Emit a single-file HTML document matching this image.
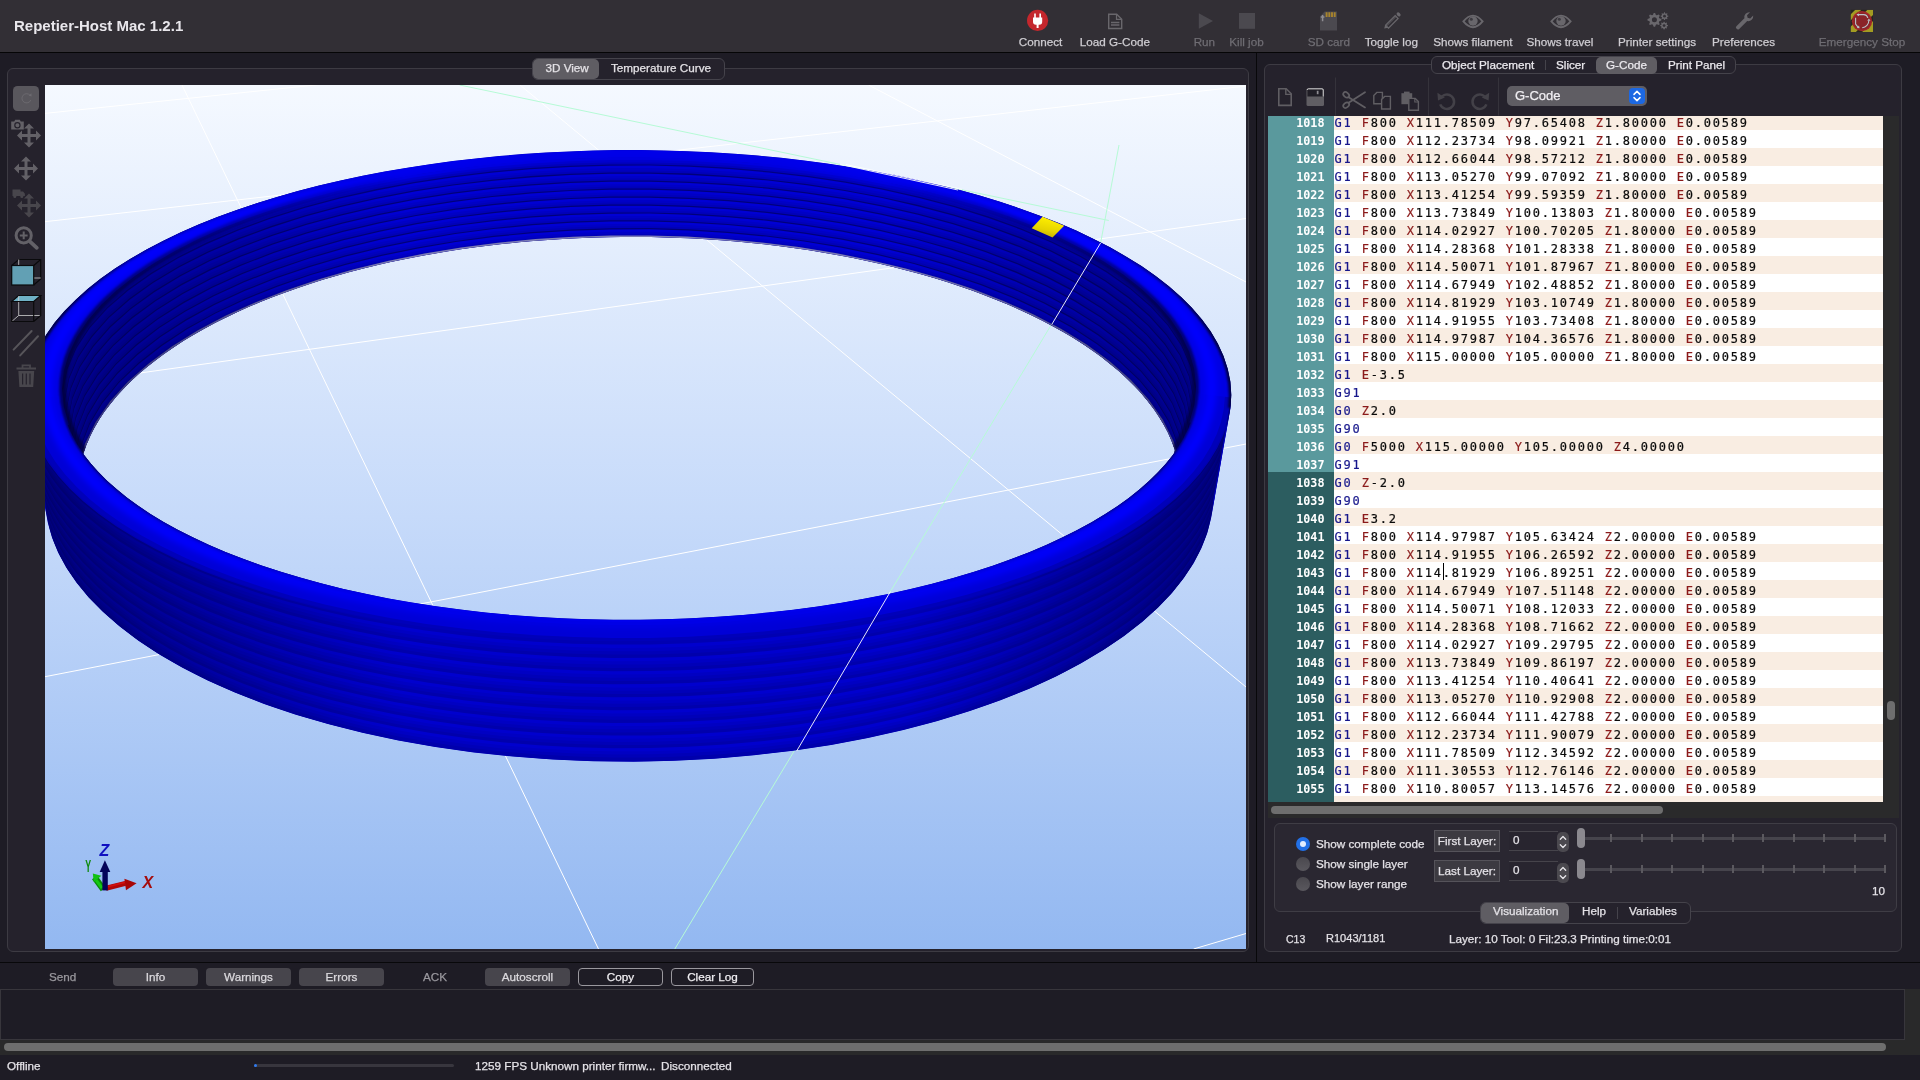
<!DOCTYPE html>
<html lang="en"><head><meta charset="utf-8"><title>Repetier-Host Mac 1.2.1</title>
<style>
*{box-sizing:border-box;margin:0;padding:0}
html,body{width:1920px;height:1080px;overflow:hidden;background:#1e1c25}
body{font-family:"Liberation Sans",sans-serif;font-size:11.7px;color:#dddbe0;-webkit-font-smoothing:antialiased}
#app{will-change:transform;position:relative;width:1920px;height:1080px;background:#1e1c25;overflow:hidden}
.abs{position:absolute}
.t{position:absolute;white-space:pre;line-height:14px;height:14px;-webkit-text-stroke:0.25px;color:#e4e2e7}
.tc{text-align:center}
#tb{position:absolute;left:0;top:0;width:1920px;height:51.5px;background:#322f35}
#tbline{position:absolute;left:0;top:51.5px;width:1920px;height:1.5px;background:#050506}
#title{position:absolute;left:14px;top:16.75px;font-size:15px;font-weight:700;color:#e9e7ec;line-height:18px;white-space:pre}
.tl{position:absolute;top:35px;-webkit-text-stroke:0.25px;line-height:14px;white-space:pre;color:#cfcdd2;font-size:11.7px;transform:translateX(-50%)}
.tl.dis{color:#6f6d73}
.ti{position:absolute}
.gb{position:absolute;border:1px solid #3d3b43;border-radius:6px;background:#25222c}
.seg{position:absolute;border:1px solid #45434b;border-radius:6px;background:#25222c}
.segsel{position:absolute;border-radius:5px;background:#5f5d63}
.v3d{position:absolute;left:45px;top:85px;display:block}
#vsplit{position:absolute;left:1256px;top:53px;width:1px;height:909px;background:#08080a}
#hsplit{position:absolute;left:0;top:962px;width:1920px;height:1px;background:#08080a}
.code{position:absolute;left:1268px;top:116px;width:615px;height:686px;overflow:hidden;background:#fff}
.row{position:absolute;left:0;width:615px;height:18px;white-space:pre}
.row.p{background:#f9ede2}
.gut{position:absolute;left:0;top:0;width:66px;height:18px;background:#5a999d;color:#fff;font-family:"DejaVu Sans Mono","Liberation Mono",monospace;font-weight:700;font-size:11.75px;line-height:22px;text-align:right;padding-right:9.5px;overflow:hidden}
.gut.d{background:#2c5d60}
.ct{position:absolute;left:66.6px;top:2px;height:18px;line-height:18px;font-family:"DejaVu Sans Mono","Liberation Mono",monospace;font-size:12px;letter-spacing:1.776px;color:#0a0a0a;-webkit-text-stroke:0.2px}
.ct i{font-style:normal;color:#8b1a1a}
.ct b{font-weight:400;color:#17178c}
.btn{position:absolute;top:968px;height:18px;border-radius:4px;background:#47454c;color:#dcdade;text-align:center;line-height:18px;font-size:11.7px;-webkit-text-stroke:0.25px}
.btn.o{background:transparent;border:1px solid #9a989e;line-height:16px;color:#f0eef2}

</style></head>
<body>
<div id="app">
<div id="tb"></div><div id="tbline"></div>
<div id="title">Repetier-Host Mac 1.2.1</div>
<div class="tl" style="left:1040.5px">Connect</div>
<div class="tl" style="left:1114.8px">Load G-Code</div>
<div class="tl dis" style="left:1204.4px">Run</div>
<div class="tl dis" style="left:1246.5px">Kill job</div>
<div class="tl dis" style="left:1328.8px">SD card</div>
<div class="tl" style="left:1391.3px">Toggle log</div>
<div class="tl" style="left:1472.8px">Shows filament</div>
<div class="tl" style="left:1560px">Shows travel</div>
<div class="tl" style="left:1657px">Printer settings</div>
<div class="tl" style="left:1743.5px">Preferences</div>
<div class="tl dis" style="left:1862px">Emergency Stop</div>
<svg class="abs" style="left:1000px;top:0" width="920" height="51" viewBox="1000 0 920 51"><circle cx="1037.6" cy="20.4" r="10.6" fill="#c4272d"/><path d="M1034.2,13.5h1.6v4h3.6v-4h1.6v4h1.2v4.2a3,3 0 0 1 -3,3h-0.6v3.3h-2v-3.3h-0.6a3,3 0 0 1 -3,-3v-4.2h1.2z" fill="#fff"/><path d="M1108.7,14.2h8l5,5v9.3h-13z" fill="none" stroke="#69676c" stroke-width="1.4"/><path d="M1116.5,14.2v5.2h5.2" fill="none" stroke="#69676c" stroke-width="1.2"/><path d="M1111,22.5h8.4M1111,25h8.4" stroke="#69676c" stroke-width="1.4"/><path d="M1198.8,13.2L1213,21L1198.8,28.8z" fill="#4b494f"/><rect x="1239" y="13" width="16" height="15.8" fill="#4b494f"/><path d="M1320,16.6l4.6,-5.2h12.4v19.2h-17z" fill="#4b494f"/><path d="M1326.6,12.2v4.8M1329.3,12.2v4.8M1332,12.2v4.8M1334.7,12.2v4.8" stroke="#a8842c" stroke-width="1.9"/><path d="M1322.6,15v6.2M1320.8,16.9h3.6" stroke="#8f8d93" stroke-width="1.5"/><path d="M1385.6,25.2l9.6,-9.6l2.9,2.9l-9.6,9.6z" fill="none" stroke="#69676c" stroke-width="1.2"/><path d="M1384.2,28.6l1,-3.8l2.9,2.9z" fill="#69676c"/><path d="M1386.6,25.9l9.6,-9.6" stroke="#69676c" stroke-width="0.9"/><ellipse cx="1398.6" cy="14.4" rx="2.3" ry="1.7" transform="rotate(45 1398.6 14.4)" fill="#69676c"/><path d="M1463.4,21.4q9.6,-11.6 19.2,0q-9.6,11.6 -19.2,0z" fill="none" stroke="#69676c" stroke-width="1.9"/><circle cx="1473" cy="21" r="4.7" fill="#69676c"/><circle cx="1471.3" cy="19.3" r="1.5" fill="#3c3a40"/><path d="M1551.4,21.4q9.6,-11.6 19.2,0q-9.6,11.6 -19.2,0z" fill="none" stroke="#69676c" stroke-width="1.9"/><circle cx="1561" cy="21" r="4.7" fill="#69676c"/><circle cx="1559.3" cy="19.3" r="1.5" fill="#3c3a40"/><path d="M1661.3,19.1L1661.3,20.5L1659.3,21.3L1658.9,22.2L1659.7,24.2L1658.8,25.1L1656.8,24.3L1655.9,24.7L1655.1,26.7L1653.7,26.7L1652.9,24.7L1652.0,24.3L1650.0,25.1L1649.1,24.2L1649.9,22.2L1649.5,21.3L1647.5,20.5L1647.5,19.1L1649.5,18.3L1649.9,17.4L1649.1,15.4L1650.0,14.5L1652.0,15.3L1652.9,14.9L1653.7,12.9L1655.1,12.9L1655.9,14.9L1656.8,15.3L1658.8,14.5L1659.7,15.4L1658.9,17.4L1659.3,18.3Z" fill="#69676c"/><circle cx="1654.4" cy="19.8" r="2.5" fill="#322f35"/><path d="M1668.4,15.8L1668.4,16.6L1667.3,17.0L1667.0,17.6L1667.5,18.7L1667.0,19.2L1665.9,18.7L1665.3,19.0L1664.9,20.1L1664.1,20.1L1663.7,19.0L1663.1,18.7L1662.0,19.2L1661.5,18.7L1662.0,17.6L1661.7,17.0L1660.6,16.6L1660.6,15.8L1661.7,15.4L1662.0,14.8L1661.5,13.7L1662.0,13.2L1663.1,13.7L1663.7,13.4L1664.1,12.3L1664.9,12.3L1665.3,13.4L1665.9,13.7L1667.0,13.2L1667.5,13.7L1667.0,14.8L1667.3,15.4Z" fill="#69676c"/><circle cx="1664.5" cy="16.2" r="1.4" fill="#322f35"/><path d="M1668.0,25.2L1668.0,26.0L1666.9,26.4L1666.6,27.0L1667.1,28.1L1666.6,28.6L1665.5,28.1L1664.9,28.4L1664.5,29.5L1663.7,29.5L1663.3,28.4L1662.7,28.1L1661.6,28.6L1661.1,28.1L1661.6,27.0L1661.3,26.4L1660.2,26.0L1660.2,25.2L1661.3,24.8L1661.6,24.2L1661.1,23.1L1661.6,22.6L1662.7,23.1L1663.3,22.8L1663.7,21.7L1664.5,21.7L1664.9,22.8L1665.5,23.1L1666.6,22.6L1667.1,23.1L1666.6,24.2L1666.9,24.8Z" fill="#69676c"/><circle cx="1664.1" cy="25.6" r="1.4" fill="#322f35"/><path d="M1736.6,28.8a1.8,1.8 0 0 1 -0.2,-2.6l8,-8a5,5 0 0 1 5.6,-6l-3,3l0.6,2.6l2.6,0.6l3,-3a5,5 0 0 1 -6,5.6l-8,8a1.8,1.8 0 0 1 -2.6,-0.2z" fill="#69676c"/><clipPath id="esq"><rect x="1850.8" y="9.8" width="22.2" height="22.2"/></clipPath><rect x="1850.8" y="9.8" width="22.2" height="22.2" fill="#26261e"/><path d="M1855.3,9.8L1861.3,9.8L1831.3,39.8L1825.3,39.8ZM1867.5,9.8L1878.1,9.8L1848.1,39.8L1837.5,39.8ZM1884.3,9.8L1896.8,9.8L1866.8,39.8L1854.3,39.8Z" fill="#a39c22" clip-path="url(#esq)"/><circle cx="1862" cy="21.2" r="10.1" fill="#a4262a"/><circle cx="1862" cy="21.2" r="8.6" fill="#8a2428"/><path d="M1857.2,14.6h6.6a4.4,4.4 0 0 1 4,3.4M1868.8,20.5a7,7 0 0 1 -6.6,7.2M1855.6,17.8v6.2l2.8,3.6" fill="none" stroke="#b9c3c8" stroke-width="1.1"/><path d="M1856.4,14.4l2.6,-0.8v2.6zM1868.9,18.4l1.6,2.4h-3.2zM1859.6,28.2l-2.8,-0.2l2.2,-2.4z" fill="#b9c3c8"/></svg>
<div class="gb" style="left:7px;top:68px;width:1242px;height:884px"></div>
<div class="seg" style="left:532px;top:58px;width:193px;height:22px"></div>
<div class="segsel" style="left:533px;top:59px;width:66px;height:20px"></div>
<div class="t " style="left:545.5px;top:60.5px;color:#e4e2e6;">3D View</div>
<div class="t " style="left:611px;top:60.5px;color:#e4e2e6;">Temperature Curve</div>
<svg class="v3d" width="1201" height="864" viewBox="45 85 1201 864">
<defs>
<linearGradient id="bg" x1="0" y1="0" x2="0" y2="1"><stop offset="0" stop-color="#f5f9ff"/><stop offset="0.5" stop-color="#c6dafa"/><stop offset="1" stop-color="#93b8f1"/></linearGradient>
<clipPath id="rc"><path clip-rule="evenodd" d="M26.5,398.8L27.2,385.4L29.6,372.3L33.6,359.4L39.2,346.8L46.3,334.6L54.7,322.6L64.5,311.1L75.5,299.9L87.6,289L100.8,278.6L115,268.6L130.1,259L146.1,249.8L162.9,241L180.4,232.6L198.6,224.6L217.4,217.1L236.8,210L256.7,203.3L277.1,197L297.9,191.1L319.1,185.6L340.7,180.5L362.7,175.8L384.9,171.5L407.4,167.7L430.1,164.2L453,161.1L476.1,158.4L499.3,156L522.6,154.1L546.1,152.5L569.6,151.4L593.2,150.6L616.8,150.1L640.4,150.1L664,150.4L687.6,151.2L711.1,152.3L734.6,153.7L757.9,155.6L781.1,157.8L804.1,160.5L827,163.5L849.7,166.9L872.1,170.7L894.3,174.8L916.1,179.4L937.7,184.4L958.8,189.8L979.6,195.6L1000,201.8L1019.8,208.4L1039.2,215.4L1058,222.8L1076.1,230.6L1093.6,238.9L1110.4,247.6L1126.3,256.7L1141.5,266.1L1155.7,276L1168.9,286.3L1181.1,297L1192.1,308.1L1202,319.5L1210.6,331.3L1217.8,343.5L1223.5,355.9L1227.7,368.7L1230.4,381.8L1231.3,395L1230.4,408.5L1211.1,518.1L1207.3,533L1201.5,547.9L1193.8,562.9L1184,577.8L1172.2,592.7L1158.2,607.5L1142.1,622L1123.8,636.2L1103.3,650.1L1080.7,663.5L1056,676.4L1029.3,688.7L1000.5,700.3L969.9,711.1L937.5,721L903.4,730L867.9,738L831,744.9L792.9,750.7L754,755.3L714.3,758.7L674.1,760.8L633.7,761.7L593.2,761.3L552.9,759.6L513.1,756.6L473.9,752.4L435.6,747L398.4,740.5L362.5,732.8L328.1,724.1L295.2,714.5L264.1,704L234.9,692.6L207.7,680.5L182.5,667.8L159.4,654.5L138.5,640.8L119.7,626.6L103.1,612.1L88.7,597.4L76.4,582.5L66.2,567.5L58.1,552.5L52,537.5L47.8,522.6L27.7,412.4ZM84.1,454.9L90.8,463.6L98.4,472.1L107,480.7L116.5,489.1L126.8,497.5L138.2,505.8L150.4,513.9L163.6,521.9L177.7,529.7L192.7,537.3L208.6,544.7L225.4,551.9L243,558.8L261.5,565.5L280.9,571.8L301,577.8L321.8,583.5L343.4,588.9L365.6,593.8L388.5,598.4L411.9,602.6L435.9,606.3L460.4,609.6L485.2,612.5L510.5,614.9L536,616.8L561.8,618.2L587.7,619.2L613.7,619.7L639.8,619.7L665.8,619.2L691.7,618.3L717.5,616.8L743.1,614.9L768.3,612.5L793.3,609.7L817.8,606.4L841.8,602.7L865.3,598.5L888.3,593.9L910.6,589L932.2,583.7L953.2,578L973.4,572L992.8,565.7L1011.4,559L1029.2,552.2L1046.2,545L1062.2,537.6L1077.3,530L1091.6,522.2L1104.9,514.3L1117.3,506.2L1128.8,497.9L1139.4,489.6L1149,481.1L1157.7,472.6L1165.6,464L1172.5,455.4L1174.1,453.3L1174.9,449.9L1171.8,441.4L1168.1,433L1163.8,424.8L1158.9,416.7L1153.5,408.7L1147.6,400.9L1141.2,393.3L1134.2,385.8L1126.8,378.5L1119,371.3L1110.7,364.4L1102.1,357.6L1093,351L1083.6,344.6L1073.8,338.3L1063.7,332.3L1053.2,326.4L1042.4,320.7L1031.4,315.3L1020.1,310L1008.5,304.8L996.6,299.9L984.5,295.2L972.2,290.6L959.7,286.3L947,282.1L934.1,278.1L921,274.3L907.7,270.7L894.3,267.3L880.8,264.1L867.1,261L853.2,258.1L839.3,255.4L825.3,253L811.1,250.6L796.9,248.5L782.5,246.6L768.1,244.8L753.7,243.2L739.1,241.8L724.5,240.6L709.9,239.5L695.2,238.6L680.5,238L665.8,237.5L651.1,237.1L636.3,237L621.5,237L606.8,237.2L592,237.6L577.3,238.2L562.6,238.9L547.9,239.9L533.3,241L518.7,242.3L504.1,243.8L489.6,245.4L475.2,247.2L460.9,249.3L446.6,251.5L432.4,253.9L418.4,256.4L404.4,259.2L390.6,262.1L376.8,265.2L363.3,268.6L349.8,272.1L336.6,275.7L323.4,279.6L310.5,283.7L297.8,287.9L285.2,292.4L272.9,297L260.8,301.8L248.9,306.8L237.3,312L226,317.4L214.9,323L204.2,328.8L193.7,334.7L183.6,340.8L173.8,347.2L164.4,353.7L155.3,360.4L146.7,367.2L138.4,374.3L130.6,381.5L123.3,388.9L116.4,396.5L110.1,404.2L104.2,412.1L98.9,420.1L94.1,428.3L89.9,436.7L86.3,445.1L83.3,453.7L83.3,453.7Z"/></clipPath>
<clipPath id="tic"><path d="M1126.3,256.7L1110.4,247.6L1093.6,238.9L1076.1,230.6L1058,222.8L1039.2,215.4L1019.8,208.4L1000,201.8L979.6,195.6L958.8,189.8L937.7,184.4L916.1,179.4L894.3,174.8L872.1,170.7L849.7,166.9L827,163.5L804.1,160.5L781.1,157.8L757.9,155.6L734.6,153.7L711.1,152.3L687.6,151.2L664,150.4L640.4,150.1L616.8,150.1L593.2,150.6L569.6,151.4L546.1,152.5L522.6,154.1L499.3,156L476.1,158.4L453,161.1L430.1,164.2L407.4,167.7L384.9,171.5L362.7,175.8L340.7,180.5L319.1,185.6L297.9,191.1L277.1,197L256.7,203.3L236.8,210L217.4,217.1L198.6,224.6L180.4,232.6L162.9,241L146.1,249.8L130.1,259L115,268.6L100.8,278.6L87.6,289L75.5,299.9L64.5,311.1L54.7,322.6L46.3,334.6L39.2,346.8L33.6,359.4L29.6,372.3L27.2,385.4L26.5,398.8L27.7,412.4L30.7,426.1L35.7,440L42.8,453.9L52,467.9L63.3,481.7L76.8,495.5L92.6,509.1L110.7,522.5L131,535.5L153.6,548.1L178.5,560.3L205.5,571.9L234.6,582.9L265.8,593.1L298.9,602.6L333.8,611.2L370.2,618.9L408.2,625.5L447.4,631.2L487.7,635.7L528.7,639L570.4,641.3L612.4,642.3L654.5,642.1L696.5,640.7L738,638.1L778.9,634.3L818.9,629.5L857.8,623.5L895.4,616.5L931.5,608.6L965.9,599.7L998.6,590L1029.3,579.5L1057.9,568.3L1084.4,556.6L1108.7,544.3L1130.8,531.5L1150.6,518.4L1168.2,505L1183.5,491.4L1196.6,477.6L1207.5,463.7L1216.3,449.8L1223,436L1227.7,422.2L1230.4,408.5L1231.3,395L1230.4,381.8L1227.7,368.7L1223.5,355.9L1217.8,343.5L1210.6,331.3L1202,319.5L1192.1,308.1L1181.1,297L1168.9,286.3L1155.7,276L1141.5,266.1Z"/></clipPath>
<linearGradient id="dk" x1="45" x2="1246" y1="0" y2="0" gradientUnits="userSpaceOnUse"><stop offset="0" stop-color="#000040" stop-opacity="0.55"/><stop offset="0.10" stop-color="#000040" stop-opacity="0.4"/><stop offset="0.3" stop-color="#000040" stop-opacity="0"/><stop offset="0.7" stop-color="#000040" stop-opacity="0"/><stop offset="0.9" stop-color="#000040" stop-opacity="0.4"/><stop offset="1" stop-color="#000040" stop-opacity="0.55"/></linearGradient>
<linearGradient id="dkf" x1="45" x2="1246" y1="0" y2="0" gradientUnits="userSpaceOnUse"><stop offset="0" stop-color="#000030" stop-opacity="0.5"/><stop offset="0.08" stop-color="#000030" stop-opacity="0.36"/><stop offset="0.3" stop-color="#000030" stop-opacity="0"/><stop offset="0.72" stop-color="#000030" stop-opacity="0"/><stop offset="0.92" stop-color="#000030" stop-opacity="0.38"/><stop offset="1" stop-color="#000030" stop-opacity="0.5"/></linearGradient>
<linearGradient id="edge" x1="45" x2="1246" y1="0" y2="0" gradientUnits="userSpaceOnUse"><stop offset="0" stop-color="#000030" stop-opacity="0.9"/><stop offset="0.12" stop-color="#000030" stop-opacity="0.6"/><stop offset="0.3" stop-color="#000030" stop-opacity="0"/><stop offset="0.7" stop-color="#000030" stop-opacity="0"/><stop offset="0.88" stop-color="#000030" stop-opacity="0.6"/><stop offset="1" stop-color="#000030" stop-opacity="0.9"/></linearGradient>
<linearGradient id="crg" x1="45" x2="1246" y1="0" y2="0" gradientUnits="userSpaceOnUse"><stop offset="0" stop-color="#00f" stop-opacity="1"/><stop offset="0.15" stop-color="#00f" stop-opacity="0.9"/><stop offset="0.4" stop-color="#00f" stop-opacity="0.25"/><stop offset="0.6" stop-color="#00f" stop-opacity="0.25"/><stop offset="0.85" stop-color="#00f" stop-opacity="0.9"/><stop offset="1" stop-color="#00f" stop-opacity="1"/></linearGradient>
<filter id="bl" x="-5%" y="-5%" width="110%" height="110%"><feGaussianBlur stdDeviation="3"/></filter>
<filter id="bl2" x="-5%" y="-5%" width="110%" height="110%"><feGaussianBlur stdDeviation="1.2"/></filter>
</defs>
<rect x="45" y="85" width="1201" height="864" fill="url(#bg)"/>
<path d="M45,113.4L325,84M45,221.7L1246,86M140,373L1246,218.5M45,676.7L1246,444M1193.6,949L1246,933.5M182,85L598.5,949M520,85L1246,687M868.5,85L1246,282" stroke="#fff" stroke-width="1" fill="none"/>
<path d="M459.6,85L1108.8,220.5M1119,145L1100.6,243L674.8,949" stroke="#b6fbd6" stroke-width="1" fill="none"/>
<path fill-rule="evenodd" d="M26.5,398.8L27.2,385.4L29.6,372.3L33.6,359.4L39.2,346.8L46.3,334.6L54.7,322.6L64.5,311.1L75.5,299.9L87.6,289L100.8,278.6L115,268.6L130.1,259L146.1,249.8L162.9,241L180.4,232.6L198.6,224.6L217.4,217.1L236.8,210L256.7,203.3L277.1,197L297.9,191.1L319.1,185.6L340.7,180.5L362.7,175.8L384.9,171.5L407.4,167.7L430.1,164.2L453,161.1L476.1,158.4L499.3,156L522.6,154.1L546.1,152.5L569.6,151.4L593.2,150.6L616.8,150.1L640.4,150.1L664,150.4L687.6,151.2L711.1,152.3L734.6,153.7L757.9,155.6L781.1,157.8L804.1,160.5L827,163.5L849.7,166.9L872.1,170.7L894.3,174.8L916.1,179.4L937.7,184.4L958.8,189.8L979.6,195.6L1000,201.8L1019.8,208.4L1039.2,215.4L1058,222.8L1076.1,230.6L1093.6,238.9L1110.4,247.6L1126.3,256.7L1141.5,266.1L1155.7,276L1168.9,286.3L1181.1,297L1192.1,308.1L1202,319.5L1210.6,331.3L1217.8,343.5L1223.5,355.9L1227.7,368.7L1230.4,381.8L1231.3,395L1230.4,408.5L1211.1,518.1L1207.3,533L1201.5,547.9L1193.8,562.9L1184,577.8L1172.2,592.7L1158.2,607.5L1142.1,622L1123.8,636.2L1103.3,650.1L1080.7,663.5L1056,676.4L1029.3,688.7L1000.5,700.3L969.9,711.1L937.5,721L903.4,730L867.9,738L831,744.9L792.9,750.7L754,755.3L714.3,758.7L674.1,760.8L633.7,761.7L593.2,761.3L552.9,759.6L513.1,756.6L473.9,752.4L435.6,747L398.4,740.5L362.5,732.8L328.1,724.1L295.2,714.5L264.1,704L234.9,692.6L207.7,680.5L182.5,667.8L159.4,654.5L138.5,640.8L119.7,626.6L103.1,612.1L88.7,597.4L76.4,582.5L66.2,567.5L58.1,552.5L52,537.5L47.8,522.6L27.7,412.4ZM84.1,454.9L90.8,463.6L98.4,472.1L107,480.7L116.5,489.1L126.8,497.5L138.2,505.8L150.4,513.9L163.6,521.9L177.7,529.7L192.7,537.3L208.6,544.7L225.4,551.9L243,558.8L261.5,565.5L280.9,571.8L301,577.8L321.8,583.5L343.4,588.9L365.6,593.8L388.5,598.4L411.9,602.6L435.9,606.3L460.4,609.6L485.2,612.5L510.5,614.9L536,616.8L561.8,618.2L587.7,619.2L613.7,619.7L639.8,619.7L665.8,619.2L691.7,618.3L717.5,616.8L743.1,614.9L768.3,612.5L793.3,609.7L817.8,606.4L841.8,602.7L865.3,598.5L888.3,593.9L910.6,589L932.2,583.7L953.2,578L973.4,572L992.8,565.7L1011.4,559L1029.2,552.2L1046.2,545L1062.2,537.6L1077.3,530L1091.6,522.2L1104.9,514.3L1117.3,506.2L1128.8,497.9L1139.4,489.6L1149,481.1L1157.7,472.6L1165.6,464L1172.5,455.4L1174.1,453.3L1174.9,449.9L1171.8,441.4L1168.1,433L1163.8,424.8L1158.9,416.7L1153.5,408.7L1147.6,400.9L1141.2,393.3L1134.2,385.8L1126.8,378.5L1119,371.3L1110.7,364.4L1102.1,357.6L1093,351L1083.6,344.6L1073.8,338.3L1063.7,332.3L1053.2,326.4L1042.4,320.7L1031.4,315.3L1020.1,310L1008.5,304.8L996.6,299.9L984.5,295.2L972.2,290.6L959.7,286.3L947,282.1L934.1,278.1L921,274.3L907.7,270.7L894.3,267.3L880.8,264.1L867.1,261L853.2,258.1L839.3,255.4L825.3,253L811.1,250.6L796.9,248.5L782.5,246.6L768.1,244.8L753.7,243.2L739.1,241.8L724.5,240.6L709.9,239.5L695.2,238.6L680.5,238L665.8,237.5L651.1,237.1L636.3,237L621.5,237L606.8,237.2L592,237.6L577.3,238.2L562.6,238.9L547.9,239.9L533.3,241L518.7,242.3L504.1,243.8L489.6,245.4L475.2,247.2L460.9,249.3L446.6,251.5L432.4,253.9L418.4,256.4L404.4,259.2L390.6,262.1L376.8,265.2L363.3,268.6L349.8,272.1L336.6,275.7L323.4,279.6L310.5,283.7L297.8,287.9L285.2,292.4L272.9,297L260.8,301.8L248.9,306.8L237.3,312L226,317.4L214.9,323L204.2,328.8L193.7,334.7L183.6,340.8L173.8,347.2L164.4,353.7L155.3,360.4L146.7,367.2L138.4,374.3L130.6,381.5L123.3,388.9L116.4,396.5L110.1,404.2L104.2,412.1L98.9,420.1L94.1,428.3L89.9,436.7L86.3,445.1L83.3,453.7L83.3,453.7Z" fill="#0000b8"/>
<g clip-path="url(#rc)">
<g clip-path="url(#tic)">
<path d="M1190.8,422.8L1196.5,400.2L1196.9,378.1L1192.2,356.6L1182.9,335.9L1169.4,316.2L1152.1,297.4L1131.5,279.8L1107.8,263.3L1081.4,248L1052.7,233.9L1021.9,221L989.4,209.3L955.3,198.8L919.8,189.5L883.3,181.5L845.8,174.6L807.5,168.8L768.7,164.3L729.3,160.9L689.7,158.6L649.8,157.5L609.9,157.6L570,158.7L530.3,161.1L490.9,164.5L451.9,169.2L413.6,175L375.9,182L339.3,190.1L303.7,199.5L269.4,210.1L236.7,221.9L205.8,235L176.9,249.2L150.4,264.7L126.6,281.3L105.9,299.1L88.6,318L75.1,337.9L65.8,358.7L61.2,380.3L61.7,402.6L67.6,425.2L68.4,429.7L62.4,407L61.9,384.6L66.5,362.9L75.8,342L89.2,322.1L106.5,303.1L127.2,285.2L151,268.5L177.4,253L206.2,238.7L237.1,225.6L269.8,213.8L304,203.1L339.6,193.7L376.2,185.5L413.8,178.5L452.1,172.7L491,168L530.4,164.5L570,162.2L609.9,161L649.8,160.9L689.6,162.1L729.3,164.3L768.5,167.7L807.4,172.3L845.6,178L883,185L919.6,193.1L954.9,202.4L989,212.9L1021.5,224.7L1052.3,237.6L1080.9,251.8L1107.3,267.2L1130.9,283.7L1151.5,301.4L1168.8,320.2L1182.2,340.1L1191.5,360.8L1196.1,382.4L1195.8,404.6L1190,427.3Z" fill="#0000de"/>
<path d="M1190.3,426L1196,403.4L1196.3,381.2L1191.7,359.6L1182.4,338.9L1168.9,319.1L1151.7,300.3L1131.1,282.6L1107.4,266.1L1081.1,250.7L1052.4,236.5L1021.6,223.6L989.1,211.9L955,201.4L919.6,192.1L883.1,184L845.6,177L807.4,171.3L768.6,166.7L729.3,163.3L689.6,161.1L649.8,160L609.9,160L570,161.2L530.3,163.5L491,167L452,171.7L413.7,177.5L376.1,184.5L339.5,192.7L303.9,202.1L269.7,212.7L237,224.6L206.1,237.6L177.3,251.9L150.8,267.4L127,284.1L106.3,302L89,320.9L75.6,340.8L66.3,361.7L61.7,383.4L62.2,405.7L68.2,428.4L68.9,432.9L63,410.1L62.5,387.7L67,366L76.2,345L89.7,325L106.9,306L127.6,288L151.4,271.3L177.8,255.7L206.6,241.4L237.4,228.3L270.1,216.4L304.3,205.7L339.8,196.2L376.4,188L413.9,181L452.2,175.1L491.1,170.5L530.4,166.9L570.1,164.6L609.9,163.4L649.8,163.4L689.6,164.5L729.2,166.8L768.5,170.2L807.3,174.8L845.4,180.5L882.9,187.5L919.4,195.6L954.7,205L988.8,215.5L1021.2,227.3L1052,240.3L1080.6,254.5L1106.9,269.9L1130.5,286.5L1151.1,304.3L1168.3,323.1L1181.7,343L1191,363.8L1195.6,385.5L1195.3,407.7L1189.5,430.5Z" fill="#0000cd"/>
<path d="M1189.7,429.2L1195.5,406.5L1195.8,384.2L1191.2,362.6L1181.9,341.8L1168.5,322L1151.3,303.1L1130.7,285.4L1107,268.8L1080.7,253.4L1052.1,239.2L1021.4,226.2L988.9,214.5L954.8,203.9L919.4,194.6L882.9,186.5L845.5,179.5L807.3,173.8L768.5,169.2L729.2,165.8L689.6,163.5L649.8,162.4L609.9,162.4L570.1,163.6L530.4,166L491.1,169.5L452.2,174.1L413.9,180L376.3,187L339.7,195.2L304.2,204.7L270,215.3L237.3,227.2L206.4,240.3L177.6,254.6L151.2,270.2L127.5,286.9L106.8,304.8L89.5,323.8L76,343.8L66.8,364.8L62.3,386.5L62.8,408.9L68.7,431.7L69.4,435.6L63.4,412.7L62.9,390.3L67.5,368.5L76.6,347.5L90.1,327.4L107.3,308.3L128,290.4L151.7,273.6L178.1,258L206.8,243.6L237.7,230.4L270.3,218.5L304.5,207.8L339.9,198.4L376.5,190.1L414.1,183L452.3,177.2L491.2,172.5L530.5,169L570.1,166.6L609.9,165.4L649.8,165.4L689.6,166.5L729.1,168.8L768.4,172.2L807.2,176.8L845.3,182.6L882.7,189.6L919.2,197.7L954.5,207.1L988.5,217.7L1021,229.5L1051.7,242.5L1080.3,256.7L1106.6,272.2L1130.2,288.9L1150.8,306.7L1167.9,325.6L1181.4,345.5L1190.6,366.4L1195.2,388L1194.8,410.3L1189.1,433.1Z" fill="#0000ba"/>
<path d="M1189.3,431.9L1195.1,409.1L1195.4,386.8L1190.8,365.2L1181.5,344.3L1168.1,324.4L1150.9,305.5L1130.3,287.7L1106.7,271.1L1080.5,255.7L1051.8,241.4L1021.1,228.4L988.6,216.6L954.6,206.1L919.3,196.7L882.8,188.6L845.4,181.6L807.2,175.8L768.4,171.2L729.2,167.8L689.6,165.5L649.8,164.4L609.9,164.5L570.1,165.7L530.5,168L491.2,171.5L452.3,176.2L414,182.1L376.5,189.1L339.9,197.3L304.4,206.8L270.2,217.5L237.6,229.4L206.7,242.5L177.9,256.9L151.5,272.5L127.8,289.3L107.1,307.2L89.9,326.2L76.5,346.3L67.3,367.3L62.7,389.1L63.2,411.5L69.2,434.3L69.7,437.2L63.7,414.3L63.2,391.8L67.7,370L76.9,349L90.3,328.9L107.5,309.8L128.2,291.8L151.9,275L178.3,259.3L207,244.9L237.8,231.8L270.4,219.8L304.6,209.1L340.1,199.6L376.6,191.4L414.1,184.3L452.4,178.4L491.2,173.7L530.5,170.2L570.1,167.9L609.9,166.7L649.8,166.6L689.5,167.7L729.1,170L768.3,173.4L807.1,178.1L845.3,183.8L882.6,190.8L919.1,199L954.4,208.4L988.4,219L1020.9,230.8L1051.5,243.8L1080.1,258.1L1106.4,273.6L1130,290.3L1150.5,308.1L1167.7,327L1181.1,347L1190.3,367.9L1195,389.6L1194.6,411.9L1188.8,434.7Z" fill="#000082"/>
<path d="M1189,433.4L1194.8,410.7L1195.2,388.3L1190.5,366.7L1181.3,345.8L1167.9,325.8L1150.7,306.9L1130.1,289.1L1106.5,272.5L1080.3,257L1051.7,242.8L1021,229.7L988.5,217.9L954.5,207.3L919.2,198L882.7,189.8L845.3,182.8L807.2,177.1L768.4,172.5L729.1,169L689.6,166.8L649.8,165.6L609.9,165.7L570.1,166.9L530.5,169.2L491.2,172.7L452.3,177.4L414.1,183.3L376.6,190.4L340,198.6L304.5,208.1L270.3,218.8L237.7,230.7L206.9,243.9L178.1,258.3L151.7,273.9L128,290.7L107.4,308.6L90.1,327.7L76.7,347.8L67.5,368.8L63,390.6L63.5,413L69.5,435.9L70.2,440.4L64.2,417.4L63.7,394.9L68.2,373L77.4,351.9L90.8,331.8L108,312.6L128.6,294.6L152.3,277.7L178.6,262.1L207.3,247.6L238.1,234.4L270.7,222.4L304.8,211.7L340.3,202.2L376.8,193.9L414.3,186.8L452.5,180.9L491.3,176.2L530.6,172.6L570.2,170.3L610,169.1L649.8,169L689.5,170.2L729,172.4L768.3,175.9L807,180.5L845.1,186.3L882.5,193.3L918.9,201.5L954.2,210.9L988.2,221.5L1020.6,233.4L1051.2,246.5L1079.8,260.8L1106,276.3L1129.6,293L1150.1,310.9L1167.3,329.9L1180.7,349.9L1189.9,370.9L1194.5,392.6L1194.1,415L1188.3,437.9Z" fill="#0000d4"/>
<path d="M1188.5,436.6L1194.3,413.8L1194.7,391.4L1190,369.7L1180.8,348.7L1167.5,328.7L1150.3,309.8L1129.7,291.9L1106.2,275.2L1079.9,259.7L1051.4,245.4L1020.7,232.3L988.3,220.5L954.3,209.9L919,200.5L882.5,192.3L845.2,185.3L807,179.5L768.3,174.9L729.1,171.5L689.5,169.2L649.8,168.1L609.9,168.1L570.2,169.3L530.6,171.7L491.3,175.2L452.5,179.9L414.2,185.8L376.7,192.9L340.2,201.1L304.7,210.6L270.6,221.4L238,233.3L207.2,246.5L178.5,261L152.1,276.6L128.4,293.5L107.8,311.5L90.6,330.6L77.2,350.7L68,371.8L63.5,393.7L64,416.2L70,439.1L70.8,443.6L64.8,420.6L64.2,398L68.7,376L77.9,354.9L91.2,334.7L108.4,315.5L129,297.4L152.6,280.5L179,264.8L207.7,250.3L238.4,237L271,225L305.1,214.2L340.5,204.7L377,196.4L414.4,189.3L452.6,183.3L491.4,178.6L530.7,175.1L570.2,172.7L610,171.5L649.8,171.5L689.5,172.6L729,174.9L768.2,178.3L806.9,183L845,188.8L882.3,195.8L918.7,204L954,213.5L987.9,224.1L1020.3,236L1050.9,249.1L1079.5,263.5L1105.7,279.1L1129.2,295.8L1149.7,313.8L1166.8,332.8L1180.2,352.9L1189.4,373.9L1194,395.7L1193.6,418.1L1187.8,441.1Z" fill="#0000c6"/>
<path d="M1188,439.8L1193.8,416.9L1194.2,394.5L1189.6,372.7L1180.4,351.7L1167,331.6L1149.9,312.6L1129.4,294.7L1105.8,278L1079.6,262.4L1051,248.1L1020.4,235L988,223.1L954.1,212.4L918.8,203L882.4,194.8L845,187.8L806.9,182L768.2,177.4L729,173.9L689.5,171.6L649.8,170.5L610,170.5L570.2,171.7L530.7,174.1L491.4,177.6L452.6,182.4L414.4,188.3L376.9,195.4L340.4,203.7L305,213.2L270.9,224L238.3,236L207.5,249.2L178.8,263.7L152.5,279.4L128.8,296.3L108.2,314.3L91,333.5L77.7,353.7L68.5,374.8L64,396.7L64.6,419.3L70.5,442.3L71.2,446.2L65.2,423.1L64.7,400.5L69.1,378.5L78.3,357.3L91.6,337.1L108.8,317.8L129.3,299.7L153,282.8L179.3,267L207.9,252.5L238.7,239.2L271.2,227.2L305.3,216.4L340.7,206.8L377.2,198.4L414.6,191.3L452.8,185.4L491.5,180.7L530.7,177.1L570.3,174.7L610,173.5L649.8,173.5L689.4,174.6L728.9,176.9L768.1,180.4L806.8,185L844.9,190.9L882.2,197.9L918.5,206.1L953.8,215.6L987.7,226.3L1020.1,238.2L1050.7,251.3L1079.2,265.7L1105.4,281.3L1128.9,298.1L1149.4,316.1L1166.5,335.2L1179.8,355.3L1189,376.4L1193.5,398.2L1193.1,420.7L1187.3,443.7Z" fill="#0000b8"/>
<path d="M1187.5,442.4L1193.3,419.5L1193.7,397L1189.2,375.2L1180,354.1L1166.6,334L1149.5,315L1129,297L1105.5,280.2L1079.3,264.7L1050.8,250.3L1020.2,237.1L987.8,225.2L953.9,214.6L918.6,205.1L882.2,196.9L844.9,189.9L806.8,184L768.1,179.4L729,175.9L689.5,173.6L649.8,172.5L610,172.6L570.3,173.8L530.7,176.1L491.5,179.7L452.7,184.4L414.5,190.3L377.1,197.4L340.6,205.8L305.2,215.3L271.1,226.1L238.5,238.1L207.8,251.4L179.1,265.9L152.8,281.7L129.2,298.6L108.6,316.7L91.4,335.9L78.1,356.2L68.9,377.3L64.5,399.3L65,421.9L71,444.9L71.5,447.8L65.5,424.7L64.9,402L69.4,380L78.5,358.8L91.8,338.5L109,319.3L129.5,301.1L153.1,284.1L179.4,268.4L208.1,253.8L238.8,240.5L271.3,228.4L305.4,217.6L340.8,208L377.2,199.7L414.7,192.6L452.8,186.6L491.6,181.9L530.8,178.3L570.3,175.9L610,174.7L649.8,174.7L689.4,175.8L728.9,178.1L768,181.6L806.7,186.2L844.8,192.1L882.1,199.1L918.4,207.4L953.7,216.9L987.6,227.6L1019.9,239.5L1050.5,252.7L1079,267.1L1105.2,282.7L1128.7,299.5L1149.1,317.5L1166.2,336.6L1179.6,356.8L1188.7,377.8L1193.3,399.7L1192.9,422.3L1187.1,445.3Z" fill="#00007a"/>
<path d="M1187.3,444L1193.1,421L1193.5,398.5L1188.9,376.6L1179.8,355.6L1166.4,335.5L1149.3,316.4L1128.8,298.4L1105.3,281.6L1079.2,266L1050.6,251.6L1020,238.4L987.7,226.5L953.7,215.8L918.5,206.4L882.1,198.1L844.8,191.1L806.8,185.3L768.1,180.6L728.9,177.2L689.4,174.9L649.8,173.7L610,173.8L570.3,175L530.8,177.4L491.5,180.9L452.8,185.6L414.6,191.6L377.2,198.7L340.7,207L305.3,216.6L271.2,227.4L238.7,239.5L208,252.7L179.3,267.3L153,283L129.4,300L108.8,318.1L91.7,337.4L78.3,357.6L69.2,378.8L64.7,400.8L65.3,423.5L71.3,446.5L72,451L66,427.8L65.4,405.1L69.9,383L79,361.7L92.3,341.4L109.4,322.1L130,303.9L153.5,286.9L179.8,271L208.4,256.5L239.1,243.1L271.6,231L305.6,220.2L341,210.6L377.4,202.2L414.8,195L452.9,189.1L491.7,184.3L530.9,180.8L570.4,178.4L610,177.2L649.7,177.1L689.4,178.2L728.8,180.5L768,184L806.6,188.7L844.6,194.6L881.9,201.6L918.2,209.9L953.4,219.4L987.3,230.1L1019.6,242.1L1050.2,255.3L1078.7,269.8L1104.8,285.4L1128.3,302.3L1148.7,320.3L1165.8,339.5L1179.1,359.7L1188.2,380.8L1192.8,402.8L1192.4,425.4L1186.6,448.4Z" fill="#0000d4"/>
<path d="M1186.8,447.2L1192.6,424.1L1193,401.6L1188.4,379.6L1179.3,358.5L1166,338.4L1148.9,319.2L1128.4,301.2L1105,284.3L1078.8,268.7L1050.3,254.2L1019.8,241.1L987.4,229.1L953.5,218.4L918.3,208.9L882,200.6L844.7,193.6L806.7,187.7L768,183.1L728.9,179.6L689.4,177.3L649.7,176.1L610,176.2L570.3,177.4L530.8,179.8L491.6,183.3L452.9,188.1L414.7,194L377.4,201.2L340.9,209.6L305.5,219.2L271.5,230L239,242.1L208.3,255.4L179.7,270L153.4,285.8L129.8,302.8L109.3,321L92.1,340.2L78.8,360.6L69.7,381.8L65.2,403.9L65.8,426.6L71.8,449.7L72.6,454.1L66.6,430.9L66,408.2L70.4,386L79.5,364.7L92.8,344.3L109.9,324.9L130.4,306.7L153.9,289.6L180.1,273.7L208.7,259.1L239.4,245.7L271.9,233.6L305.9,222.7L341.2,213.1L377.6,204.7L415,197.5L453.1,191.5L491.8,186.8L530.9,183.2L570.4,180.8L610,179.6L649.7,179.5L689.4,180.7L728.8,183L767.9,186.5L806.5,191.1L844.5,197L881.7,204.1L918,212.4L953.2,221.9L987.1,232.7L1019.4,244.7L1049.9,257.9L1078.3,272.4L1104.4,288.2L1127.9,305.1L1148.3,323.2L1165.4,342.4L1178.6,362.6L1187.8,383.8L1192.3,405.8L1191.8,428.5L1186,451.6Z" fill="#0000c6"/>
<path d="M1186.2,450.3L1192,427.2L1192.5,404.6L1187.9,382.6L1178.8,361.4L1165.5,341.2L1148.5,322L1128,304L1104.6,287.1L1078.5,271.4L1050,256.9L1019.5,243.7L987.2,231.7L953.3,220.9L918.1,211.4L881.8,203.1L844.6,196L806.5,190.2L767.9,185.5L728.8,182L689.4,179.7L649.7,178.6L610,178.6L570.4,179.8L530.9,182.2L491.7,185.8L453,190.5L414.9,196.5L377.5,203.7L341.1,212.1L305.8,221.7L271.8,232.6L239.3,244.7L208.6,258.1L180,272.7L153.8,288.5L130.2,305.6L109.7,323.8L92.6,343.1L79.3,363.5L70.2,384.8L65.8,406.9L66.3,429.7L72.4,452.9L73,456.8L67,433.5L66.4,410.7L70.8,388.5L79.9,367.1L93.2,346.7L110.2,327.3L130.7,309L154.2,291.9L180.4,276L209,261.3L239.7,247.9L272.1,235.7L306.1,224.8L341.4,215.2L377.8,206.7L415.1,199.5L453.2,193.6L491.9,188.8L531,185.2L570.4,182.8L610.1,181.6L649.7,181.5L689.3,182.7L728.7,185L767.8,188.5L806.4,193.2L844.4,199.1L881.6,206.2L917.9,214.5L953,224L986.8,234.8L1019.1,246.9L1049.6,260.1L1078.1,274.7L1104.1,290.4L1127.6,307.4L1148,325.5L1165,344.8L1178.3,365.1L1187.3,386.3L1191.9,408.3L1191.4,431L1185.6,454.2Z" fill="#0000b8"/>
<path d="M1185.8,452.9L1191.6,429.8L1192.1,407.1L1187.5,385.1L1178.4,363.9L1165.2,343.6L1148.1,324.4L1127.7,306.3L1104.3,289.3L1078.2,273.6L1049.7,259.1L1019.2,245.8L987,233.8L953.1,223L917.9,213.5L881.7,205.2L844.4,198.1L806.4,192.2L767.8,187.5L728.8,184L689.3,181.7L649.7,180.6L610,180.6L570.4,181.8L531,184.2L491.8,187.8L453.1,192.6L415,198.6L377.7,205.8L341.3,214.2L306,223.8L272,234.7L239.5,246.9L208.9,260.3L180.3,274.9L154.1,290.8L130.5,307.9L110,326.1L93,345.5L79.7,366L70.6,387.3L66.2,409.5L66.8,432.3L72.8,455.5L73.3,458.3L67.3,435.1L66.7,412.2L71.1,390L80.1,368.6L93.4,348.1L110.4,328.7L130.9,310.4L154.4,293.2L180.6,277.3L209.2,262.6L239.8,249.2L272.2,237L306.2,226.1L341.5,216.4L377.9,208L415.2,200.8L453.2,194.8L491.9,190L531,186.4L570.5,184L610.1,182.8L649.7,182.7L689.3,183.9L728.7,186.2L767.8,189.7L806.3,194.4L844.3,200.3L881.5,207.4L917.8,215.7L952.9,225.3L986.7,236.1L1019,248.2L1049.5,261.5L1077.9,276L1104,291.8L1127.4,308.8L1147.8,326.9L1164.8,346.2L1178,366.5L1187.1,387.8L1191.6,409.8L1191.2,432.6L1185.3,455.8Z" fill="#00007a"/>
<path d="M1185.5,454.5L1191.4,431.3L1191.8,408.6L1187.3,386.6L1178.2,365.3L1164.9,345L1147.9,325.8L1127.5,307.7L1104.1,290.7L1078,274.9L1049.6,260.4L1019.1,247.1L986.8,235.1L953,224.3L917.8,214.7L881.6,206.4L844.4,199.3L806.4,193.4L767.8,188.7L728.7,185.2L689.3,182.9L649.7,181.8L610.1,181.8L570.4,183L531,185.4L491.9,189L453.2,193.8L415.1,199.8L377.8,207L341.4,215.4L306.1,225.1L272.1,236L239.7,248.2L209,261.6L180.5,276.2L154.3,292.2L130.7,309.3L110.3,327.6L93.2,347L79.9,367.4L70.9,388.8L66.4,411L67.1,433.8L73.1,457.1L73.8,461.5L67.8,438.2L67.2,415.2L71.6,393L80.6,371.5L93.8,351L110.9,331.5L131.3,313.1L154.8,296L181,280L209.5,265.3L240.1,251.8L272.5,239.6L306.4,228.6L341.7,218.9L378,210.5L415.3,203.2L453.4,197.2L492,192.4L531.1,188.8L570.5,186.4L610.1,185.2L649.7,185.1L689.3,186.3L728.6,188.6L767.7,192.1L806.2,196.8L844.2,202.8L881.3,209.9L917.6,218.2L952.7,227.8L986.5,238.7L1018.7,250.8L1049.2,264.1L1077.6,278.7L1103.6,294.5L1127,311.5L1147.3,329.7L1164.3,349.1L1177.6,369.4L1186.6,390.7L1191.1,412.9L1190.6,435.7L1184.8,458.9Z" fill="#0000d4"/>
<path d="M1185,457.7L1190.9,434.4L1191.3,411.7L1186.8,389.6L1177.7,368.3L1164.5,347.9L1147.5,328.6L1127.1,310.4L1103.7,293.4L1077.7,277.6L1049.3,263L1018.8,249.7L986.6,237.6L952.8,226.8L917.7,217.2L881.4,208.9L844.2,201.8L806.3,195.9L767.7,191.2L728.7,187.6L689.3,185.3L649.7,184.2L610.1,184.2L570.5,185.4L531.1,187.9L492,191.5L453.3,196.3L415.3,202.3L378,209.5L341.6,217.9L306.3,227.6L272.4,238.6L240,250.8L209.4,264.2L180.8,278.9L154.6,294.9L131.2,312L110.7,330.4L93.7,349.8L80.4,370.3L71.4,391.8L67,414L67.6,436.9L73.6,460.2L74.4,464.6L68.3,441.2L67.7,418.3L72.1,396L81.1,374.4L94.3,353.9L111.3,334.3L131.7,315.9L155.2,298.7L181.3,282.7L209.8,267.9L240.4,254.4L272.8,242.2L306.7,231.2L341.9,221.4L378.2,213L415.5,205.7L453.5,199.7L492.1,194.9L531.2,191.2L570.5,188.8L610.1,187.6L649.7,187.5L689.2,188.7L728.6,191L767.6,194.6L806.1,199.3L844,205.2L881.2,212.4L917.4,220.7L952.5,230.4L986.2,241.2L1018.4,253.3L1048.9,266.7L1077.2,281.3L1103.2,297.2L1126.6,314.3L1146.9,332.5L1163.9,351.9L1177.1,372.3L1186.1,393.7L1190.6,415.9L1190.1,438.7L1184.3,462Z" fill="#0000c6"/>
<path d="M1184.5,460.8L1190.3,437.5L1190.8,414.7L1186.3,392.5L1177.3,371.2L1164.1,350.8L1147.1,331.4L1126.7,313.2L1103.4,296.1L1077.4,280.3L1049,265.7L1018.5,252.3L986.3,240.2L952.5,229.3L917.5,219.7L881.2,211.4L844.1,204.2L806.2,198.3L767.6,193.6L728.6,190.1L689.3,187.7L649.7,186.6L610.1,186.6L570.5,187.9L531.1,190.3L492.1,193.9L453.4,198.7L415.4,204.7L378.1,212L341.8,220.4L306.6,230.2L272.6,241.1L240.3,253.4L209.7,266.9L181.2,281.6L155,297.6L131.6,314.8L111.1,333.2L94.1,352.7L80.9,373.3L71.9,394.8L67.5,417.1L68.1,440L74.2,463.4L74.8,467.3L68.8,443.8L68.1,420.8L72.5,398.4L81.5,376.9L94.7,356.2L111.7,336.7L132.1,318.2L155.5,300.9L181.6,284.9L210.1,270.1L240.6,256.6L273,244.3L306.9,233.3L342.1,223.5L378.4,215L415.6,207.7L453.6,201.7L492.2,196.9L531.2,193.2L570.6,190.8L610.1,189.6L649.7,189.5L689.2,190.7L728.5,193L767.5,196.6L806,201.3L843.9,207.3L881,214.4L917.2,222.8L952.3,232.5L986,243.3L1018.2,255.5L1048.6,268.9L1076.9,283.6L1102.9,299.5L1126.3,316.6L1146.6,334.9L1163.5,354.3L1176.7,374.7L1185.7,396.2L1190.2,418.4L1189.7,441.3L1183.9,464.6Z" fill="#0000b8"/>
<path d="M1184.1,463.4L1189.9,440.1L1190.4,417.2L1185.9,395L1176.9,373.6L1163.7,353.1L1146.7,333.7L1126.4,315.5L1103.1,298.4L1077.1,282.5L1048.7,267.8L1018.3,254.5L986.1,242.3L952.4,231.5L917.3,221.8L881.1,213.4L844,206.3L806.1,200.3L767.5,195.6L728.6,192.1L689.2,189.7L649.7,188.6L610.1,188.6L570.6,189.9L531.2,192.3L492.2,195.9L453.6,200.7L415.5,206.8L378.3,214L342,222.5L306.8,232.3L272.9,243.3L240.5,255.5L210,269.1L181.5,283.8L155.3,299.9L131.9,317.1L111.5,335.5L94.5,355.1L81.3,375.7L72.3,397.2L67.9,419.6L68.6,442.6L74.6,466L75.1,468.8L69,445.3L68.4,422.3L72.7,399.9L81.7,378.3L94.9,357.7L111.9,338.1L132.3,319.6L155.7,302.3L181.8,286.2L210.3,271.4L240.8,257.9L273.1,245.6L307,234.5L342.2,224.8L378.5,216.3L415.7,209L453.7,202.9L492.2,198.1L531.3,194.5L570.6,192L610.1,190.8L649.7,190.7L689.2,191.9L728.5,194.2L767.5,197.8L806,202.5L843.8,208.5L880.9,215.7L917.1,224.1L952.2,233.7L985.9,244.6L1018.1,256.8L1048.4,270.2L1076.8,284.9L1102.8,300.8L1126.1,317.9L1146.4,336.3L1163.3,355.7L1176.5,376.2L1185.5,397.6L1190,419.9L1189.5,442.8L1183.6,466.2Z" fill="#00007a"/>
<path d="M1183.8,465L1189.7,441.6L1190.2,418.7L1185.7,396.5L1176.7,375L1163.5,354.6L1146.5,335.1L1126.2,316.8L1102.9,299.7L1076.9,283.8L1048.6,269.2L1018.2,255.8L986,243.6L952.3,232.7L917.2,223.1L881,214.7L843.9,207.5L806,201.5L767.5,196.8L728.5,193.3L689.2,190.9L649.7,189.8L610.1,189.8L570.6,191.1L531.2,193.5L492.2,197.1L453.6,201.9L415.6,208L378.4,215.3L342.1,223.8L306.9,233.5L273,244.5L240.7,256.8L210.1,270.4L181.6,285.2L155.5,301.2L132.1,318.5L111.7,337L94.7,356.5L81.5,377.2L72.5,398.7L68.2,421.1L68.8,444.1L74.9,467.6L75.6,471.9L69.6,448.4L68.9,425.3L73.2,402.9L82.2,381.2L95.4,360.5L112.3,340.9L132.7,322.4L156.1,305L182.1,288.9L210.6,274L241.1,260.4L273.4,248.1L307.2,237.1L342.4,227.3L378.6,218.7L415.8,211.4L453.8,205.3L492.3,200.5L531.3,196.9L570.7,194.4L610.2,193.2L649.7,193.1L689.2,194.3L728.4,196.6L767.4,200.2L805.8,204.9L843.7,210.9L880.8,218.1L916.9,226.6L951.9,236.2L985.6,247.2L1017.8,259.4L1048.1,272.8L1076.4,287.5L1102.4,303.5L1125.7,320.7L1146,339.1L1162.9,358.5L1176,379.1L1185,400.6L1189.5,422.9L1189,445.9L1183.1,469.3Z" fill="#0000d4"/>
<path d="M1183.3,468.1L1189.2,444.7L1189.7,421.7L1185.2,399.4L1176.2,377.9L1163,357.4L1146.1,337.9L1125.8,319.6L1102.5,302.4L1076.6,286.5L1048.3,271.8L1017.9,258.3L985.7,246.2L952,235.2L917,225.6L880.8,217.1L843.8,209.9L805.9,204L767.4,199.2L728.5,195.7L689.2,193.3L649.7,192.2L610.1,192.2L570.6,193.5L531.3,195.9L492.3,199.5L453.7,204.4L415.8,210.4L378.6,217.7L342.3,226.3L307.1,236.1L273.3,247.1L241,259.4L210.4,273L182,287.8L155.9,303.9L132.5,321.3L112.1,339.8L95.2,359.4L82,380.1L73,401.7L68.7,424.1L69.3,447.2L75.4,470.7L76.2,475.1L70.1,451.5L69.4,428.3L73.7,405.8L82.7,384.1L95.8,363.4L112.7,343.7L133.1,325.1L156.4,307.7L182.5,291.6L210.9,276.7L241.4,263L273.6,250.7L307.5,239.6L342.6,229.8L378.8,221.2L416,213.9L453.9,207.8L492.4,202.9L531.4,199.3L570.7,196.8L610.2,195.6L649.7,195.5L689.1,196.7L728.4,199L767.3,202.6L805.7,207.4L843.6,213.4L880.6,220.6L916.7,229L951.7,238.7L985.4,249.7L1017.5,261.9L1047.8,275.4L1076.1,290.2L1102,306.2L1125.3,323.4L1145.5,341.8L1162.4,361.4L1175.6,382L1184.5,403.5L1189,425.9L1188.4,448.9L1182.6,472.4Z" fill="#0000c6"/>
<path d="M1182.8,471.2L1188.7,447.7L1189.2,424.7L1184.7,402.4L1175.7,380.8L1162.6,360.2L1145.7,340.7L1125.4,322.3L1102.2,305.1L1076.2,289.1L1048,274.4L1017.6,260.9L985.5,248.7L951.8,237.7L916.8,228L880.7,219.6L843.6,212.4L805.8,206.4L767.3,201.6L728.4,198.1L689.1,195.7L649.7,194.6L610.2,194.6L570.7,195.9L531.4,198.3L492.4,201.9L453.9,206.8L415.9,212.9L378.8,220.2L342.5,228.8L307.4,238.6L273.5,249.7L241.3,262L210.8,275.6L182.3,290.5L156.3,306.6L132.9,324L112.6,342.6L95.6,362.2L82.5,383L73.5,404.6L69.2,427.1L69.9,450.3L75.9,473.8L76.6,477.7L70.5,454L69.8,430.8L74.2,408.3L83.1,386.5L96.2,365.8L113.1,346L133.4,327.4L156.8,310L182.8,293.8L211.2,278.8L241.6,265.2L273.9,252.8L307.6,241.7L342.8,231.8L379,223.2L416.1,215.9L454,209.8L492.5,204.9L531.5,201.3L570.7,198.8L610.2,197.6L649.7,197.5L689.1,198.7L728.3,201L767.2,204.6L805.6,209.4L843.4,215.4L880.5,222.6L916.6,231.1L951.5,240.8L985.2,251.8L1017.3,264.1L1047.6,277.6L1075.8,292.4L1101.7,308.4L1125,325.7L1145.2,344.2L1162.1,363.7L1175.2,384.4L1184.1,406L1188.6,428.4L1188,451.5L1182.2,475Z" fill="#0000b8"/>
<path d="M1182.4,473.8L1188.2,450.3L1188.8,427.2L1184.3,404.8L1175.4,383.2L1162.2,362.6L1145.4,343L1125.1,324.6L1101.9,307.4L1076,291.3L1047.7,276.6L1017.4,263.1L985.3,250.8L951.6,239.8L916.6,230.1L880.5,221.6L843.5,214.4L805.7,208.4L767.3,203.6L728.4,200.1L689.1,197.7L649.7,196.6L610.2,196.6L570.7,197.9L531.4,200.3L492.5,204L454,208.8L416.1,214.9L378.9,222.3L342.7,230.8L307.6,240.7L273.8,251.8L241.5,264.2L211,277.8L182.6,292.7L156.6,308.9L133.3,326.3L112.9,344.9L96,364.6L82.9,385.4L74,407.1L69.6,429.6L70.3,452.8L76.4,476.4L76.9,479.2L70.8,455.6L70.1,432.3L74.4,409.8L83.3,388L96.4,367.2L113.3,347.4L133.6,328.8L156.9,311.3L183,295.1L211.3,280.2L241.8,266.5L274,254.1L307.8,242.9L342.9,233.1L379.1,224.5L416.2,217.1L454.1,211L492.6,206.1L531.5,202.5L570.8,200L610.2,198.8L649.7,198.7L689.1,199.9L728.3,202.2L767.2,205.8L805.6,210.6L843.4,216.6L880.4,223.9L916.5,232.3L951.4,242.1L985,253.1L1017.1,265.4L1047.4,278.9L1075.7,293.7L1101.6,309.8L1124.8,327.1L1145,345.6L1161.9,365.2L1175,385.8L1183.9,407.4L1188.3,429.9L1187.8,453L1181.9,476.6Z" fill="#00007a"/>
<path d="M1182.1,475.3L1188,451.8L1188.5,428.7L1184.1,406.3L1175.1,384.7L1162,364L1145.2,344.4L1124.9,326L1101.7,308.7L1075.8,292.7L1047.5,277.9L1017.2,264.3L985.1,252.1L951.5,241.1L916.5,231.4L880.5,222.9L843.4,215.6L805.6,209.6L767.2,204.8L728.3,201.3L689.1,198.9L649.7,197.8L610.2,197.8L570.7,199.1L531.5,201.5L492.5,205.2L454,210L416.1,216.1L379,223.5L342.8,232.1L307.7,241.9L273.9,253L241.6,265.4L211.2,279.1L182.8,294L156.8,310.2L133.5,327.7L113.1,346.3L96.2,366L83.1,386.8L74.2,408.6L69.9,431.1L70.6,454.3L76.7,478L77.4,482.3L71.3,458.6L70.6,435.3L74.9,412.7L83.8,390.9L96.9,370L113.7,350.2L134,331.5L157.3,314L183.3,297.8L211.6,282.8L242.1,269L274.3,256.6L308,245.4L343.1,235.6L379.2,226.9L416.4,219.6L454.2,213.4L492.7,208.5L531.6,204.9L570.8,202.4L610.2,201.1L649.7,201.1L689.1,202.3L728.2,204.6L767.1,208.2L805.5,213L843.2,219L880.2,226.3L916.3,234.8L951.2,244.6L984.8,255.6L1016.9,267.9L1047.1,281.5L1075.3,296.4L1101.2,312.5L1124.4,329.8L1144.6,348.3L1161.4,368L1174.5,388.7L1183.4,410.4L1187.8,432.9L1187.3,456L1181.4,479.7Z" fill="#0000d4"/>
<path d="M1181.6,478.4L1187.5,454.8L1188,431.7L1183.6,409.2L1174.7,387.6L1161.6,366.9L1144.8,347.2L1124.5,328.7L1101.3,311.4L1075.5,295.3L1047.2,280.5L1017,266.9L984.9,254.6L951.3,243.6L916.3,233.8L880.3,225.3L843.3,218.1L805.5,212L767.1,207.3L728.3,203.7L689.1,201.3L649.7,200.1L610.2,200.2L570.8,201.4L531.6,203.9L492.6,207.6L454.2,212.5L416.3,218.6L379.2,225.9L343,234.6L307.9,244.4L274.2,255.6L241.9,268L211.5,281.7L183.2,296.7L157.2,312.9L133.9,330.4L113.6,349.1L96.7,368.9L83.6,389.7L74.7,411.5L70.4,434.1L71.1,457.4L77.2,481.1L77.9,485.4L71.8,461.7L71.1,438.3L75.4,415.7L84.3,393.8L97.3,372.9L114.2,353L134.4,334.2L157.7,316.7L183.7,300.4L212,285.4L242.3,271.6L274.5,259.1L308.2,248L343.3,238L379.4,229.4L416.5,222L454.3,215.8L492.8,210.9L531.7,207.2L570.9,204.8L610.2,203.5L649.7,203.5L689,204.6L728.2,207L767,210.6L805.4,215.4L843.1,221.5L880.1,228.8L916.1,237.3L951,247.1L984.5,258.2L1016.6,270.5L1046.8,284.1L1075,299L1100.8,315.2L1124,332.5L1144.2,351.1L1161,370.8L1174,391.6L1183,413.3L1187.3,435.9L1186.8,459.1L1180.9,482.7Z" fill="#0000c6"/>
<path d="M1181.1,481.5L1187,457.9L1187.5,434.7L1183.1,412.1L1174.2,390.4L1161.2,369.7L1144.3,350L1124.2,331.4L1101,314.1L1075.1,297.9L1046.9,283.1L1016.7,269.5L984.6,257.1L951.1,246.1L916.2,236.3L880.1,227.8L843.1,220.5L805.4,214.5L767,209.7L728.2,206.1L689,203.7L649.7,202.5L610.2,202.6L570.8,203.8L531.6,206.3L492.7,210L454.3,214.9L416.4,221L379.4,228.4L343.2,237L308.1,246.9L274.4,258.1L242.2,270.6L211.8,284.3L183.5,299.4L157.5,315.6L134.3,333.2L114,351.9L97.1,371.7L84.1,392.6L75.2,414.5L70.9,437.1L71.6,460.5L77.7,484.2L78.4,488L72.3,464.2L71.5,440.8L75.8,418.1L84.7,396.2L97.7,375.2L114.5,355.3L134.8,336.5L158,319L183.9,302.6L212.2,287.5L242.6,273.8L274.7,261.3L308.4,250L343.4,240.1L379.6,231.4L416.6,224L454.4,217.9L492.9,212.9L531.7,209.2L570.9,206.8L610.2,205.5L649.7,205.5L689,206.6L728.1,209L766.9,212.6L805.3,217.4L843,223.5L879.9,230.8L915.9,239.4L950.8,249.2L984.3,260.3L1016.3,272.6L1046.6,286.3L1074.7,301.2L1100.5,317.4L1123.7,334.8L1143.8,353.4L1160.6,373.2L1173.7,394L1182.6,415.7L1186.9,438.3L1186.3,461.6L1180.5,485.3Z" fill="#0000b8"/>
<path d="M1180.7,484.1L1186.5,460.4L1187.1,437.2L1182.8,414.6L1173.8,392.8L1160.8,372L1144,352.3L1123.8,333.7L1100.7,316.3L1074.9,300.1L1046.7,285.2L1016.5,271.6L984.4,259.3L950.9,248.2L916,238.4L880,229.8L843,222.5L805.3,216.5L767,211.7L728.2,208.1L689,205.7L649.7,204.5L610.2,204.6L570.9,205.8L531.7,208.3L492.8,212L454.4,216.9L416.6,223L379.5,230.4L343.4,239.1L308.3,249L274.6,260.2L242.5,272.7L212.1,286.5L183.8,301.6L157.9,317.9L134.6,335.4L114.4,354.2L97.5,374.1L84.5,395L75.6,416.9L71.3,439.6L72.1,463L78.2,486.8L78.6,489.6L72.5,465.7L71.8,442.3L76.1,419.6L84.9,397.6L97.9,376.6L114.7,356.7L135,337.9L158.2,320.3L184.1,303.9L212.4,288.8L242.7,275L274.9,262.5L308.6,251.3L343.6,241.3L379.7,232.7L416.7,225.2L454.5,219.1L492.9,214.1L531.8,210.4L570.9,208L610.3,206.7L649.7,206.7L689,207.8L728.1,210.2L766.9,213.8L805.2,218.6L842.9,224.7L879.8,232L915.8,240.6L950.7,250.4L984.2,261.5L1016.2,273.9L1046.4,287.6L1074.6,302.5L1100.4,318.7L1123.5,336.2L1143.6,354.8L1160.4,374.6L1173.4,395.4L1182.3,417.2L1186.7,439.8L1186.1,463.1L1180.2,486.9Z" fill="#00007a"/>
<path d="M1180.4,485.6L1186.3,461.9L1186.9,438.6L1182.5,416L1173.6,394.3L1160.6,373.4L1143.8,353.7L1123.6,335.1L1100.5,317.6L1074.7,301.5L1046.5,286.5L1016.3,272.9L984.3,260.5L950.8,249.4L915.9,239.6L879.9,231L843,223.7L805.2,217.7L766.9,212.9L728.1,209.3L689,206.9L649.7,205.7L610.3,205.7L570.9,207L531.7,209.5L492.9,213.2L454.5,218.1L416.6,224.3L379.6,231.7L343.5,240.3L308.5,250.3L274.8,261.5L242.6,274L212.3,287.8L184,302.9L158,319.2L134.8,336.8L114.6,355.6L97.8,375.5L84.7,396.5L75.9,418.4L71.6,441.1L72.3,464.5L78.4,488.3L79.2,492.7L73.1,468.8L72.3,445.3L76.5,422.5L85.4,400.5L98.4,379.4L115.2,359.5L135.4,340.6L158.6,323L184.5,306.6L212.7,291.4L243,277.6L275.1,265.1L308.8,253.8L343.8,243.8L379.8,235.1L416.9,227.7L454.6,221.5L493,216.5L531.8,212.8L571,210.3L610.3,209.1L649.6,209L688.9,210.2L728,212.6L766.8,216.2L805.1,221L842.8,227.1L879.7,234.5L915.6,243.1L950.5,252.9L984,264L1015.9,276.5L1046.1,290.2L1074.2,305.1L1100,321.4L1123.1,338.9L1143.2,357.6L1160,377.4L1173,398.3L1181.9,420.1L1186.2,442.8L1185.6,466.1L1179.7,489.9Z" fill="#0000d4"/>
<path d="M1179.9,488.7L1185.8,464.9L1186.4,441.6L1182,419L1173.2,397.1L1160.1,376.3L1143.4,356.5L1123.3,337.8L1100.1,320.3L1074.4,304.1L1046.2,289.1L1016,275.4L984.1,263L950.5,251.9L915.7,242.1L879.7,233.5L842.8,226.2L805.1,220.1L766.8,215.2L728.1,211.6L689,209.2L649.7,208.1L610.3,208.1L570.9,209.4L531.8,211.9L493,215.6L454.6,220.5L416.8,226.7L379.8,234.1L343.7,242.8L308.7,252.8L275,264L242.9,276.6L212.6,290.4L184.3,305.5L158.4,321.9L135.2,339.5L115,358.4L98.2,378.3L85.2,399.3L76.3,421.3L72.1,444.1L72.8,467.5L79,491.4L79.7,495.7L73.6,471.8L72.8,448.3L77,425.4L85.8,403.4L98.8,382.3L115.6,362.2L135.8,343.3L158.9,325.7L184.8,309.2L213,294L243.3,280.2L275.4,267.6L309,256.3L344,246.3L380,237.5L417,230.1L454.8,223.9L493.1,218.9L531.9,215.2L571,212.7L610.3,211.4L649.6,211.4L688.9,212.6L728,215L766.7,218.6L805,223.5L842.6,229.6L879.5,236.9L915.4,245.5L950.2,255.4L983.7,266.6L1015.7,279L1045.8,292.8L1073.9,307.8L1099.6,324.1L1122.7,341.6L1142.8,360.3L1159.5,380.2L1172.5,401.1L1181.4,423L1185.7,445.8L1185.1,469.2L1179.2,493Z" fill="#0000c6"/>
<path d="M1179.4,491.8L1185.3,467.9L1185.9,444.6L1181.6,421.9L1172.7,400L1159.7,379.1L1143,359.2L1122.9,340.5L1099.8,323L1074,306.7L1045.9,291.7L1015.8,278L983.8,265.6L950.3,254.4L915.5,244.5L879.6,235.9L842.7,228.6L805,222.5L766.7,217.6L728,214L688.9,211.6L649.6,210.4L610.3,210.5L571,211.8L531.9,214.2L493.1,218L454.7,222.9L417,229.1L380,236.6L343.9,245.3L308.9,255.3L275.3,266.6L243.2,279.1L212.9,293L184.7,308.2L158.8,324.6L135.6,342.3L115.4,361.1L98.7,381.1L85.7,402.2L76.8,424.2L72.6,447.1L73.4,470.6L79.5,494.5L80.1,498.3L74,474.3L73.2,450.8L77.4,427.8L86.2,405.8L99.2,384.6L116,364.5L136.1,345.6L159.3,327.9L185.1,311.4L213.3,296.2L243.6,282.3L275.6,269.7L309.2,258.4L344.1,248.3L380.2,239.6L417.1,232.1L454.9,225.9L493.2,220.9L532,217.2L571,214.7L610.3,213.4L649.6,213.4L688.9,214.5L727.9,216.9L766.6,220.6L804.9,225.5L842.5,231.6L879.4,238.9L915.3,247.6L950.1,257.5L983.5,268.7L1015.4,281.1L1045.5,294.9L1073.6,310L1099.3,326.3L1122.4,343.8L1142.5,362.6L1159.2,382.5L1172.1,403.5L1181,425.4L1185.3,448.2L1184.7,471.7L1178.8,495.6Z" fill="#0000b8"/>
<path d="M1179,494.3L1184.9,470.5L1185.5,447L1181.2,424.3L1172.3,402.4L1159.4,381.4L1142.6,361.5L1122.6,342.8L1099.5,325.2L1073.7,308.9L1045.7,293.9L1015.5,280.1L983.6,267.7L950.1,256.5L915.3,246.6L879.4,238L842.6,230.6L804.9,224.5L766.7,219.6L728,216L688.9,213.6L649.6,212.4L610.3,212.5L571,213.7L531.9,216.2L493.1,220L454.8,224.9L417.1,231.1L380.1,238.6L344.1,247.3L309.1,257.4L275.5,268.7L243.4,281.3L213.2,295.2L185,310.4L159.1,326.8L135.9,344.5L115.8,363.4L99,383.5L86.1,404.6L77.3,426.7L73,449.6L73.8,473.1L79.9,497.1L80.4,499.8L74.3,475.8L73.5,452.2L77.7,429.3L86.5,407.2L99.4,386L116.2,365.9L136.3,347L159.4,329.2L185.3,312.7L213.5,297.5L243.7,283.6L275.7,270.9L309.3,259.6L344.2,249.6L380.3,240.8L417.2,233.3L454.9,227.1L493.2,222.1L532,218.4L571.1,215.9L610.3,214.6L649.6,214.6L688.9,215.7L727.9,218.1L766.6,221.8L804.8,226.6L842.4,232.8L879.3,240.2L915.2,248.8L949.9,258.7L983.4,269.9L1015.3,282.4L1045.4,296.2L1073.5,311.3L1099.2,327.6L1122.2,345.2L1142.3,364L1159,383.9L1171.9,404.9L1180.8,426.9L1185.1,449.7L1184.4,473.2L1178.5,497.1Z" fill="#00007a"/>
<path d="M1178.7,495.9L1184.6,472L1185.2,448.5L1180.9,425.7L1172.1,403.8L1159.1,382.8L1142.4,362.9L1122.4,344.1L1099.3,326.5L1073.6,310.2L1045.5,295.2L1015.4,281.4L983.5,268.9L950,257.7L915.2,247.8L879.3,239.2L842.5,231.8L804.9,225.7L766.6,220.8L727.9,217.2L688.9,214.8L649.6,213.6L610.3,213.7L571,214.9L532,217.4L493.2,221.2L454.9,226.1L417.2,232.3L380.2,239.8L344.2,248.6L309.2,258.6L275.6,269.9L243.6,282.5L213.3,296.5L185.1,311.7L159.3,328.1L136.1,345.9L116,364.8L99.3,384.9L86.3,406L77.5,428.1L73.3,451.1L74.1,474.6L80.2,498.6L80.9,502.9L74.8,478.8L74,455.2L78.2,432.2L86.9,410L99.9,388.8L116.6,368.7L136.7,349.7L159.8,331.9L185.6,315.3L213.8,300.1L244,286.1L276,273.5L309.6,262.1L344.4,252L380.4,243.2L417.4,235.7L455,229.5L493.3,224.5L532.1,220.7L571.1,218.2L610.3,217L649.6,216.9L688.8,218.1L727.8,220.5L766.5,224.2L804.7,229L842.3,235.2L879.1,242.6L915,251.2L949.7,261.2L983.1,272.4L1015,285L1045.1,298.8L1073.1,313.9L1098.8,330.3L1121.8,347.9L1141.9,366.7L1158.5,386.7L1171.5,407.8L1180.3,429.8L1184.6,452.7L1183.9,476.2L1178,500.1Z" fill="#0000d4"/>
<path d="M1178.2,498.9L1184.1,475L1184.8,451.5L1180.5,428.6L1171.7,406.6L1158.7,385.6L1142,365.6L1122,346.8L1098.9,329.2L1073.3,312.8L1045.2,297.7L1015.1,283.9L983.2,271.4L949.8,260.2L915.1,250.3L879.2,241.6L842.4,234.2L804.8,228.1L766.5,223.2L727.9,219.6L688.8,217.1L649.6,216L610.3,216L571.1,217.3L532,219.8L493.3,223.5L455,228.5L417.3,234.8L380.4,242.3L344.4,251L309.5,261.1L275.9,272.5L243.9,285.1L213.6,299.1L185.5,314.3L159.7,330.8L136.5,348.6L116.4,367.6L99.7,387.7L86.8,408.9L78,431.1L73.8,454L74.6,477.6L80.7,501.7L81.4,506L75.3,481.9L74.5,458.2L78.7,435.1L87.4,412.9L100.3,391.6L117,371.4L137.1,352.4L160.2,334.5L186,318L214.1,302.7L244.3,288.7L276.3,276L309.8,264.6L344.7,254.5L380.6,245.7L417.5,238.1L455.2,231.9L493.4,226.9L532.1,223.1L571.2,220.6L610.4,219.3L649.6,219.3L688.8,220.5L727.8,222.9L766.4,226.5L804.6,231.4L842.2,237.6L878.9,245L914.8,253.7L949.5,263.7L982.9,274.9L1014.7,287.5L1044.8,301.3L1072.8,316.5L1098.5,332.9L1121.5,350.6L1141.5,369.5L1158.1,389.5L1171,410.6L1179.8,432.7L1184.1,455.6L1183.4,479.2L1177.5,503.2Z" fill="#0000c6"/>
<path d="M1177.7,502L1183.6,478L1184.3,454.4L1180,431.5L1171.2,409.5L1158.3,388.4L1141.6,368.4L1121.6,349.5L1098.6,331.9L1072.9,315.5L1044.9,300.3L1014.8,286.5L983,273.9L949.6,262.7L914.9,252.7L879,244L842.2,236.6L804.6,230.5L766.5,225.6L727.8,221.9L688.8,219.5L649.6,218.3L610.4,218.4L571.1,219.7L532.1,222.2L493.4,225.9L455.1,230.9L417.5,237.2L380.5,244.7L344.6,253.5L309.7,263.6L276.2,275L244.2,287.6L214,301.6L185.8,316.9L160,333.5L136.9,351.3L116.8,370.3L100.1,390.5L87.2,411.8L78.5,434L74.3,457L75.1,480.6L81.2,504.8L81.9,508.5L75.7,484.4L74.9,460.6L79.1,437.5L87.8,415.3L100.7,394L117.4,373.7L137.4,354.6L160.5,336.8L186.2,320.2L214.4,304.8L244.5,290.8L276.5,278.1L310,266.6L344.8,256.5L380.8,247.7L417.6,240.1L455.3,233.9L493.5,228.9L532.2,225.1L571.2,222.6L610.4,221.3L649.6,221.2L688.8,222.4L727.7,224.8L766.4,228.5L804.5,233.4L842,239.6L878.8,247L914.6,255.7L949.3,265.7L982.7,277L1014.5,289.6L1044.5,303.5L1072.5,318.7L1098.2,335.1L1121.1,352.8L1141.1,371.8L1157.7,391.8L1170.6,413L1179.4,435.1L1183.7,458L1183,481.7L1177.1,505.7Z" fill="#0000b8"/>
<path d="M1177.3,504.5L1183.2,480.5L1183.9,456.9L1179.6,433.9L1170.8,411.8L1157.9,390.7L1141.3,370.7L1121.3,351.8L1098.3,334.1L1072.7,317.6L1044.7,302.5L1014.6,288.6L982.8,276L949.4,264.7L914.7,254.8L878.9,246.1L842.1,238.6L804.6,232.5L766.4,227.6L727.8,223.9L688.8,221.5L649.6,220.3L610.4,220.3L571.2,221.6L532.2,224.1L493.5,227.9L455.2,232.9L417.6,239.2L380.7,246.7L344.7,255.5L309.9,265.7L276.4,277.1L244.4,289.8L214.2,303.8L186.1,319.1L160.3,335.7L137.3,353.6L117.2,372.6L100.5,392.8L87.6,414.1L78.9,436.4L74.7,459.4L75.5,483.2L81.7,507.3L82.1,510.1L76,485.9L75.2,462.1L79.3,439L88,416.7L100.9,395.4L117.6,375.1L137.6,356L160.7,338.1L186.4,321.5L214.5,306.1L244.7,292.1L276.6,279.3L310.1,267.9L344.9,257.7L380.9,248.9L417.7,241.4L455.3,235.1L493.6,230L532.2,226.3L571.2,223.7L610.4,222.5L649.6,222.4L688.8,223.6L727.7,226L766.3,229.7L804.5,234.6L842,240.8L878.7,248.2L914.5,257L949.2,267L982.6,278.3L1014.4,290.9L1044.4,304.8L1072.4,320L1098,336.5L1120.9,354.2L1140.9,373.1L1157.5,393.2L1170.4,414.4L1179.2,436.5L1183.4,459.5L1182.8,483.2L1176.8,507.3Z" fill="#00007a"/>
<path d="M1177,506L1183,482L1183.6,458.3L1179.4,435.4L1170.6,413.3L1157.7,392.1L1141.1,372L1121.1,353.1L1098.1,335.4L1072.5,318.9L1044.5,303.7L1014.5,289.9L982.7,277.3L949.3,266L914.6,256L878.8,247.3L842,239.8L804.5,233.7L766.3,228.8L727.7,225.1L688.8,222.7L649.6,221.5L610.4,221.5L571.2,222.8L532.2,225.3L493.5,229.1L455.3,234.1L417.7,240.4L380.8,247.9L344.8,256.8L310,266.9L276.5,278.3L244.6,291L214.4,305.1L186.3,320.4L160.5,337L137.5,354.9L117.4,374L100.7,394.2L87.9,415.6L79.1,437.8L75,460.9L75.8,484.7L81.9,508.8L82.7,513.1L76.5,488.9L75.7,465L79.8,441.9L88.5,419.5L101.4,398.2L118,377.8L138,358.7L161.1,340.7L186.8,324.1L214.8,308.7L245,294.6L276.9,281.8L310.3,270.4L345.1,260.2L381,251.3L417.9,243.8L455.5,237.5L493.7,232.4L532.3,228.6L571.3,226.1L610.4,224.8L649.6,224.8L688.7,226L727.6,228.4L766.2,232.1L804.3,237L841.8,243.2L878.6,250.7L914.3,259.4L949,269.4L982.3,280.8L1014.1,293.4L1044.1,307.3L1072,322.6L1097.6,339.1L1120.6,356.9L1140.5,375.9L1157.1,396L1170,417.2L1178.7,439.4L1183,462.4L1182.3,486.1L1176.3,510.3Z" fill="#0000d4"/>
<path d="M1176.5,509.1L1182.5,484.9L1183.1,461.3L1178.9,438.3L1170.1,416.1L1157.3,394.9L1140.7,374.8L1120.7,355.8L1097.8,338L1072.2,321.5L1044.2,306.3L1014.2,292.4L982.4,279.8L949.1,268.5L914.4,258.4L878.6,249.7L841.9,242.2L804.4,236.1L766.3,231.1L727.7,227.4L688.7,225L649.6,223.8L610.4,223.9L571.2,225.2L532.3,227.7L493.6,231.5L455.4,236.5L417.8,242.8L381,250.4L345.1,259.2L310.3,269.4L276.8,280.8L244.8,293.6L214.7,307.7L186.6,323L160.9,339.7L137.9,357.6L117.8,376.7L101.2,397L88.3,418.4L79.6,440.7L75.5,463.9L76.3,487.7L82.5,511.9L83.2,516.2L77,491.9L76.2,468L80.3,444.8L89,422.4L101.8,400.9L118.4,380.6L138.4,361.4L161.4,343.4L187.1,326.7L215.1,311.3L245.2,297.1L277.1,284.3L310.6,272.8L345.3,262.6L381.2,253.8L418,246.2L455.6,239.8L493.8,234.8L532.4,231L571.3,228.5L610.4,227.2L649.6,227.1L688.7,228.3L727.6,230.8L766.1,234.4L804.2,239.4L841.7,245.6L878.4,253.1L914.1,261.8L948.8,271.9L982.1,283.3L1013.8,295.9L1043.8,309.9L1071.7,325.2L1097.3,341.7L1120.2,359.6L1140.1,378.6L1156.7,398.8L1169.5,420.1L1178.3,442.3L1182.5,465.4L1181.8,489.1L1175.8,513.3Z" fill="#0000c6"/>
<path d="M1176,512.1L1182,487.9L1182.7,464.2L1178.4,441.1L1169.7,418.9L1156.8,397.7L1140.3,377.5L1120.3,358.5L1097.4,340.7L1071.8,324.1L1043.9,308.9L1013.9,294.9L982.2,282.3L948.9,270.9L914.2,260.9L878.5,252.1L841.8,244.6L804.3,238.4L766.2,233.5L727.6,229.8L688.7,227.4L649.6,226.2L610.4,226.2L571.3,227.5L532.3,230.1L493.7,233.8L455.5,238.9L418,245.2L381.1,252.8L345.3,261.7L310.5,271.8L277,283.3L245.1,296.1L215,310.2L187,325.6L161.3,342.3L138.3,360.3L118.3,379.5L101.6,399.8L88.8,421.2L80.1,443.6L76,466.8L76.8,490.7L83,514.9L83.6,518.7L77.4,494.3L76.6,470.4L80.7,447.2L89.4,424.7L102.2,403.3L118.8,382.9L138.7,363.6L161.7,345.6L187.4,328.9L215.4,313.4L245.5,299.2L277.4,286.4L310.8,274.9L345.5,264.7L381.4,255.8L418.1,248.2L455.7,241.8L493.8,236.8L532.4,233L571.3,230.4L610.4,229.1L649.6,229.1L688.7,230.3L727.5,232.7L766.1,236.4L804.1,241.4L841.6,247.6L878.3,255.1L914,263.9L948.6,274L981.9,285.3L1013.6,298L1043.5,312L1071.4,327.3L1097,343.9L1119.9,361.8L1139.8,380.9L1156.3,401.1L1169.1,422.4L1177.9,444.7L1182.1,467.8L1181.4,491.6L1175.4,515.9Z" fill="#0000b8"/>
<path d="M1175.6,514.6L1181.6,490.4L1182.3,466.6L1178,443.5L1169.3,421.3L1156.5,400L1139.9,379.8L1120,360.7L1097.1,342.9L1071.6,326.3L1043.7,311L1013.7,297L982,284.3L948.7,273L914.1,262.9L878.3,254.1L841.6,246.6L804.2,240.4L766.1,235.5L727.6,231.8L688.7,229.3L649.6,228.1L610.4,228.2L571.3,229.5L532.4,232L493.8,235.8L455.6,240.9L418.1,247.2L381.3,254.8L345.4,263.7L310.7,273.9L277.3,285.4L245.4,298.2L215.3,312.4L187.3,327.8L161.6,344.5L138.6,362.5L118.6,381.8L102,402.1L89.2,423.6L80.5,446L76.4,469.3L77.2,493.1L83.4,517.5L83.9,520.2L77.7,495.8L76.8,471.9L80.9,448.6L89.6,426.2L102.4,404.7L119,384.2L138.9,365L161.9,346.9L187.6,330.2L215.6,314.7L245.6,300.5L277.5,287.7L310.9,276.1L345.6,265.9L381.5,257L418.2,249.4L455.8,243L493.9,237.9L532.5,234.1L571.4,231.6L610.4,230.3L649.6,230.2L688.6,231.4L727.5,233.9L766,237.6L804.1,242.6L841.5,248.8L878.2,256.3L913.9,265.1L948.5,275.2L981.7,286.6L1013.5,299.3L1043.4,313.3L1071.3,328.6L1096.8,345.2L1119.7,363.1L1139.6,382.2L1156.1,402.5L1168.9,423.8L1177.6,446.1L1181.8,469.3L1181.1,493.1L1175.2,517.4Z" fill="#00007a"/>
<path d="M1175.4,516.2L1181.3,491.9L1182,468.1L1177.8,445L1169.1,422.7L1156.3,401.4L1139.7,381.1L1119.8,362.1L1096.9,344.2L1071.4,327.6L1043.5,312.3L1013.6,298.3L981.8,285.6L948.6,274.2L914,264.1L878.2,255.3L841.6,247.8L804.1,241.6L766.1,236.6L727.5,233L688.7,230.5L649.6,229.3L610.4,229.4L571.3,230.7L532.4,233.2L493.8,237L455.7,242.1L418.2,248.4L381.4,256L345.5,264.9L310.8,275.1L277.4,286.7L245.5,299.5L215.4,313.6L187.4,329.1L161.8,345.9L138.8,363.9L118.8,383.1L102.2,403.5L89.4,425L80.7,447.5L76.6,470.7L77.5,494.6L83.7,519L84.4,523.2L78.2,498.8L77.3,474.8L81.4,451.5L90.1,429L102.9,407.4L119.4,387L139.3,367.7L162.3,349.6L187.9,332.8L215.9,317.2L245.9,303L277.7,290.1L311.1,278.6L345.8,268.3L381.6,259.4L418.4,251.7L455.9,245.4L494,240.3L532.5,236.5L571.4,233.9L610.5,232.6L649.6,232.6L688.6,233.8L727.4,236.2L765.9,240L804,244.9L841.4,251.2L878,258.7L913.7,267.5L948.3,277.6L981.5,289.1L1013.2,301.8L1043.1,315.9L1070.9,331.2L1096.4,347.9L1119.3,365.8L1139.2,384.9L1155.7,405.2L1168.5,426.6L1177.2,449L1181.3,472.2L1180.6,496.1L1174.7,520.4Z" fill="#0000d4"/>
<path d="M1174.9,519.2L1180.8,494.9L1181.5,471L1177.3,447.8L1168.7,425.5L1155.9,404.1L1139.3,383.9L1119.5,364.7L1096.6,346.8L1071.1,330.2L1043.2,314.8L1013.3,300.8L981.6,288.1L948.3,276.7L913.8,266.5L878.1,257.7L841.4,250.2L804,244L766,239L727.5,235.3L688.6,232.9L649.6,231.7L610.5,231.7L571.4,233L532.5,235.6L493.9,239.4L455.8,244.4L418.3,250.8L381.6,258.4L345.7,267.4L311,277.6L277.6,289.1L245.8,302L215.8,316.2L187.8,331.7L162.1,348.5L139.2,366.6L119.2,385.9L102.7,406.3L89.9,427.8L81.2,450.3L77.1,473.7L78,497.6L84.2,522L84.9,526.3L78.7,501.8L77.8,477.8L81.9,454.4L90.5,431.8L103.3,410.2L119.8,389.7L139.7,370.3L162.7,352.2L188.2,335.3L216.2,319.8L246.2,305.6L278,292.6L311.4,281L346,270.8L381.8,261.8L418.5,254.1L456,247.8L494.1,242.7L532.6,238.8L571.5,236.3L610.5,235L649.6,234.9L688.6,236.1L727.4,238.6L765.9,242.3L803.9,247.3L841.2,253.6L877.8,261.1L913.5,269.9L948,280.1L981.3,291.6L1012.9,304.3L1042.8,318.4L1070.6,333.8L1096.1,350.5L1118.9,368.5L1138.8,387.7L1155.3,408L1168,429.4L1176.7,451.9L1180.9,475.1L1180.1,499L1174.2,523.4Z" fill="#0000c6"/>
<path d="M1174.4,522.2L1180.3,497.8L1181.1,473.9L1176.9,450.7L1168.2,428.3L1155.4,406.9L1138.9,386.6L1119.1,367.4L1096.2,349.5L1070.7,332.8L1042.9,317.4L1013,303.3L981.4,290.6L948.1,279.1L913.6,269L877.9,260.1L841.3,252.6L803.9,246.4L765.9,241.4L727.4,237.7L688.6,235.2L649.6,234L610.5,234L571.4,235.3L532.6,237.9L494,241.7L455.9,246.8L418.5,253.2L381.7,260.8L345.9,269.8L311.3,280.1L277.9,291.6L246.1,304.5L216.1,318.8L188.1,334.3L162.5,351.1L139.6,369.3L119.7,388.6L103.1,409.1L90.3,430.7L81.7,453.2L77.6,476.6L78.5,500.6L84.7,525.1L85.3,528.8L79.2,504.3L78.3,480.2L82.3,456.8L90.9,434.1L103.7,412.5L120.2,392L140.1,372.6L163,354.4L188.5,337.5L216.5,321.9L246.4,307.7L278.2,294.7L311.5,283.1L346.2,272.8L382,263.8L418.6,256.1L456.1,249.7L494.2,244.6L532.7,240.8L571.5,238.2L610.5,236.9L649.6,236.9L688.6,238.1L727.3,240.5L765.8,244.3L803.8,249.3L841.1,255.5L877.7,263.1L913.3,272L947.9,282.1L981.1,293.6L1012.7,306.4L1042.5,320.5L1070.3,336L1095.8,352.7L1118.6,370.7L1138.4,389.9L1154.9,410.3L1167.7,431.8L1176.3,454.2L1180.5,477.5L1179.7,501.5L1173.8,525.9Z" fill="#0000b8"/>
<path d="M1173.9,524.7L1179.9,500.3L1180.7,476.4L1176.5,453.1L1167.8,430.7L1155.1,409.2L1138.6,388.8L1118.8,369.6L1095.9,351.6L1070.5,334.9L1042.7,319.5L1012.8,305.4L981.1,292.6L948,281.2L913.4,271L877.8,262.1L841.2,254.6L803.8,248.3L765.8,243.3L727.4,239.6L688.6,237.1L649.6,235.9L610.5,236L571.5,237.3L532.6,239.9L494.1,243.7L456.1,248.8L418.6,255.2L381.9,262.8L346.1,271.8L311.5,282.1L278.1,293.7L246.3,306.6L216.3,320.9L188.4,336.5L162.8,353.3L139.9,371.5L120,390.9L103.5,411.4L90.7,433L82.1,455.6L78.1,479L78.9,503.1L85.1,527.6L85.4,529.1L79.2,504.6L78.3,480.5L82.4,457L91,434.4L103.7,412.8L120.2,392.2L140.1,372.8L163,354.7L188.6,337.8L216.5,322.2L246.5,307.9L278.2,295L311.6,283.3L346.2,273L382,264.1L418.7,256.4L456.1,250L494.2,244.9L532.7,241L571.5,238.5L610.5,237.2L649.6,237.1L688.5,238.3L727.3,240.8L765.8,244.5L803.8,249.5L841.1,255.8L877.7,263.4L913.3,272.2L947.8,282.4L981,293.9L1012.7,306.7L1042.5,320.8L1070.3,336.2L1095.8,353L1118.6,371L1138.4,390.2L1154.9,410.6L1167.6,432.1L1176.3,454.5L1180.4,477.8L1179.7,501.8L1173.7,526.2Z" fill="#00007a"/>
<path d="M1178.2,510.3L1180.7,486.9L1178.5,464L1172,441.9L1161.4,420.6L1147.1,400.3L1129.5,381L1108.9,362.9L1085.7,346L1060.1,330.2L1032.4,315.7L1002.8,302.5L971.7,290.4L939.1,279.6L905.3,270.1L870.6,261.8L835,254.7L798.6,248.8L761.7,244.1L724.4,240.6L686.8,238.2L649,237.1L611.1,237.1L573.3,238.4L535.6,240.8L498.2,244.4L461.3,249.2L424.8,255.2L389.1,262.4L354.2,270.9L320.3,280.6L287.7,291.5L256.4,303.7L226.7,317.1L198.8,331.7L173.1,347.6L149.8,364.7L129.1,383L111.5,402.4L97.2,422.9L86.6,444.3L80.1,466.6L78,489.6L80.8,513.1" stroke="#7c7cb4" stroke-width="3.4" fill="none"/>
<rect x="45" y="85" width="1201" height="863" fill="url(#dk)"/>
<path d="M1225.7,428.8L1230.3,409.2L1231.1,389.9L1228.4,371.1L1222.2,352.9L1213,335.2L1201,318.3L1186.3,302.1L1169.3,286.6L1150.1,272L1128.9,258.2L1106,245.2L1081.5,233.1L1055.6,221.8L1028.4,211.4L1000.2,201.8L970.9,193.1L940.8,185.2L909.9,178.1L878.4,171.8L846.4,166.3L813.8,161.7L780.9,157.8L747.6,154.7L714.1,152.4L680.5,150.9L646.7,150.2L612.9,150.2L579.1,151L545.4,152.6L511.9,154.9L478.6,158.1L445.6,162L412.9,166.8L380.8,172.3L349.1,178.7L318.1,185.8L287.9,193.8L258.5,202.7L230.1,212.3L202.8,222.9L176.7,234.3L152.1,246.5L129.1,259.6L107.8,273.5L88.5,288.3L71.4,303.8L56.7,320.2L44.6,337.3L35.4,355L29.3,373.4L26.6,392.3L27.6,411.7L32.4,431.4L68.9,425L63.7,406.6L62,388.5L63.8,370.7L68.9,353.4L76.9,336.7L87.7,320.6L101,305.1L116.7,290.3L134.5,276.2L154.2,263L175.7,250.5L198.7,238.8L223.2,227.8L248.9,217.7L275.8,208.4L303.6,199.9L332.3,192.2L361.7,185.3L391.9,179.2L422.5,173.8L453.7,169.2L485.2,165.4L517,162.4L549.1,160.1L581.3,158.6L613.7,157.8L646,157.8L678.3,158.5L710.5,160L742.6,162.2L774.3,165.2L805.8,168.9L836.8,173.4L867.4,178.7L897.4,184.8L926.8,191.6L955.4,199.2L983.1,207.6L1009.8,216.8L1035.4,226.8L1059.7,237.6L1082.7,249.2L1104,261.6L1123.7,274.8L1141.4,288.7L1157,303.4L1170.3,318.7L1181.1,334.8L1189.1,351.4L1194.2,368.6L1196.1,386.2L1194.6,404.3L1189.5,422.6Z" fill="#0000e2"/>
</g>
<path d="M61,395.8L62.5,407.6L65.6,419.4L70.2,431.3L76.4,443.2L84.2,455.1L93.8,467L105.1,478.8L118.1,490.5L132.9,502L149.4,513.3L167.7,524.3L187.8,534.9L209.5,545.2L233,555L258.1,564.3L284.7,573L312.8,581.1L342.4,588.6L373.2,595.4L405.1,601.4L438.1,606.6L472,611L506.6,614.5L541.8,617.2L577.5,618.9L613.3,619.7L649.3,619.6L685.1,618.6L720.7,616.6L755.8,613.8L790.3,610L824,605.5L856.9,600.1L888.7,593.9L919.3,586.9L948.6,579.3L976.5,571L1002.9,562.2L1027.7,552.8L1050.9,542.9L1072.5,532.5L1092.3,521.8L1110.4,510.8L1126.7,499.5L1141.2,488L1154.1,476.3L1165.2,464.5L1174.5,452.6L1182.2,440.7L1188.3,428.8L1192.8,417L1195.7,405.2L1197.2,393.5L1202,394.1L1200.6,405.9L1197.7,417.8L1193.3,429.7L1187.2,441.8L1179.5,453.8L1170.1,465.8L1159,477.7L1146.1,489.5L1131.5,501.2L1115,512.6L1096.8,523.8L1076.9,534.6L1055.2,545L1031.7,555.1L1006.7,564.6L980,573.6L951.9,581.9L922.3,589.7L891.4,596.7L859.3,603L826.1,608.4L792,613.1L757.1,616.9L721.6,619.7L685.7,621.7L649.5,622.8L613.1,622.9L576.9,622.1L540.9,620.3L505.3,617.6L470.3,614.1L436.1,609.6L402.7,604.3L370.4,598.2L339.3,591.4L309.5,583.8L281.1,575.6L254.3,566.7L228.9,557.3L205.3,547.4L183.3,537L163.1,526.2L144.7,515.1L128.1,503.7L113.2,492.1L100.1,480.3L88.8,468.3L79.2,456.3L71.3,444.3L65.1,432.2L60.6,420.2L57.6,408.3L56.1,396.4Z" fill="#0000e8"/>
<path d="M57.6,396.3L59.1,408L62.1,419.9L66.7,431.9L72.9,443.9L80.8,456L90.3,467.9L101.6,479.8L114.7,491.6L129.5,503.2L146.2,514.5L164.6,525.6L184.7,536.3L206.6,546.7L230.2,556.6L255.4,565.9L282.3,574.8L310.6,583L340.3,590.5L371.3,597.3L403.5,603.4L436.7,608.7L470.8,613.1L505.7,616.7L541.2,619.3L577.1,621.1L613.2,621.9L649.4,621.8L685.5,620.7L721.3,618.8L756.7,615.9L791.5,612.1L825.5,607.5L858.5,602.1L890.5,595.8L921.3,588.8L950.8,581.1L978.9,572.8L1005.5,563.8L1030.5,554.3L1053.8,544.4L1075.5,534L1095.4,523.2L1113.6,512L1130,500.7L1144.6,489.1L1157.5,477.3L1168.6,465.4L1178,453.4L1185.7,441.4L1191.7,429.5L1196.2,417.5L1199.1,405.7L1200.5,393.9L1206.9,394.7L1205.6,406.6L1202.7,418.6L1198.3,430.6L1192.2,442.8L1184.5,454.9L1175.1,467.1L1163.9,479.1L1151,491.1L1136.2,502.8L1119.7,514.4L1101.4,525.7L1081.3,536.6L1059.4,547.2L1035.8,557.4L1010.5,567L983.6,576.1L955.2,584.6L925.3,592.4L894.1,599.5L861.7,605.9L828.2,611.4L793.7,616.1L758.5,620L722.6,622.9L686.3,624.9L649.7,626L613,626.1L576.3,625.2L539.9,623.5L504,620.7L468.6,617.1L434,612.6L400.3,607.3L367.7,601.1L336.3,594.1L306.2,586.5L277.5,578.1L250.4,569.2L224.9,559.6L201,549.6L178.9,539.1L158.6,528.2L140,516.9L123.2,505.4L108.3,493.7L95.1,481.7L83.8,469.7L74.2,457.5L66.3,445.3L60.1,433.1L55.6,421L52.6,409L51.2,397Z" fill="#0000e0"/>
<path d="M52.7,396.8L54.1,408.7L57.1,420.8L61.7,432.9L67.9,445L75.7,457.1L85.3,469.2L96.7,481.3L109.8,493.2L124.7,504.9L141.5,516.4L160,527.6L180.3,538.4L202.4,548.9L226.1,558.9L251.6,568.4L278.7,577.3L307.2,585.6L337.2,593.3L368.5,600.2L401.1,606.3L434.6,611.7L469.1,616.2L504.4,619.8L540.2,622.5L576.5,624.2L613,625.1L649.6,625L686.1,623.9L722.3,621.9L758.1,619L793.2,615.2L827.6,610.5L861,605L893.3,598.6L924.4,591.6L954.2,583.8L982.5,575.3L1009.3,566.3L1034.5,556.6L1058.1,546.5L1079.9,536L1100,525.1L1118.3,513.8L1134.8,502.3L1149.5,490.6L1162.4,478.7L1173.5,466.7L1183,454.6L1190.7,442.5L1196.7,430.4L1201.2,418.3L1204,406.4L1205.4,394.5L1211.8,395.3L1210.5,407.2L1207.7,419.4L1203.3,431.6L1197.2,443.8L1189.5,456.1L1180.1,468.4L1168.9,480.5L1155.9,492.6L1141,504.5L1124.4,516.2L1106,527.6L1085.7,538.7L1063.7,549.4L1039.9,559.7L1014.4,569.4L987.2,578.6L958.6,587.2L928.4,595.2L896.9,602.4L864.1,608.8L830.3,614.4L795.5,619.2L759.9,623.1L723.6,626L686.9,628.1L649.9,629.2L612.8,629.3L575.7,628.4L539,626.6L502.6,623.9L466.9,620.2L431.9,615.6L397.9,610.2L364.9,604L333.2,596.9L302.8,589.2L273.9,580.7L246.5,571.6L220.8,562L196.7,551.8L174.4,541.2L153.9,530.1L135.3,518.8L118.4,507.1L103.4,495.2L90.2,483.2L78.8,471L69.1,458.7L61.2,446.4L55.1,434.1L50.5,421.8L47.6,409.7L46.3,397.6Z" fill="#0000d9"/>
<path d="M47.8,397.4L49.2,409.5L52.1,421.6L56.6,433.8L62.8,446.1L70.7,458.3L80.3,470.6L91.7,482.7L104.9,494.7L119.9,506.6L136.7,518.2L155.4,529.5L175.8,540.5L198.1,551.1L222.1,561.2L247.7,570.9L275,579.9L303.9,588.3L334.2,596.1L365.8,603.1L398.6,609.3L432.6,614.7L467.4,619.2L503,622.9L539.3,625.6L575.9,627.4L612.8,628.3L649.8,628.2L686.7,627.1L723.3,625.1L759.4,622.1L794.9,618.2L829.6,613.5L863.4,607.9L896,601.5L927.4,594.3L957.5,586.4L986.1,577.9L1013.2,568.7L1038.6,559L1062.3,548.7L1084.3,538.1L1104.5,527L1123,515.6L1139.6,504L1154.3,492.1L1167.3,480.1L1178.5,468L1188,455.7L1195.7,443.5L1201.7,431.3L1206.1,419.1L1209,407L1210.2,395.1L1216.6,395.8L1215.4,407.9L1212.6,420.2L1208.3,432.5L1202.3,444.9L1194.5,457.3L1185.1,469.6L1173.8,482L1160.8,494.2L1145.9,506.2L1129.1,518L1110.6,529.6L1090.2,540.8L1067.9,551.6L1044,562L1018.2,571.9L990.9,581.2L961.9,589.9L931.5,597.9L899.7,605.2L866.6,611.7L832.4,617.4L797.2,622.3L761.2,626.2L724.6,629.2L687.5,631.3L650.1,632.4L612.6,632.5L575.2,631.6L538,629.8L501.2,627L465.1,623.3L429.8,618.7L395.4,613.2L362.2,606.8L330.1,599.7L299.5,591.8L270.3,583.3L242.7,574.1L216.7,564.3L192.4,554L170,543.3L149.3,532.1L130.5,520.6L113.5,508.8L98.4,496.8L85.2,484.6L73.7,472.3L64.1,459.9L56.2,447.4L50,435L45.5,422.7L42.6,410.4L41.3,398.2Z" fill="#0000d6"/>
<path d="M42.9,398L44.2,410.2L47.1,422.4L51.6,434.7L57.8,447.1L65.6,459.5L75.3,471.9L86.7,484.2L100,496.3L115,508.3L132,520L150.8,531.5L171.4,542.6L193.8,553.3L218,563.6L243.9,573.3L271.4,582.5L300.5,591L331.1,598.9L363,605.9L396.2,612.3L430.5,617.7L465.7,622.3L501.7,626L538.3,628.8L575.3,630.6L612.6,631.5L650,631.4L687.3,630.3L724.3,628.2L760.8,625.2L796.7,621.3L831.7,616.5L865.8,610.8L898.8,604.3L930.5,597.1L960.9,589.1L989.7,580.4L1017,571.1L1042.7,561.3L1066.6,550.9L1088.8,540.1L1109.1,529L1127.7,517.4L1144.4,505.7L1159.2,493.7L1172.3,481.5L1183.5,469.2L1193,456.9L1200.7,444.5L1206.7,432.2L1211.1,419.9L1213.9,407.7L1215.1,395.7L1221.5,396.4L1220.3,408.6L1217.6,421L1213.3,433.4L1207.3,445.9L1199.6,458.4L1190.1,470.9L1178.8,483.4L1165.7,495.7L1150.7,507.9L1133.9,519.8L1115.2,531.5L1094.6,542.9L1072.2,553.8L1048.1,564.3L1022.1,574.3L994.5,583.8L965.3,592.6L934.6,600.7L902.4,608.1L869,614.7L834.5,620.5L799,625.4L762.6,629.4L725.6,632.4L688.1,634.5L650.3,635.6L612.4,635.7L574.6,634.9L537,633L499.9,630.2L463.4,626.4L427.7,621.7L393,616.2L359.4,609.7L327.1,602.5L296.1,594.6L266.6,585.9L238.8,576.6L212.6,566.7L188.1,556.3L165.5,545.4L144.7,534.1L125.7,522.5L108.7,510.5L93.5,498.4L80.1,486.1L68.7,473.6L59,461.1L51.1,448.5L45,436L40.5,423.5L37.7,411.1L36.4,398.8Z" fill="#0000d6"/>
<path d="M37.9,398.6L39.2,410.9L42.1,423.2L46.5,435.7L52.7,448.2L60.6,460.7L70.2,473.2L81.7,485.6L95,497.9L110.2,510L127.2,521.9L146.1,533.5L166.9,544.7L189.5,555.6L213.9,565.9L240,575.8L267.8,585.1L297.1,593.7L328,601.7L360.3,608.8L393.8,615.2L428.4,620.8L463.9,625.5L500.3,629.2L537.3,632L574.7,633.9L612.5,634.7L650.2,634.6L687.9,633.5L725.3,631.4L762.2,628.4L798.4,624.4L833.8,619.5L868.3,613.8L901.6,607.2L933.6,599.8L964.2,591.8L993.4,583L1020.9,573.6L1046.8,563.6L1070.9,553.1L1093.2,542.2L1113.7,530.9L1132.4,519.3L1149.2,507.3L1164.1,495.2L1177.2,482.9L1188.5,470.5L1198,458.1L1205.7,445.6L1211.7,433.1L1216.1,420.7L1218.8,408.4L1220,396.2L1226.4,397L1225.3,409.3L1222.6,421.7L1218.3,434.3L1212.3,446.9L1204.6,459.6L1195.1,472.2L1183.8,484.8L1170.6,497.3L1155.6,509.6L1138.6,521.6L1119.8,533.5L1099.1,544.9L1076.6,556L1052.2,566.7L1026,576.8L998.2,586.4L968.7,595.3L937.7,603.5L905.2,611L871.5,617.7L836.6,623.5L800.7,628.5L764,632.6L726.6,635.6L688.7,637.8L650.5,638.9L612.2,639L574,638.1L536,636.2L498.5,633.4L461.7,629.6L425.6,624.8L390.5,619.2L356.6,612.7L323.9,605.4L292.7,597.3L263,588.5L234.8,579.1L208.4,569.1L183.8,558.5L161,547.5L140,536.1L120.9,524.3L103.8,512.3L88.5,500L75.1,487.5L63.6,474.9L53.9,462.3L46,449.6L39.9,436.9L35.4,424.3L32.7,411.8L31.5,399.4Z" fill="#0000d6"/>
<path d="M33,399.2L34.2,411.6L37,424.1L41.5,436.6L47.6,449.3L55.5,461.9L65.2,474.5L76.7,487.1L90,499.5L105.3,511.7L122.4,523.7L141.5,535.5L162.4,546.8L185.1,557.8L209.7,568.3L236.1,578.3L264.1,587.7L293.7,596.4L324.9,604.5L357.5,611.8L391.3,618.2L426.3,623.9L462.2,628.6L498.9,632.4L536.3,635.2L574.2,637.1L612.3,638L650.4,637.9L688.5,636.8L726.3,634.6L763.6,631.6L800.2,627.5L836,622.6L870.7,616.8L904.4,610.1L936.7,602.6L967.6,594.4L997,585.6L1024.8,576L1050.9,565.9L1075.2,555.3L1097.7,544.3L1118.4,532.8L1137.2,521.1L1154.1,509L1169.1,496.8L1182.2,484.3L1193.5,471.8L1203,459.2L1210.8,446.6L1216.8,434L1221.1,421.5L1223.8,409.1L1224.9,396.8L1231.2,397.5L1230.2,410L1227.6,422.5L1223.3,435.2L1217.3,448L1209.6,460.7L1200.1,473.5L1188.7,486.2L1175.5,498.8L1160.4,511.2L1143.4,523.5L1124.4,535.4L1103.6,547L1080.9,558.2L1056.3,569L1029.9,579.3L1001.8,588.9L972.1,598L940.8,606.3L908,613.9L874,620.7L838.8,626.6L802.5,631.6L765.4,635.7L727.6,638.9L689.3,641L650.7,642.1L612,642.3L573.4,641.4L535,639.5L497.1,636.6L459.9,632.7L423.5,627.9L388.1,622.2L353.8,615.6L320.8,608.2L289.3,600L259.3,591.1L230.9,581.6L204.3,571.4L179.5,560.8L156.5,549.6L135.4,538.1L116.2,526.2L98.9,514L83.5,501.5L70.1,489L58.5,476.2L48.8,463.5L41,450.6L34.8,437.9L30.4,425.1L27.7,412.5L26.6,400ZM26.6,400L27.7,412.5L30.4,425.1L34.8,437.9L41,450.6L48.8,463.5L58.5,476.2L70.1,489L83.5,501.5L98.9,514L116.2,526.2L135.4,538.1L156.5,549.6L179.5,560.8L204.3,571.4L230.9,581.6L259.3,591.1L289.3,600L320.8,608.2L353.8,615.6L388.1,622.2L423.5,627.9L459.9,632.7L497.1,636.6L535,639.5L573.4,641.4L612,642.3L650.7,642.1L689.3,641L727.6,638.9L765.4,635.7L802.5,631.6L838.8,626.6L874,620.7L908,613.9L940.8,606.3L972.1,598L1001.8,588.9L1029.9,579.3L1056.3,569L1080.9,558.2L1103.6,547L1124.4,535.4L1143.4,523.5L1160.4,511.2L1175.5,498.8L1188.7,486.2L1200.1,473.5L1209.6,460.7L1217.3,448L1223.3,435.2L1227.6,422.5L1230.2,410L1231.2,397.5L1231.2,397.6L1230.2,410L1227.6,422.6L1223.3,435.2L1217.3,448L1209.6,460.8L1200.1,473.5L1188.7,486.2L1175.5,498.8L1160.4,511.3L1143.4,523.5L1124.4,535.4L1103.6,547L1080.9,558.3L1056.3,569L1029.9,579.3L1001.8,589L972.1,598L940.8,606.3L908,613.9L874,620.7L838.7,626.6L802.5,631.7L765.4,635.7L727.6,638.9L689.3,641L650.7,642.2L612,642.3L573.4,641.4L535,639.5L497.1,636.6L459.9,632.7L423.5,627.9L388.1,622.2L353.8,615.6L320.8,608.2L289.3,600L259.3,591.1L230.9,581.6L204.3,571.5L179.5,560.8L156.5,549.6L135.4,538.1L116.2,526.2L98.9,514L83.6,501.6L70.1,489L58.6,476.3L48.9,463.5L41,450.7L34.8,437.9L30.4,425.2L27.7,412.5L26.6,400Z" fill="#0000ba"/>
<path d="M28.1,399.8L29.2,412.3L32,424.9L36.4,437.6L42.5,450.3L50.4,463.1L60.1,475.8L71.6,488.5L85.1,501.1L100.4,513.4L117.6,525.6L136.8,537.5L157.8,549L180.8,560.1L205.6,570.7L232.1,580.8L260.4,590.3L290.3,599.2L321.8,607.3L354.7,614.7L388.8,621.3L424.1,626.9L460.4,631.7L497.6,635.6L535.3,638.5L573.6,640.4L612.1,641.3L650.7,641.1L689.1,640L727.3,637.9L765,634.8L802,630.7L838.1,625.7L873.2,619.8L907.2,613L939.8,605.5L971,597.1L1000.7,588.1L1028.7,578.5L1055,568.3L1079.5,557.6L1102.2,546.4L1123,534.8L1141.9,522.9L1158.9,510.7L1174,498.3L1187.2,485.8L1198.6,473.1L1208.1,460.4L1215.8,447.6L1221.8,434.9L1226.1,422.3L1228.7,409.8L1229.8,397.4L1231.2,397.5L1230.2,410L1227.6,422.5L1223.3,435.2L1217.3,448L1209.6,460.7L1200.1,473.5L1188.7,486.2L1175.5,498.8L1160.4,511.2L1143.4,523.5L1124.4,535.4L1103.6,547L1080.9,558.2L1056.3,569L1029.9,579.3L1001.8,588.9L972.1,598L940.8,606.3L908,613.9L874,620.7L838.8,626.6L802.5,631.6L765.4,635.7L727.6,638.9L689.3,641L650.7,642.1L612,642.3L573.4,641.4L535,639.5L497.1,636.6L459.9,632.7L423.5,627.9L388.1,622.2L353.8,615.6L320.8,608.2L289.3,600L259.3,591.1L230.9,581.6L204.3,571.4L179.5,560.8L156.5,549.6L135.4,538.1L116.2,526.2L98.9,514L83.5,501.5L70.1,489L58.5,476.2L48.8,463.5L41,450.6L34.8,437.9L30.4,425.1L27.7,412.5L26.6,400ZM26.6,400L27.7,412.5L30.4,425.1L34.8,437.9L41,450.6L48.8,463.5L58.5,476.2L70.1,489L83.5,501.5L98.9,514L116.2,526.2L135.4,538.1L156.5,549.6L179.5,560.8L204.3,571.4L230.9,581.6L259.3,591.1L289.3,600L320.8,608.2L353.8,615.6L388.1,622.2L423.5,627.9L459.9,632.7L497.1,636.6L535,639.5L573.4,641.4L612,642.3L650.7,642.1L689.3,641L727.6,638.9L765.4,635.7L802.5,631.6L838.8,626.6L874,620.7L908,613.9L940.8,606.3L972.1,598L1001.8,588.9L1029.9,579.3L1056.3,569L1080.9,558.2L1103.6,547L1124.4,535.4L1143.4,523.5L1160.4,511.2L1175.5,498.8L1188.7,486.2L1200.1,473.5L1209.6,460.7L1217.3,448L1223.3,435.2L1227.6,422.5L1230.2,410L1231.2,397.5L1230.7,400.4L1229.7,412.8L1227.1,425.4L1222.8,438.2L1216.8,450.9L1209.1,463.7L1199.6,476.5L1188.2,489.3L1175,501.9L1159.9,514.3L1142.9,526.6L1123.9,538.6L1103.1,550.2L1080.4,561.4L1055.9,572.2L1029.5,582.5L1001.4,592.2L971.7,601.3L940.5,609.6L907.8,617.2L873.7,624L838.5,629.9L802.3,635L765.3,639.1L727.5,642.2L689.3,644.4L650.7,645.5L612,645.6L573.5,644.7L535.1,642.8L497.3,639.9L460.1,636.1L423.7,631.2L388.3,625.5L354.1,618.9L321.2,611.5L289.7,603.3L259.7,594.4L231.4,584.8L204.7,574.7L179.9,564L157,552.8L135.9,541.2L116.7,529.3L99.4,517.1L84.1,504.6L70.6,492L59.1,479.3L49.4,466.5L41.5,453.6L35.4,440.8L31,428L28.2,415.4L27.1,402.9Z" fill="#0000b2"/>
<path d="M26.9,402L28.1,414.5L30.8,427.1L35.2,439.9L41.3,452.7L49.2,465.5L58.9,478.3L70.5,491.1L83.9,503.7L99.3,516.1L116.5,528.3L135.7,540.3L156.8,551.8L179.8,563L204.6,573.7L231.2,583.8L259.6,593.4L289.6,602.3L321.1,610.5L354,617.9L388.3,624.5L423.7,630.2L460,635L497.3,638.9L535.1,641.8L573.4,643.7L612,644.6L650.7,644.5L689.3,643.3L727.5,641.2L765.3,638.1L802.4,633.9L838.6,628.9L873.8,623L907.8,616.2L940.6,608.6L971.8,600.2L1001.6,591.2L1029.6,581.5L1056,571.2L1080.5,560.5L1103.3,549.2L1124.1,537.6L1143,525.6L1160,513.4L1175.2,500.9L1188.4,488.3L1199.7,475.6L1209.3,462.8L1217,450L1222.9,437.3L1227.2,424.6L1229.8,412L1230.9,399.5L1230.2,403.2L1229.2,415.7L1226.6,428.3L1222.3,441.1L1216.3,453.9L1208.6,466.7L1199.1,479.5L1187.7,492.3L1174.5,504.9L1159.4,517.4L1142.4,529.7L1123.5,541.7L1102.7,553.3L1080,564.6L1055.4,575.4L1029.1,585.7L1001.1,595.4L971.4,604.5L940.1,612.9L907.5,620.5L873.5,627.3L838.3,633.3L802.1,638.3L765.1,642.4L727.4,645.6L689.2,647.7L650.7,648.9L612.1,649L573.5,648.1L535.3,646.2L497.4,643.3L460.3,639.4L424,634.6L388.6,628.8L354.4,622.2L321.5,614.8L290,606.6L260.1,597.6L231.8,588.1L205.2,577.9L180.4,567.2L157.4,556L136.4,544.4L117.2,532.4L99.9,520.2L84.6,507.7L71.2,495.1L59.6,482.3L49.9,469.4L42,456.6L35.9,443.7L31.5,430.9L28.8,418.2L27.6,405.7Z" fill="#0000ce"/>
<path d="M27.4,404.8L28.6,417.4L31.3,430L35.7,442.8L41.9,455.7L49.8,468.5L59.4,481.3L71,494.1L84.4,506.8L99.8,519.2L117,531.5L136.2,543.4L157.3,555L180.2,566.2L205,576.9L231.6,587.1L260,596.6L289.9,605.5L321.4,613.7L354.3,621.2L388.5,627.8L423.9,633.5L460.2,638.4L497.4,642.2L535.2,645.1L573.5,647L612.1,647.9L650.7,647.8L689.2,646.7L727.4,644.5L765.2,641.4L802.2,637.3L838.4,632.2L873.6,626.3L907.6,619.5L940.2,611.9L971.5,603.5L1001.2,594.4L1029.2,584.7L1055.6,574.4L1080.1,563.6L1102.8,552.4L1123.6,540.7L1142.5,528.7L1159.6,516.5L1174.7,504L1187.9,491.3L1199.2,478.6L1208.7,465.8L1216.5,453L1222.4,440.2L1226.7,427.4L1229.3,414.8L1230.4,402.3L1229.8,406L1228.7,418.5L1226,431.2L1221.8,444L1215.8,456.8L1208.1,469.7L1198.6,482.5L1187.2,495.3L1174,508L1158.9,520.5L1141.9,532.8L1123,544.8L1102.2,556.5L1079.5,567.8L1055,578.6L1028.7,588.9L1000.7,598.7L971,607.8L939.8,616.1L907.2,623.8L873.2,630.6L838.1,636.6L802,641.6L765,645.7L727.3,648.9L689.2,651L650.7,652.2L612.1,652.3L573.6,651.4L535.4,649.5L497.6,646.6L460.5,642.7L424.2,637.9L388.9,632.1L354.7,625.5L321.8,618L290.4,609.8L260.5,600.9L232.2,591.3L205.6,581.1L180.8,570.3L157.9,559.1L136.8,547.5L117.7,535.5L100.4,523.3L85.1,510.8L71.7,498.1L60.1,485.3L50.4,472.4L42.6,459.5L36.4,446.6L32,433.8L29.3,421.1L28.1,408.5Z" fill="#0000c3"/>
<path d="M28,407.6L29.1,420.2L31.9,432.9L36.3,445.7L42.4,458.6L50.3,471.5L60,484.3L71.5,497.1L85,509.8L100.3,522.3L117.5,534.6L136.7,546.5L157.8,558.1L180.7,569.3L205.5,580.1L232.1,590.3L260.3,599.9L290.3,608.8L321.7,617L354.6,624.5L388.8,631.1L424.1,636.8L460.4,641.7L497.6,645.6L535.3,648.5L573.6,650.4L612.1,651.3L650.7,651.2L689.2,650L727.3,647.9L765,644.7L802,640.6L838.2,635.5L873.3,629.6L907.3,622.8L939.9,615.1L971.2,606.7L1000.8,597.7L1028.9,587.9L1055.2,577.6L1079.7,566.8L1102.4,555.5L1123.2,543.8L1142.1,531.8L1159.1,519.5L1174.2,507L1187.4,494.4L1198.7,481.6L1208.2,468.7L1215.9,455.9L1221.9,443.1L1226.2,430.3L1228.8,417.7L1229.9,405.1L1229.3,408.8L1228.2,421.4L1225.5,434.1L1221.3,446.8L1215.3,459.7L1207.6,472.6L1198,485.5L1186.7,498.3L1173.5,511L1158.4,523.5L1141.4,535.9L1122.5,547.9L1101.8,559.6L1079.1,570.9L1054.6,581.8L1028.3,592.1L1000.3,601.9L970.7,611L939.5,619.4L906.9,627L873,633.9L837.9,639.9L801.8,644.9L764.9,649.1L727.2,652.2L689.1,654.4L650.7,655.5L612.1,655.6L573.7,654.7L535.5,652.8L497.8,649.9L460.7,646L424.4,641.2L389.1,635.4L355,628.8L322.2,621.3L290.7,613.1L260.9,604.1L232.6,594.5L206.1,584.3L181.3,573.5L158.4,562.3L137.3,550.6L118.2,538.6L101,526.3L85.6,513.8L72.2,501.1L60.7,488.3L51,475.4L43.1,462.4L37,449.5L32.6,436.7L29.8,424L28.6,411.3Z" fill="#0000b8"/>
<path d="M28.5,410.5L29.6,423.1L32.4,435.8L36.8,448.6L42.9,461.5L50.8,474.5L60.5,487.3L72.1,500.2L85.5,512.9L100.8,525.4L118,537.7L137.2,549.7L158.2,561.3L181.2,572.5L205.9,583.3L232.5,593.5L260.7,603.1L290.6,612.1L322.1,620.3L354.9,627.7L389.1,634.4L424.3,640.1L460.6,645L497.7,648.9L535.4,651.8L573.6,653.7L612.1,654.6L650.7,654.5L689.1,653.3L727.3,651.2L764.9,648L801.9,643.9L838,638.8L873.1,632.9L907,626L939.6,618.4L970.8,610L1000.5,600.9L1028.5,591.1L1054.7,580.8L1079.2,570L1101.9,558.7L1122.7,547L1141.6,534.9L1158.6,522.6L1173.7,510.1L1186.9,497.4L1198.2,484.6L1207.7,471.7L1215.4,458.8L1221.4,446L1225.7,433.2L1228.3,420.5L1229.4,408L1228.8,411.6L1227.7,424.2L1225,436.9L1220.7,449.7L1214.8,462.6L1207,475.5L1197.5,488.5L1186.2,501.3L1173,514L1157.9,526.6L1140.9,539L1122.1,551L1101.3,562.8L1078.7,574.1L1054.2,585L1027.9,595.3L1000,605.1L970.4,614.2L939.2,622.7L906.6,630.3L872.7,637.2L837.7,643.1L801.6,648.2L764.7,652.4L727.1,655.5L689,657.7L650.7,658.8L612.2,659L573.7,658.1L535.6,656.1L497.9,653.2L460.9,649.3L424.6,644.5L389.4,638.7L355.3,632L322.5,624.6L291.1,616.3L261.2,607.3L233,597.7L206.5,587.5L181.7,576.7L158.8,565.4L137.8,553.7L118.7,541.7L101.5,529.4L86.2,516.8L72.7,504.1L61.2,491.3L51.5,478.3L43.6,465.4L37.5,452.4L33.1,439.6L30.3,426.8L29.1,414.2Z" fill="#0000ac"/>
<path d="M29,413.3L30.2,425.9L32.9,438.7L37.3,451.5L43.5,464.5L51.3,477.4L61,490.3L72.6,503.2L86,515.9L101.3,528.4L118.5,540.8L137.7,552.8L158.7,564.4L181.6,575.7L206.4,586.5L232.9,596.7L261.1,606.3L291,615.3L322.4,623.5L355.2,631L389.3,637.7L424.6,643.4L460.8,648.3L497.9,652.2L535.6,655.1L573.7,657L612.2,657.9L650.7,657.8L689.1,656.7L727.2,654.5L764.8,651.3L801.7,647.2L837.8,642.1L872.8,636.1L906.7,629.3L939.3,621.6L970.5,613.2L1000.1,604.1L1028.1,594.3L1054.3,584L1078.8,573.1L1101.4,561.8L1122.2,550.1L1141.1,538L1158.1,525.7L1173.2,513.1L1186.4,500.4L1197.7,487.5L1207.2,474.6L1214.9,461.7L1220.9,448.8L1225.2,436L1227.8,423.3L1228.9,410.8L1228.3,414.4L1227.2,427L1224.5,439.8L1220.2,452.6L1214.3,465.5L1206.5,478.5L1197,491.4L1185.7,504.3L1172.5,517.1L1157.4,529.7L1140.5,542L1121.6,554.1L1100.9,565.9L1078.2,577.2L1053.8,588.1L1027.6,598.5L999.6,608.3L970,617.5L938.9,625.9L906.4,633.6L872.5,640.4L837.5,646.4L801.5,651.5L764.6,655.7L727,658.8L689,661L650.6,662.2L612.2,662.3L573.8,661.4L535.7,659.5L498,656.5L461,652.6L424.9,647.7L389.7,642L355.6,635.3L322.8,627.8L291.5,619.5L261.6,610.5L233.4,600.9L206.9,590.6L182.2,579.8L159.3,568.6L138.3,556.9L119.2,544.8L102,532.5L86.7,519.9L73.3,507.1L61.7,494.2L52,481.3L44.1,468.3L38,455.3L33.6,442.4L30.8,429.6L29.7,417Z" fill="#0000ce"/>
<path d="M29.5,416.1L30.7,428.8L33.4,441.5L37.9,454.4L44,467.4L51.9,480.4L61.6,493.3L73.1,506.2L86.5,518.9L101.8,531.5L119,543.8L138.2,555.9L159.2,567.6L182.1,578.9L206.8,589.6L233.3,599.9L261.5,609.5L291.4,618.5L322.7,626.8L355.5,634.3L389.6,640.9L424.8,646.7L461,651.6L498,655.5L535.7,658.4L573.8,660.3L612.2,661.2L650.7,661.1L689,660L727.1,657.8L764.6,654.6L801.5,650.5L837.6,645.4L872.6,639.4L906.4,632.6L939,624.9L970.1,616.5L999.7,607.3L1027.7,597.5L1053.9,587.2L1078.4,576.3L1101,564.9L1121.8,553.2L1140.6,541.1L1157.6,528.7L1172.7,516.1L1185.9,503.4L1197.2,490.5L1206.7,477.6L1214.4,464.6L1220.4,451.7L1224.7,438.9L1227.3,426.2L1228.4,413.6L1227.8,417.2L1226.7,429.8L1224,442.6L1219.7,455.5L1213.8,468.4L1206,481.4L1196.5,494.4L1185.2,507.3L1172,520.1L1156.9,532.7L1140,545.1L1121.1,557.2L1100.4,569L1077.8,580.4L1053.4,591.3L1027.2,601.7L999.2,611.5L969.7,620.7L938.6,629.1L906.1,636.8L872.3,643.7L837.3,649.7L801.3,654.8L764.5,659L726.9,662.1L688.9,664.3L650.6,665.5L612.2,665.6L573.9,664.7L535.8,662.8L498.2,659.8L461.2,655.9L425.1,651L389.9,645.2L355.9,638.6L323.2,631.1L291.8,622.8L262,613.8L233.8,604.1L207.4,593.8L182.7,583L159.8,571.7L138.8,560L119.7,547.9L102.5,535.5L87.2,522.9L73.8,510.1L62.3,497.2L52.6,484.2L44.7,471.2L38.5,458.2L34.1,445.3L31.3,432.5L30.2,419.8Z" fill="#0000c3"/>
<path d="M30,418.9L31.2,431.6L34,444.4L38.4,457.3L44.5,470.3L52.4,483.3L62.1,496.3L73.6,509.2L87,522L102.3,534.6L119.5,546.9L138.6,559L159.6,570.7L182.5,582L207.2,592.8L233.7,603.1L261.9,612.8L291.7,621.8L323.1,630L355.8,637.6L389.8,644.2L425,650L461.2,654.9L498.2,658.8L535.8,661.7L573.9,663.7L612.2,664.6L650.6,664.4L689,663.3L727,661.1L764.5,657.9L801.3,653.8L837.3,648.7L872.3,642.7L906.2,635.8L938.7,628.1L969.8,619.7L999.4,610.5L1027.3,600.7L1053.5,590.3L1077.9,579.4L1100.5,568L1121.3,556.3L1140.1,544.1L1157.1,531.8L1172.2,519.1L1185.4,506.4L1196.7,493.5L1206.2,480.5L1213.9,467.5L1219.9,454.6L1224.2,441.7L1226.8,429L1227.9,416.4L1227.3,420L1226.2,432.7L1223.5,445.5L1219.2,458.4L1213.2,471.4L1205.5,484.4L1196,497.3L1184.7,510.3L1171.5,523.1L1156.5,535.7L1139.5,548.2L1120.7,560.3L1100,572.1L1077.4,583.5L1053,594.5L1026.8,604.9L998.9,614.7L969.3,623.9L938.3,632.4L905.8,640.1L872,647L837.1,653L801.1,658.1L764.3,662.2L726.8,665.4L688.9,667.6L650.6,668.8L612.2,668.9L573.9,668L535.9,666.1L498.3,663.1L461.4,659.2L425.3,654.3L390.2,648.5L356.2,641.8L323.5,634.3L292.2,626L262.4,617L234.2,607.3L207.8,597L183.1,586.1L160.3,574.8L139.3,563.1L120.2,551L103,538.6L87.7,525.9L74.3,513.1L62.8,500.2L53.1,487.2L45.2,474.1L39.1,461.1L34.6,448.2L31.9,435.3L30.7,422.6Z" fill="#0000b8"/>
<path d="M30.5,421.7L31.7,434.4L34.5,447.3L38.9,460.2L45,473.2L52.9,486.3L62.6,499.3L74.1,512.2L87.5,525L102.8,537.6L120,550L139.1,562.1L160.1,573.8L183,585.2L207.7,596L234.1,606.3L262.3,616L292.1,625L323.4,633.3L356.1,640.8L390.1,647.5L425.2,653.3L461.4,658.2L498.3,662.1L535.9,665L573.9,667L612.2,667.9L650.6,667.7L688.9,666.6L726.9,664.4L764.4,661.2L801.2,657.1L837.1,652L872.1,645.9L905.9,639.1L938.4,631.4L969.5,622.9L999,613.7L1026.9,603.9L1053.1,593.5L1077.5,582.6L1100.1,571.2L1120.8,559.4L1139.7,547.2L1156.6,534.8L1171.7,522.2L1184.9,509.3L1196.2,496.4L1205.7,483.4L1213.4,470.5L1219.4,457.5L1223.7,444.6L1226.4,431.8L1227.4,419.1L1226.8,422.8L1225.7,435.5L1223,448.3L1218.7,461.2L1212.7,474.2L1205,487.3L1195.5,500.3L1184.2,513.3L1171,526.1L1156,538.8L1139,551.2L1120.2,563.4L1099.5,575.2L1076.9,586.7L1052.5,597.6L1026.4,608.1L998.5,617.9L969,627.1L938,635.6L905.5,643.3L871.8,650.2L836.9,656.2L800.9,661.4L764.2,665.5L726.8,668.7L688.8,670.9L650.6,672L612.3,672.2L574,671.3L536,669.3L498.5,666.4L461.6,662.5L425.5,657.6L390.4,651.8L356.5,645.1L323.8,637.5L292.5,629.2L262.8,620.2L234.6,610.5L208.2,600.1L183.6,589.3L160.7,577.9L139.8,566.2L120.7,554L103.5,541.6L88.2,529L74.8,516.1L63.3,503.2L53.6,490.1L45.7,477.1L39.6,464L35.2,451L32.4,438.1L31.2,425.4Z" fill="#0000ac"/>
<path d="M31,424.5L32.2,437.2L35,450.1L39.4,463.1L45.6,476.1L53.5,489.2L63.1,502.2L74.7,515.2L88.1,528L103.3,540.7L120.5,553.1L139.6,565.2L160.6,577L183.4,588.3L208.1,599.2L234.5,609.5L262.7,619.2L292.4,628.2L323.7,636.5L356.4,644.1L390.4,650.7L425.5,656.6L461.5,661.4L498.5,665.4L536,668.3L574,670.3L612.3,671.2L650.6,671L688.8,669.9L726.8,667.7L764.2,664.5L801,660.3L836.9,655.2L871.8,649.2L905.6,642.3L938.1,634.6L969.1,626.1L998.6,616.9L1026.5,607.1L1052.7,596.6L1077.1,585.7L1099.6,574.3L1120.4,562.4L1139.2,550.3L1156.1,537.8L1171.2,525.2L1184.4,512.3L1195.7,499.4L1205.2,486.4L1212.9,473.4L1218.9,460.4L1223.2,447.4L1225.9,434.6L1227,421.9L1226.3,425.6L1225.2,438.3L1222.5,451.1L1218.2,464.1L1212.2,477.1L1204.5,490.2L1195,503.2L1183.7,516.2L1170.5,529.1L1155.5,541.8L1138.6,554.3L1119.7,566.5L1099.1,578.3L1076.5,589.8L1052.1,600.8L1026,611.2L998.1,621.1L968.7,630.3L937.7,638.8L905.2,646.5L871.5,653.5L836.7,659.5L800.8,664.6L764.1,668.8L726.7,672L688.8,674.2L650.6,675.3L612.3,675.5L574.1,674.6L536.1,672.6L498.6,669.7L461.8,665.7L425.8,660.8L390.7,655L356.8,648.3L324.1,640.7L292.9,632.4L263.2,623.4L235.1,613.6L208.6,603.3L184,592.4L161.2,581L140.2,569.2L121.2,557.1L104,544.7L88.7,532L75.3,519.1L63.8,506.1L54.1,493L46.2,480L40.1,466.9L35.7,453.9L32.9,440.9L31.7,428.2Z" fill="#0000ce"/>
<path d="M31.5,427.3L32.7,440.1L35.5,453L40,466L46.1,479.1L54,492.1L63.7,505.2L75.2,518.2L88.6,531L103.8,543.7L121,556.1L140.1,568.3L161,580.1L183.9,591.4L208.5,602.3L234.9,612.6L263,622.4L292.8,631.4L324,639.7L356.7,647.3L390.6,654L425.7,659.8L461.7,664.7L498.6,668.7L536.1,671.6L574.1,673.5L612.3,674.4L650.6,674.3L688.8,673.2L726.7,671L764.1,667.8L800.8,663.6L836.7,658.5L871.6,652.4L905.3,645.5L937.8,637.8L968.8,629.3L998.3,620.1L1026.1,610.2L1052.3,599.8L1076.6,588.8L1099.2,577.4L1119.9,565.5L1138.7,553.3L1155.6,540.9L1170.7,528.2L1183.9,515.3L1195.2,502.3L1204.7,489.3L1212.4,476.2L1218.4,463.2L1222.7,450.3L1225.4,437.4L1226.5,424.7L1225.8,428.3L1224.7,441.1L1222,454L1217.7,467L1211.7,480L1204,493.1L1194.5,506.2L1183.2,519.2L1170,532.1L1155,544.8L1138.1,557.3L1119.3,569.5L1098.6,581.4L1076.1,592.9L1051.7,603.9L1025.6,614.4L997.8,624.3L968.3,633.5L937.4,642L905,649.8L871.3,656.7L836.4,662.7L800.6,667.9L763.9,672.1L726.6,675.3L688.7,677.5L650.6,678.6L612.3,678.7L574.2,677.8L536.2,675.9L498.8,672.9L462,669L426,664.1L391,658.2L357.1,651.5L324.5,644L293.2,635.6L263.5,626.5L235.5,616.8L209.1,606.4L184.5,595.5L161.7,584.1L140.7,572.3L121.7,560.2L104.5,547.7L89.2,535L75.9,522.1L64.3,509.1L54.7,496L46.8,482.9L40.6,469.8L36.2,456.7L33.4,443.8L32.2,430.9Z" fill="#0000c3"/>
<path d="M32,430.1L33.2,442.9L36,455.8L40.5,468.9L46.6,482L54.5,495.1L64.2,508.2L75.7,521.2L89.1,534L104.3,546.7L121.5,559.2L140.6,571.4L161.5,583.2L184.3,594.6L208.9,605.5L235.3,615.8L263.4,625.6L293.1,634.6L324.4,643L357,650.5L390.9,657.2L425.9,663.1L461.9,668L498.7,671.9L536.2,674.9L574.1,676.8L612.3,677.7L650.6,677.6L688.7,676.4L726.6,674.2L764,671.1L800.7,666.9L836.5,661.7L871.4,655.7L905.1,648.8L937.5,641L968.4,632.5L997.9,623.3L1025.7,613.4L1051.9,602.9L1076.2,591.9L1098.7,580.5L1119.4,568.6L1138.2,556.4L1155.2,543.9L1170.2,531.2L1183.4,518.3L1194.7,505.3L1204.2,492.2L1211.9,479.1L1217.9,466.1L1222.2,453.1L1224.9,440.2L1226,427.5L1225.3,431.1L1224.2,443.9L1221.5,456.8L1217.2,469.8L1211.2,482.9L1203.5,496L1194,509.1L1182.7,522.2L1169.5,535.1L1154.5,547.8L1137.6,560.4L1118.8,572.6L1098.2,584.5L1075.6,596L1051.3,607L1025.2,617.5L997.4,627.4L968,636.7L937.1,645.2L904.7,653L871,659.9L836.2,666L800.4,671.1L763.8,675.3L726.5,678.5L688.7,680.7L650.6,681.9L612.4,682L574.2,681.1L536.4,679.2L498.9,676.2L462.2,672.3L426.2,667.3L391.2,661.5L357.4,654.8L324.8,647.2L293.6,638.8L263.9,629.7L235.9,620L209.5,609.6L184.9,598.7L162.1,587.2L141.2,575.4L122.2,563.2L105,550.7L89.7,538L76.4,525.1L64.9,512L55.2,498.9L47.3,485.8L41.2,472.6L36.7,459.5L33.9,446.6L32.7,433.7Z" fill="#0000b8"/>
<path d="M32.5,432.9L33.8,445.7L36.6,458.7L41,471.7L47.1,484.9L55,498L64.7,511.1L76.2,524.1L89.6,537.1L104.8,549.8L122,562.3L141,574.5L162,586.3L184.8,597.7L209.4,608.6L235.7,619L263.8,628.7L293.5,637.8L324.7,646.2L357.3,653.8L391.1,660.5L426.1,666.3L462.1,671.2L498.9,675.2L536.3,678.2L574.2,680.1L612.3,681L650.6,680.9L688.7,679.7L726.5,677.5L763.8,674.3L800.5,670.1L836.3,665L871.1,658.9L904.8,652L937.2,644.2L968.1,635.7L997.5,626.5L1025.3,616.6L1051.4,606.1L1075.8,595L1098.3,583.6L1119,571.7L1137.8,559.4L1154.7,546.9L1169.7,534.2L1182.9,521.2L1194.2,508.2L1203.7,495.1L1211.4,482L1217.4,468.9L1221.7,455.9L1224.4,443L1225.5,430.3L1224.9,433.9L1223.7,446.7L1221,459.6L1216.7,472.7L1210.7,485.8L1203,498.9L1193.5,512.1L1182.2,525.1L1169.1,538.1L1154,550.8L1137.1,563.4L1118.4,575.7L1097.7,587.6L1075.2,599.1L1050.9,610.2L1024.8,620.7L997.1,630.6L967.7,639.9L936.7,648.4L904.4,656.2L870.8,663.1L836,669.2L800.3,674.4L763.7,678.6L726.4,681.8L688.6,684L650.6,685.2L612.4,685.3L574.3,684.4L536.5,682.4L499.1,679.5L462.4,675.5L426.4,670.6L391.5,664.7L357.7,658L325.1,650.4L293.9,642L264.3,632.9L236.3,623.1L209.9,612.7L185.3,601.8L162.6,590.3L141.7,578.5L122.6,566.3L105.5,553.7L90.3,541L76.9,528L65.4,515L55.7,501.8L47.8,488.6L41.7,475.5L37.2,462.4L34.4,449.4L33.2,436.5Z" fill="#0000ac"/>
<path d="M33.1,435.6L34.3,448.5L37.1,461.5L41.5,474.6L47.7,487.7L55.5,500.9L65.2,514.1L76.7,527.1L90.1,540.1L105.4,552.8L122.5,565.3L141.5,577.5L162.4,589.4L185.2,600.8L209.8,611.7L236.1,622.1L264.2,631.9L293.8,641L325,649.4L357.6,657L391.4,663.7L426.4,669.6L462.3,674.5L499,678.5L536.4,681.4L574.3,683.4L612.4,684.3L650.6,684.1L688.6,683L726.4,680.8L763.7,677.6L800.3,673.4L836.1,668.2L870.9,662.1L904.5,655.2L936.8,647.4L967.8,638.9L997.2,629.6L1025,619.7L1051,609.2L1075.4,598.2L1097.9,586.6L1118.5,574.7L1137.3,562.5L1154.2,549.9L1169.2,537.1L1182.4,524.2L1193.7,511.1L1203.2,498L1210.9,484.9L1216.9,471.8L1221.2,458.7L1223.9,445.8L1225,433L1224.4,436.6L1223.2,449.5L1220.5,462.4L1216.2,475.5L1210.2,488.7L1202.5,501.8L1193,515L1181.7,528.1L1168.6,541L1153.6,553.9L1136.7,566.4L1117.9,578.7L1097.3,590.7L1074.8,602.2L1050.5,613.3L1024.4,623.8L996.7,633.8L967.3,643L936.4,651.6L904.1,659.4L870.6,666.4L835.8,672.4L800.1,677.6L763.5,681.8L726.3,685L688.6,687.2L650.5,688.4L612.4,688.5L574.4,687.6L536.6,685.7L499.2,682.7L462.5,678.7L426.6,673.8L391.7,667.9L357.9,661.2L325.4,653.6L294.3,645.2L264.7,636.1L236.7,626.3L210.4,615.8L185.8,604.9L163,593.4L142.2,581.5L123.1,569.3L106,556.8L90.8,544L77.4,531L65.9,517.9L56.2,504.7L48.3,491.5L42.2,478.3L37.7,465.2L34.9,452.2L33.7,439.3Z" fill="#0000ce"/>
<path d="M33.6,438.4L34.8,451.3L37.6,464.3L42,477.5L48.2,490.6L56.1,503.8L65.7,517L77.2,530.1L90.6,543L105.9,555.8L123,568.4L142,580.6L162.9,592.5L185.7,603.9L210.2,614.9L236.5,625.3L264.6,635.1L294.2,644.2L325.3,652.6L357.9,660.2L391.7,666.9L426.6,672.8L462.5,677.7L499.2,681.7L536.5,684.7L574.3,686.6L612.4,687.5L650.6,687.4L688.6,686.2L726.3,684L763.6,680.8L800.1,676.6L835.9,671.4L870.6,665.4L904.2,658.4L936.5,650.6L967.4,642.1L996.8,632.8L1024.6,622.8L1050.6,612.3L1074.9,601.3L1097.4,589.7L1118,577.8L1136.8,565.5L1153.7,552.9L1168.7,540.1L1181.9,527.2L1193.2,514.1L1202.7,500.9L1210.4,487.8L1216.4,474.6L1220.7,461.6L1223.4,448.6L1224.5,435.8L1223.9,439.4L1222.7,452.2L1220,465.2L1215.7,478.4L1209.7,491.5L1202,504.7L1192.5,517.9L1181.2,531L1168.1,544L1153.1,556.9L1136.2,569.5L1117.4,581.8L1096.8,593.7L1074.4,605.3L1050.1,616.4L1024.1,627L996.3,636.9L967,646.2L936.1,654.8L903.9,662.6L870.3,669.6L835.6,675.7L799.9,680.8L763.4,685.1L726.2,688.3L688.5,690.5L650.5,691.7L612.4,691.8L574.4,690.9L536.7,688.9L499.4,686L462.7,682L426.9,677L392,671.2L358.2,664.4L325.7,656.8L294.6,648.4L265.1,639.2L237.1,629.4L210.8,619L186.2,608L163.5,596.5L142.6,584.6L123.6,572.3L106.5,559.8L91.3,547L77.9,534L66.4,520.8L56.7,507.6L48.9,494.4L42.7,481.2L38.3,468L35.5,455L34.2,442.1Z" fill="#0000c3"/>
<path d="M34.1,441.2L35.3,454.1L38.1,467.2L42.6,480.3L48.7,493.5L56.6,506.7L66.3,519.9L77.8,533L91.1,546L106.4,558.8L123.5,571.4L142.5,583.7L163.4,595.5L186.1,607L210.6,618L236.9,628.4L264.9,638.2L294.5,647.4L325.6,655.8L358.1,663.4L391.9,670.2L426.8,676L462.7,681L499.3,684.9L536.6,687.9L574.4,689.9L612.4,690.8L650.5,690.7L688.5,689.5L726.2,687.3L763.4,684.1L800,679.8L835.7,674.7L870.4,668.6L904,661.6L936.2,653.8L967.1,645.2L996.4,635.9L1024.2,626L1050.2,615.4L1074.5,604.3L1097,592.8L1117.6,580.8L1136.3,568.5L1153.2,555.9L1168.2,543.1L1181.4,530.1L1192.7,517L1202.2,503.8L1209.9,490.6L1215.9,477.5L1220.2,464.4L1222.9,451.4L1224,438.5L1223.4,442.1L1222.3,455L1219.5,468.1L1215.2,481.2L1209.2,494.4L1201.5,507.6L1192,520.8L1180.7,534L1167.6,547L1152.6,559.8L1135.7,572.5L1117,584.8L1096.4,596.8L1073.9,608.4L1049.7,619.5L1023.7,630.1L996,640.1L966.7,649.4L935.8,658L903.6,665.8L870.1,672.8L835.4,678.9L799.8,684.1L763.3,688.3L726.1,691.5L688.5,693.7L650.5,694.9L612.5,695L574.5,694.1L536.8,692.2L499.5,689.2L462.9,685.2L427.1,680.3L392.2,674.4L358.5,667.6L326.1,660L295,651.5L265.4,642.4L237.5,632.5L211.2,622.1L186.7,611.1L164,599.6L143.1,587.7L124.1,575.4L107,562.8L91.8,549.9L78.4,536.9L66.9,523.8L57.3,510.5L49.4,497.3L43.2,484L38.8,470.9L36,457.8L34.7,444.8Z" fill="#0000b8"/>
<path d="M34.6,444L35.8,456.9L38.6,470L43.1,483.2L49.2,496.4L57.1,509.6L66.8,522.9L78.3,536L91.6,549L106.9,561.8L124,574.4L143,586.7L163.8,598.6L186.5,610.1L211.1,621.1L237.4,631.6L265.3,641.4L294.9,650.6L326,659L358.4,666.6L392.2,673.4L427,679.3L462.9,684.2L499.5,688.2L536.8,691.2L574.5,693.1L612.5,694L650.5,693.9L688.5,692.7L726.1,690.5L763.3,687.3L799.8,683.1L835.5,677.9L870.2,671.8L903.7,664.8L935.9,657L966.8,648.4L996.1,639.1L1023.8,629.1L1049.8,618.5L1074.1,607.4L1096.5,595.9L1117.1,583.9L1135.9,571.5L1152.7,558.9L1167.7,546.1L1180.9,533.1L1192.2,519.9L1201.7,506.7L1209.4,493.5L1215.4,480.3L1219.7,467.2L1222.4,454.2L1223.5,441.3L1222.9,444.9L1221.8,457.8L1219.1,470.9L1214.7,484L1208.7,497.2L1201,510.5L1191.5,523.7L1180.2,536.9L1167.1,550L1152.1,562.8L1135.3,575.5L1116.5,587.9L1095.9,599.9L1073.5,611.5L1049.3,622.6L1023.3,633.2L995.6,643.2L966.3,652.5L935.5,661.1L903.3,669L869.8,676L835.2,682.1L799.6,687.3L763.1,691.5L726,694.8L688.4,697L650.5,698.1L612.5,698.3L574.6,697.4L536.9,695.4L499.7,692.4L463.1,688.4L427.3,683.5L392.5,677.6L358.8,670.8L326.4,663.1L295.3,654.7L265.8,645.5L237.9,635.7L211.6,625.2L187.1,614.2L164.4,602.6L143.6,590.7L124.6,578.4L107.5,565.8L92.3,552.9L78.9,539.9L67.5,526.7L57.8,513.4L49.9,500.1L43.7,486.9L39.3,473.7L36.5,460.6L35.2,447.6Z" fill="#0000ac"/>
<path d="M35.1,446.7L36.3,459.7L39.1,472.8L43.6,486L49.7,499.3L57.6,512.5L67.3,525.8L78.8,539L92.1,552L107.4,564.8L124.5,577.5L143.4,589.8L164.3,601.7L187,613.2L211.5,624.2L237.8,634.7L265.7,644.5L295.2,653.7L326.3,662.2L358.7,669.8L392.4,676.6L427.2,682.5L463,687.4L499.6,691.4L536.9,694.4L574.5,696.4L612.5,697.3L650.5,697.1L688.4,696L726,693.7L763.2,690.5L799.6,686.3L835.3,681.1L869.9,675L903.4,668L935.6,660.2L966.4,651.6L995.7,642.2L1023.4,632.2L1049.4,621.6L1073.6,610.5L1096.1,598.9L1116.7,586.9L1135.4,574.6L1152.3,561.9L1167.3,549L1180.4,536L1191.7,522.8L1201.2,509.6L1208.9,496.4L1214.9,483.1L1219.2,470L1221.9,456.9L1223.1,444L1222.4,447.6L1221.3,460.6L1218.6,473.7L1214.2,486.8L1208.2,500.1L1200.5,513.4L1191,526.6L1179.7,539.8L1166.6,552.9L1151.6,565.8L1134.8,578.5L1116.1,590.9L1095.5,602.9L1073.1,614.5L1048.9,625.7L1022.9,636.3L995.3,646.3L966,655.7L935.2,664.3L903.1,672.2L869.6,679.2L835,685.3L799.4,690.5L763,694.7L725.9,698L688.4,700.2L650.5,701.4L612.5,701.5L574.6,700.6L537,698.6L499.8,695.6L463.3,691.6L427.5,686.7L392.8,680.8L359.1,674L326.7,666.3L295.7,657.9L266.2,648.7L238.3,638.8L212,628.3L187.6,617.3L164.9,605.7L144.1,593.7L125.1,581.4L108,568.8L92.8,555.9L79.5,542.8L68,529.6L58.3,516.3L50.4,503L44.3,489.7L39.8,476.5L37,463.3L35.7,450.3Z" fill="#0000ce"/>
<path d="M35.6,449.5L36.8,462.5L39.6,475.6L44.1,488.8L50.3,502.1L58.1,515.4L67.8,528.7L79.3,541.9L92.6,555L107.9,567.8L124.9,580.5L143.9,592.8L164.8,604.8L187.4,616.3L211.9,627.3L238.2,637.8L266.1,647.7L295.6,656.9L326.6,665.3L359,673L392.7,679.8L427.5,685.7L463.2,690.6L499.8,694.6L537,697.6L574.6,699.6L612.5,700.5L650.5,700.4L688.4,699.2L726,697L763,693.7L799.5,689.5L835.1,684.3L869.7,678.2L903.1,671.2L935.3,663.3L966.1,654.7L995.4,645.4L1023,635.4L1049,624.7L1073.2,613.6L1095.6,602L1116.2,589.9L1134.9,577.6L1151.8,564.9L1166.8,552L1179.9,538.9L1191.2,525.7L1200.7,512.5L1208.4,499.2L1214.4,486L1218.7,472.8L1221.4,459.7L1222.6,446.8L1221.9,450.4L1220.8,463.3L1218.1,476.4L1213.7,489.7L1207.7,502.9L1200,516.2L1190.5,529.5L1179.2,542.8L1166.1,555.9L1151.2,568.8L1134.3,581.5L1115.6,593.9L1095.1,606L1072.7,617.6L1048.5,628.8L1022.5,639.4L994.9,649.5L965.7,658.8L934.9,667.5L902.8,675.3L869.4,682.4L834.8,688.5L799.3,693.7L762.9,697.9L725.8,701.2L688.3,703.4L650.5,704.6L612.6,704.7L574.7,703.8L537.1,701.8L500,698.9L463.5,694.9L427.8,689.9L393,684L359.4,677.1L327,669.5L296,661L266.6,651.8L238.7,641.9L212.5,631.4L188,620.3L165.4,608.8L144.5,596.8L125.6,584.4L108.5,571.8L93.3,558.8L80,545.8L68.5,532.5L58.8,519.2L50.9,505.9L44.8,492.5L40.3,479.3L37.5,466.1L36.2,453.1Z" fill="#0000c3"/>
<path d="M36.1,452.2L37.3,465.3L40.2,478.4L44.6,491.7L50.8,505L58.7,518.3L68.3,531.6L79.8,544.8L93.1,557.9L108.3,570.8L125.4,583.5L144.4,595.8L165.2,607.8L187.9,619.4L212.3,630.4L238.6,640.9L266.4,650.8L295.9,660L326.9,668.5L359.3,676.2L392.9,683L427.7,688.9L463.4,693.9L499.9,697.9L537.1,700.8L574.7,702.8L612.5,703.7L650.5,703.6L688.3,702.4L725.9,700.2L762.9,697L799.3,692.7L834.9,687.5L869.4,681.4L902.9,674.3L935,666.5L965.8,657.9L995,648.5L1022.6,638.5L1048.6,627.8L1072.8,616.7L1095.2,605L1115.8,593L1134.5,580.6L1151.3,567.9L1166.3,554.9L1179.4,541.9L1190.7,528.6L1200.2,515.4L1207.9,502.1L1213.9,488.8L1218.2,475.6L1220.9,462.5L1222.1,449.5L1221.5,453.1L1220.3,466.1L1217.6,479.2L1213.2,492.5L1207.2,505.8L1199.5,519.1L1190,532.4L1178.8,545.7L1165.6,558.8L1150.7,571.8L1133.9,584.5L1115.2,596.9L1094.6,609L1072.2,620.7L1048.1,631.9L1022.1,642.5L994.5,652.6L965.3,662L934.6,670.6L902.5,678.5L869.1,685.5L834.6,691.7L799.1,696.9L762.7,701.2L725.7,704.4L688.3,706.6L650.5,707.8L612.6,707.9L574.8,707L537.2,705.1L500.1,702.1L463.6,698.1L428,693.1L393.3,687.1L359.7,680.3L327.3,672.6L296.4,664.2L266.9,654.9L239.1,645L212.9,634.5L188.5,623.4L165.8,611.8L145,599.8L126.1,587.4L109,574.7L93.8,561.8L80.5,548.7L69,535.4L59.3,522.1L51.4,508.7L45.3,495.4L40.8,482.1L38,468.9L36.7,455.8Z" fill="#0000b8"/>
<path d="M36.6,455L37.8,468L40.7,481.2L45.1,494.5L51.3,507.8L59.2,521.2L68.8,534.5L80.3,547.8L93.6,560.9L108.8,573.8L125.9,586.5L144.9,598.9L165.7,610.9L188.3,622.5L212.8,633.5L239,644.1L266.8,654L296.3,663.2L327.2,671.7L359.6,679.3L393.2,686.2L427.9,692.1L463.6,697.1L500.1,701.1L537.2,704.1L574.7,706L612.6,706.9L650.5,706.8L688.3,705.6L725.8,703.4L762.8,700.2L799.1,695.9L834.7,690.7L869.2,684.5L902.6,677.5L934.7,669.6L965.4,661L994.7,651.6L1022.3,641.6L1048.2,630.9L1072.4,619.7L1094.8,608.1L1115.3,596L1134,583.6L1150.8,570.8L1165.8,557.9L1178.9,544.8L1190.2,531.5L1199.7,518.2L1207.4,504.9L1213.4,491.6L1217.7,478.4L1220.5,465.2L1221.6,452.3L1221,455.8L1219.8,468.8L1217.1,482L1212.8,495.3L1206.7,508.6L1199,522L1189.5,535.3L1178.3,548.6L1165.2,561.8L1150.2,574.7L1133.4,587.5L1114.7,599.9L1094.2,612L1071.8,623.7L1047.7,635L1021.8,645.6L994.2,655.7L965,665.1L934.3,673.8L902.2,681.7L868.9,688.7L834.4,694.9L798.9,700.1L762.6,704.4L725.6,707.6L688.2,709.8L650.5,711L612.6,711.2L574.8,710.2L537.3,708.3L500.3,705.3L463.8,701.2L428.2,696.3L393.5,690.3L360,683.5L327.7,675.8L296.7,667.3L267.3,658.1L239.5,648.1L213.3,637.6L188.9,626.5L166.3,614.9L145.5,602.8L126.5,590.4L109.5,577.7L94.3,564.8L81,551.6L69.5,538.3L59.8,525L52,511.6L45.8,498.2L41.3,484.9L38.5,471.7L37.2,458.6Z" fill="#0000ac"/>
<path d="M37.1,457.7L38.3,470.8L41.2,484L45.6,497.3L51.8,510.7L59.7,524.1L69.4,537.4L80.8,550.7L94.2,563.8L109.3,576.8L126.4,589.5L145.3,601.9L166.1,613.9L188.8,625.5L213.2,636.6L239.4,647.2L267.2,657.1L296.6,666.3L327.6,674.8L359.9,682.5L393.4,689.3L428.1,695.3L463.8,700.3L500.2,704.3L537.3,707.3L574.8,709.2L612.6,710.2L650.5,710L688.2,708.8L725.7,706.6L762.7,703.4L799,699.1L834.5,693.9L869,687.7L902.3,680.7L934.4,672.8L965.1,664.1L994.3,654.7L1021.9,644.7L1047.8,634L1072,622.8L1094.3,611.1L1114.9,599L1133.5,586.6L1150.4,573.8L1165.3,560.8L1178.4,547.7L1189.7,534.4L1199.2,521.1L1206.9,507.7L1212.9,494.4L1217.2,481.2L1220,468L1221.1,455L1220.5,458.6L1219.3,471.6L1216.6,484.8L1212.3,498.1L1206.3,511.5L1198.5,524.8L1189.1,538.2L1177.8,551.5L1164.7,564.7L1149.7,577.7L1132.9,590.5L1114.3,602.9L1093.7,615.1L1071.4,626.8L1047.3,638L1021.4,648.7L993.8,658.8L964.7,668.2L934,676.9L902,684.8L868.7,691.9L834.2,698L798.8,703.3L762.5,707.5L725.6,710.8L688.2,713L650.4,714.2L612.6,714.4L574.9,713.4L537.4,711.5L500.4,708.5L464,704.4L428.4,699.4L393.8,693.5L360.2,686.6L328,678.9L297.1,670.4L267.7,661.2L239.9,651.2L213.7,640.7L189.3,629.5L166.7,617.9L145.9,605.9L127,593.4L110,580.7L94.8,567.7L81.5,554.5L70,541.2L60.4,527.8L52.5,514.4L46.3,501L41.8,487.7L39,474.4L37.7,461.3Z" fill="#0000ce"/>
<path d="M37.6,460.5L38.8,473.6L41.7,486.8L46.2,500.1L52.3,513.5L60.2,527L69.9,540.3L81.3,553.6L94.7,566.8L109.8,579.8L126.9,592.5L145.8,604.9L166.6,617L189.2,628.6L213.6,639.7L239.7,650.3L267.6,660.2L297,669.5L327.9,678L360.2,685.7L393.7,692.5L428.3,698.5L463.9,703.4L500.4,707.5L537.4,710.5L574.9,712.4L612.6,713.4L650.5,713.2L688.2,712L725.6,709.8L762.5,706.6L798.8,702.3L834.3,697.1L868.7,690.9L902.1,683.8L934.1,675.9L964.8,667.2L993.9,657.8L1021.5,647.8L1047.4,637.1L1071.5,625.8L1093.9,614.1L1114.4,602L1133.1,589.5L1149.9,576.8L1164.8,563.8L1177.9,550.6L1189.2,537.3L1198.7,524L1206.4,510.6L1212.4,497.2L1216.8,483.9L1219.5,470.7L1220.7,457.7L1220,461.3L1218.8,474.3L1216.1,487.6L1211.8,500.9L1205.8,514.3L1198,527.7L1188.6,541.1L1177.3,554.4L1164.2,567.6L1149.3,580.6L1132.5,593.4L1113.8,605.9L1093.3,618.1L1071,629.8L1046.9,641.1L1021,651.8L993.5,661.9L964.4,671.3L933.7,680L901.7,688L868.4,695L834,701.2L798.6,706.5L762.4,710.7L725.5,714L688.1,716.2L650.4,717.4L612.7,717.6L575,716.6L537.5,714.7L500.5,711.6L464.2,707.6L428.6,702.6L394,696.7L360.5,689.8L328.3,682.1L297.4,673.5L268.1,664.3L240.3,654.3L214.1,643.7L189.8,632.6L167.2,620.9L146.4,608.9L127.5,596.4L110.5,583.7L95.3,570.7L82,557.5L70.5,544.1L60.9,530.7L53,517.3L46.8,503.8L42.3,490.5L39.5,477.2L38.2,464Z" fill="#0000c3"/>
<path d="M38.1,463.2L39.3,476.3L42.2,489.6L46.7,503L52.8,516.4L60.7,529.8L70.4,543.2L81.8,556.5L95.2,569.7L110.3,582.7L127.4,595.5L146.3,607.9L167,620L189.6,631.6L214,642.8L240.1,653.4L267.9,663.3L297.3,672.6L328.2,681.1L360.4,688.8L393.9,695.7L428.6,701.6L464.1,706.6L500.5,710.7L537.5,713.7L574.9,715.6L612.7,716.6L650.4,716.4L688.1,715.2L725.5,713L762.4,709.7L798.6,705.5L834.1,700.2L868.5,694L901.8,687L933.8,679.1L964.5,670.4L993.6,660.9L1021.1,650.8L1047,640.1L1071.1,628.9L1093.4,617.2L1114,605L1132.6,592.5L1149.4,579.7L1164.3,566.7L1177.4,553.5L1188.7,540.2L1198.2,526.8L1205.9,513.4L1211.9,500L1216.3,486.7L1219,473.5L1220.2,460.4L1219.6,464L1218.4,477.1L1215.6,490.3L1211.3,503.7L1205.3,517.1L1197.5,530.5L1188.1,544L1176.8,557.3L1163.7,570.5L1148.8,583.6L1132,596.4L1113.4,608.9L1092.9,621.1L1070.6,632.9L1046.5,644.1L1020.6,654.9L993.1,665L964,674.4L933.4,683.2L901.4,691.1L868.2,698.2L833.8,704.4L798.4,709.6L762.2,713.9L725.4,717.2L688,719.4L650.4,720.6L612.7,720.7L575,719.8L537.6,717.8L500.7,714.8L464.4,710.8L428.8,705.8L394.3,699.8L360.8,692.9L328.6,685.2L297.8,676.7L268.4,667.4L240.7,657.4L214.6,646.8L190.2,635.6L167.6,624L146.9,611.9L128,599.4L111,586.6L95.8,573.6L82.5,560.4L71,547L61.4,533.6L53.5,520.1L47.3,506.6L42.9,493.2L40,479.9L38.7,466.8Z" fill="#0000b8"/>
<path d="M38.6,465.9L39.8,479.1L42.7,492.4L47.2,505.8L53.3,519.2L61.2,532.7L70.9,546.1L82.4,559.5L95.7,572.7L110.8,585.7L127.8,598.5L146.7,610.9L167.5,623L190.1,634.7L214.4,645.9L240.5,656.5L268.3,666.4L297.7,675.7L328.5,684.2L360.7,692L394.2,698.8L428.8,704.8L464.3,709.8L500.6,713.8L537.6,716.9L575,718.8L612.7,719.8L650.4,719.6L688.1,718.4L725.4,716.2L762.3,712.9L798.5,708.6L833.9,703.4L868.3,697.2L901.5,690.1L933.5,682.2L964.1,673.5L993.2,664L1020.7,653.9L1046.6,643.2L1070.7,631.9L1093,620.2L1113.5,608L1132.1,595.5L1148.9,582.7L1163.9,569.6L1177,556.4L1188.2,543.1L1197.7,529.7L1205.4,516.2L1211.4,502.8L1215.8,489.5L1218.5,476.2L1219.7,463.1L1219.1,466.7L1217.9,479.8L1215.1,493.1L1210.8,506.5L1204.8,519.9L1197.1,533.4L1187.6,546.8L1176.3,560.2L1163.2,573.5L1148.3,586.5L1131.5,599.4L1112.9,611.9L1092.4,624.1L1070.1,635.9L1046.1,647.2L1020.3,657.9L992.8,668.1L963.7,677.6L933.1,686.3L901.2,694.2L867.9,701.3L833.6,707.5L798.3,712.8L762.1,717.1L725.3,720.4L688,722.6L650.4,723.8L612.7,723.9L575.1,723L537.7,721L500.8,718L464.6,714L429.1,708.9L394.5,703L361.1,696.1L328.9,688.3L298.1,679.8L268.8,670.5L241.1,660.5L215,649.9L190.6,638.7L168.1,627L147.4,614.9L128.5,602.4L111.5,589.6L96.3,576.5L83,563.3L71.5,549.9L61.9,536.4L54,522.9L47.8,509.4L43.4,496L40.5,482.7L39.2,469.5Z" fill="#0000ac"/>
<path d="M39.1,468.6L40.3,481.8L43.2,495.2L47.7,508.6L53.8,522.1L61.7,535.5L71.4,549L82.9,562.4L96.2,575.6L111.3,588.7L128.3,601.5L147.2,613.9L167.9,626.1L190.5,637.7L214.9,648.9L240.9,659.5L268.7,669.5L298,678.8L328.8,687.4L361,695.1L394.4,702L429,708L464.5,713L500.8,717L537.7,720L575.1,722L612.7,722.9L650.4,722.8L688,721.6L725.3,719.4L762.1,716.1L798.3,711.8L833.7,706.5L868,700.3L901.3,693.3L933.2,685.3L963.8,676.6L992.9,667.1L1020.4,657L1046.2,646.3L1070.3,635L1092.6,623.2L1113,611L1131.7,598.5L1148.5,585.6L1163.4,572.6L1176.5,559.3L1187.7,545.9L1197.2,532.5L1204.9,519L1210.9,505.6L1215.3,492.2L1218,479L1219.2,465.9L1218.6,469.4L1217.4,482.6L1214.6,495.9L1210.3,509.3L1204.3,522.7L1196.6,536.2L1187.1,549.7L1175.8,563.1L1162.8,576.4L1147.8,589.5L1131.1,602.3L1112.5,614.9L1092,627.1L1069.7,638.9L1045.7,650.2L1019.9,661L992.4,671.2L963.4,680.7L932.8,689.4L900.9,697.4L867.7,704.5L833.4,710.7L798.1,715.9L762,720.2L725.2,723.5L687.9,725.8L650.4,727L612.7,727.1L575.2,726.2L537.8,724.2L501,721.2L464.7,717.1L429.3,712.1L394.8,706.1L361.4,699.2L329.2,691.5L298.5,682.9L269.2,673.6L241.5,663.6L215.4,652.9L191.1,641.7L168.5,630L147.8,617.9L129,605.4L112,592.5L96.8,579.4L83.5,566.2L72.1,552.8L62.4,539.3L54.5,525.8L48.4,512.2L43.9,498.8L41,485.4L39.7,472.2Z" fill="#0000ce"/>
<path d="M39.6,471.4L40.8,484.6L43.7,497.9L48.2,511.4L54.4,524.9L62.2,538.4L71.9,551.9L83.4,565.3L96.7,578.5L111.8,591.6L128.8,604.4L147.7,616.9L168.4,629.1L190.9,640.8L215.3,652L241.3,662.6L269.1,672.6L298.4,681.9L329.1,690.5L361.3,698.2L394.7,705.1L429.2,711.1L464.7,716.1L500.9,720.2L537.8,723.2L575.1,725.2L612.7,726.1L650.4,726L688,724.8L725.2,722.5L762,719.3L798.1,715L833.5,709.7L867.8,703.5L901,696.4L932.9,688.4L963.5,679.7L992.5,670.2L1020,660.1L1045.8,649.3L1069.9,638L1092.1,626.2L1112.6,614L1131.2,601.4L1148,588.6L1162.9,575.5L1176,562.2L1187.2,548.8L1196.7,535.3L1204.4,521.9L1210.4,508.4L1214.8,495L1217.5,481.7L1218.7,468.6L1218.1,472.1L1216.9,485.3L1214.2,498.6L1209.8,512L1203.8,525.5L1196.1,539.1L1186.6,552.6L1175.4,566L1162.3,579.3L1147.4,592.4L1130.6,605.3L1112,617.9L1091.6,630.1L1069.3,642L1045.3,653.3L1019.5,664.1L992.1,674.2L963,683.7L932.5,692.5L900.6,700.5L867.5,707.6L833.2,713.8L797.9,719.1L761.8,723.4L725.1,726.7L687.9,728.9L650.4,730.1L612.8,730.3L575.2,729.3L538,727.4L501.1,724.3L464.9,720.3L429.5,715.2L395,709.2L361.7,702.3L329.6,694.6L298.8,686L269.5,676.7L241.8,666.6L215.8,656L191.5,644.8L169,633L148.3,620.9L129.4,608.3L112.4,595.5L97.3,582.4L84,569.1L72.6,555.6L62.9,542.1L55,528.6L48.9,515L44.4,501.6L41.5,488.2L40.2,474.9Z" fill="#0000c3"/>
<path d="M40.1,474.1L41.3,487.3L44.2,500.7L48.7,514.2L54.9,527.7L62.8,541.2L72.4,554.7L83.9,568.2L97.2,581.5L112.3,594.6L129.3,607.4L148.1,619.9L168.9,632.1L191.4,643.8L215.7,655L241.7,665.7L269.4,675.7L298.7,685L329.5,693.6L361.6,701.4L395,708.3L429.4,714.3L464.9,719.3L501.1,723.4L537.9,726.4L575.2,728.4L612.8,729.3L650.4,729.2L687.9,728L725.1,725.7L761.9,722.4L798,718.1L833.3,712.8L867.5,706.6L900.7,699.5L932.6,691.5L963.1,682.8L992.2,673.3L1019.6,663.1L1045.4,652.3L1069.4,641L1091.7,629.2L1112.2,617L1130.8,604.4L1147.5,591.5L1162.4,578.4L1175.5,565.1L1186.8,551.7L1196.2,538.2L1203.9,524.7L1210,511.2L1214.3,497.8L1217.1,484.4L1218.3,471.3L1217.6,474.8L1216.4,488L1213.7,501.4L1209.3,514.8L1203.3,528.3L1195.6,541.9L1186.1,555.4L1174.9,568.9L1161.8,582.2L1146.9,595.3L1130.2,608.3L1111.6,620.9L1091.1,633.1L1068.9,645L1044.9,656.3L1019.1,667.1L991.7,677.3L962.7,686.8L932.2,695.6L900.4,703.6L867.2,710.7L833,717L797.8,722.2L761.7,726.6L725,729.8L687.8,732.1L650.4,733.3L612.8,733.4L575.3,732.5L538.1,730.5L501.3,727.5L465.1,723.4L429.7,718.4L395.3,712.4L362,705.5L329.9,697.7L299.1,689.1L269.9,679.7L242.2,669.7L216.2,659L191.9,647.8L169.4,636L148.8,623.8L129.9,611.3L112.9,598.4L97.8,585.3L84.5,572L73.1,558.5L63.4,545L55.5,531.4L49.4,517.8L44.9,504.3L42,490.9L40.7,477.6Z" fill="#0000b8"/>
<path d="M40.5,476.8L41.8,490.1L44.7,503.5L49.2,517L55.4,530.5L63.3,544.1L72.9,557.6L84.4,571.1L97.6,584.4L112.8,597.5L129.8,610.4L148.6,622.9L169.3,635.1L191.8,646.8L216.1,658.1L242.1,668.7L269.8,678.8L299,688.1L329.8,696.7L361.9,704.5L395.2,711.4L429.6,717.4L465,722.5L501.2,726.5L538,729.5L575.3,731.5L612.8,732.5L650.4,732.3L687.9,731.1L725,728.9L761.8,725.6L797.8,721.3L833.1,716L867.3,709.8L900.5,702.6L932.3,694.6L962.8,685.9L991.8,676.4L1019.2,666.2L1045,655.4L1069,644L1091.3,632.2L1111.7,620L1130.3,607.3L1147,594.4L1162,581.3L1175,568L1186.3,554.5L1195.7,541L1203.5,527.5L1209.5,514L1213.8,500.5L1216.6,487.2L1217.8,474L1217.2,477.5L1216,490.7L1213.2,504.1L1208.8,517.6L1202.8,531.1L1195.1,544.7L1185.6,558.3L1174.4,571.7L1161.3,585.1L1146.4,598.3L1129.7,611.2L1111.1,623.8L1090.7,636.1L1068.5,648L1044.5,659.4L1018.8,670.2L991.4,680.4L962.4,689.9L931.9,698.7L900.1,706.7L867,713.8L832.8,720.1L797.6,725.4L761.6,729.7L724.9,733L687.8,735.3L650.4,736.5L612.8,736.6L575.4,735.7L538.2,733.7L501.4,730.6L465.3,726.6L429.9,721.5L395.5,715.5L362.2,708.6L330.2,700.8L299.5,692.2L270.3,682.8L242.6,672.7L216.6,662.1L192.4,650.8L169.9,639L149.2,626.8L130.4,614.2L113.4,601.3L98.3,588.2L85,574.8L73.6,561.4L63.9,547.8L56,534.2L49.9,520.6L45.4,507.1L42.5,493.6L41.2,480.3Z" fill="#0000ac"/>
<path d="M41,479.5L42.3,492.8L45.2,506.2L49.7,519.7L55.9,533.3L63.8,546.9L73.4,560.5L84.9,574L98.1,587.3L113.3,600.4L130.2,613.3L149.1,625.9L169.8,638.1L192.2,649.9L216.5,661.1L242.5,671.8L270.2,681.9L299.4,691.2L330.1,699.8L362.1,707.6L395.5,714.5L429.9,720.5L465.2,725.6L501.4,729.7L538.1,732.7L575.3,734.7L612.8,735.6L650.4,735.5L687.8,734.3L725,732L761.6,728.7L797.6,724.4L832.9,719.1L867.1,712.9L900.2,705.7L932,697.7L962.5,689L991.5,679.4L1018.9,669.2L1044.6,658.4L1068.6,647L1090.8,635.2L1111.3,622.9L1129.8,610.3L1146.6,597.4L1161.5,584.2L1174.5,570.8L1185.8,557.4L1195.2,543.8L1203,530.3L1209,516.7L1213.3,503.3L1216.1,489.9L1217.3,476.7L1216.7,480.2L1215.5,493.4L1212.7,506.8L1208.3,520.4L1202.3,533.9L1194.6,547.5L1185.1,561.1L1173.9,574.6L1160.9,588L1146,601.2L1129.2,614.1L1110.7,626.8L1090.3,639.1L1068.1,651L1044.1,662.4L1018.4,673.2L991,683.4L962.1,693L931.6,701.8L899.8,709.8L866.8,717L832.6,723.2L797.4,728.5L761.5,732.8L724.8,736.1L687.7,738.4L650.4,739.6L612.9,739.7L575.4,738.8L538.3,736.8L501.5,733.8L465.5,729.7L430.1,724.6L395.8,718.6L362.5,711.7L330.5,703.9L299.8,695.3L270.6,685.9L243,675.8L217.1,665.1L192.8,653.8L170.3,642L149.7,629.8L130.9,617.2L113.9,604.3L98.8,591.1L85.5,577.7L74.1,564.2L64.4,550.6L56.5,537L50.4,523.4L45.9,509.8L43,496.4L41.7,483Z" fill="#0000ce"/>
<path d="M41.5,482.2L42.8,495.5L45.7,509L50.2,522.5L56.4,536.1L64.3,549.8L73.9,563.3L85.4,576.8L98.6,590.2L113.8,603.4L130.7,616.3L149.5,628.9L170.2,641.1L192.7,652.9L216.9,664.2L242.9,674.9L270.5,684.9L299.7,694.3L330.4,702.9L362.4,710.7L395.7,717.7L430.1,723.7L465.4,728.7L501.5,732.8L538.2,735.8L575.4,737.8L612.8,738.8L650.4,738.6L687.8,737.4L724.9,735.2L761.5,731.9L797.5,727.5L832.7,722.2L866.8,716L899.9,708.8L931.7,700.8L962.2,692L991.1,682.5L1018.5,672.3L1044.2,661.4L1068.2,650.1L1090.4,638.2L1110.8,625.9L1129.4,613.2L1146.1,600.3L1161,587.1L1174.1,573.7L1185.3,560.2L1194.8,546.7L1202.5,533.1L1208.5,519.5L1212.9,506L1215.6,492.6L1216.8,479.3L1216.2,482.9L1215,496.2L1212.2,509.6L1207.9,523.1L1201.8,536.7L1194.1,550.3L1184.7,563.9L1173.4,577.5L1160.4,590.9L1145.5,604.1L1128.8,617.1L1110.2,629.8L1089.8,642.1L1067.7,654L1043.7,665.4L1018,676.3L990.7,686.5L961.7,696.1L931.3,704.9L899.6,712.9L866.5,720.1L832.4,726.3L797.3,731.6L761.3,736L724.7,739.3L687.7,741.5L650.3,742.8L612.9,742.9L575.5,742L538.4,740L501.7,736.9L465.6,732.8L430.4,727.8L396,721.7L362.8,714.8L330.8,707L300.2,698.3L271,688.9L243.4,678.8L217.5,668.1L193.2,656.8L170.8,645L150.1,632.8L131.3,620.1L114.4,607.2L99.3,594L86,580.6L74.6,567.1L64.9,553.5L57.1,539.8L50.9,526.2L46.4,512.6L43.5,499.1L42.2,485.7Z" fill="#0000c3"/>
<path d="M42,484.9L43.3,498.2L46.2,511.7L50.7,525.3L56.9,538.9L64.8,552.6L74.4,566.2L85.9,579.7L99.1,593.1L114.2,606.3L131.2,619.2L150,631.8L170.7,644.1L193.1,655.9L217.3,667.2L243.3,677.9L270.9,688L300.1,697.4L330.7,706L362.7,713.8L395.9,720.8L430.3,726.8L465.6,731.9L501.6,735.9L538.3,739L575.5,741L612.9,741.9L650.3,741.8L687.7,740.6L724.8,738.3L761.4,735L797.3,730.7L832.5,725.4L866.6,719.1L899.7,711.9L931.4,703.9L961.8,695.1L990.8,685.5L1018.1,675.3L1043.8,664.5L1067.8,653.1L1090,641.2L1110.4,628.8L1128.9,616.2L1145.6,603.2L1160.5,590L1173.6,576.6L1184.8,563.1L1194.3,549.5L1202,535.9L1208,522.3L1212.4,508.7L1215.1,495.3L1216.4,482L1215.8,485.5L1214.5,498.9L1211.7,512.3L1207.4,525.9L1201.4,539.5L1193.6,553.2L1184.2,566.8L1172.9,580.3L1159.9,593.8L1145,607L1128.3,620L1109.8,632.7L1089.4,645.1L1067.2,657L1043.3,668.4L1017.6,679.3L990.3,689.5L961.4,699.1L931.1,708L899.3,716L866.3,723.2L832.2,729.4L797.1,734.8L761.2,739.1L724.7,742.4L687.6,744.7L650.3,745.9L612.9,746L575.6,745.1L538.5,743.1L501.8,740L465.8,736L430.6,730.9L396.3,724.8L363.1,717.9L331.1,710L300.5,701.4L271.4,692L243.8,681.9L217.9,671.1L193.7,659.8L171.2,648L150.6,635.7L131.8,623.1L114.9,610.1L99.8,596.9L86.5,583.5L75.1,569.9L65.4,556.3L57.6,542.6L51.4,528.9L46.9,515.3L44,501.8L42.7,488.4Z" fill="#0000b8"/>
<path d="M42.5,487.6L43.8,501L46.7,514.5L51.2,528.1L57.4,541.7L65.3,555.4L74.9,569L86.4,582.6L99.6,596L114.7,609.2L131.7,622.2L150.5,634.8L171.1,647.1L193.5,658.9L217.8,670.2L243.7,680.9L271.3,691L300.4,700.4L331,709.1L363,716.9L396.2,723.9L430.5,729.9L465.8,735L501.8,739.1L538.4,742.1L575.5,744.1L612.9,745.1L650.3,744.9L687.7,743.7L724.7,741.4L761.2,738.1L797.2,733.8L832.3,728.5L866.4,722.2L899.4,715L931.1,707L961.5,698.2L990.4,688.6L1017.7,678.3L1043.4,667.5L1067.4,656L1089.5,644.1L1109.9,631.8L1128.5,619.1L1145.2,606.1L1160,592.9L1173.1,579.4L1184.3,565.9L1193.8,552.3L1201.5,538.6L1207.5,525L1211.9,511.5L1214.7,498L1215.9,484.7L1215.3,488.2L1214,501.6L1211.3,515L1206.9,528.6L1200.9,542.3L1193.2,556L1183.7,569.6L1172.5,583.2L1159.4,596.6L1144.6,609.9L1127.9,622.9L1109.3,635.7L1089,648L1066.8,660L1042.9,671.4L1017.3,682.3L990,692.6L961.1,702.2L930.8,711L899,719.1L866.1,726.3L832,732.5L796.9,737.9L761.1,742.2L724.6,745.5L687.6,747.8L650.3,749L612.9,749.2L575.6,748.2L538.6,746.2L502,743.2L466,739.1L430.8,734L396.5,727.9L363.4,721L331.4,713.1L300.8,704.5L271.7,695L244.2,684.9L218.3,674.2L194.1,662.8L171.7,651L151.1,638.7L132.3,626L115.4,613L100.3,599.8L87,586.3L75.6,572.8L65.9,559.1L58.1,545.4L51.9,531.7L47.4,518.1L44.5,504.5L43.2,491.1Z" fill="#0000ac"/>
<path d="M43,490.3L44.3,503.7L47.2,517.2L51.7,530.8L57.9,544.5L65.8,558.2L75.4,571.9L86.9,585.5L100.1,598.9L115.2,612.1L132.1,625.1L150.9,637.8L171.5,650L194,661.9L218.2,673.2L244.1,684L271.6,694.1L300.7,703.5L331.3,712.2L363.3,720L396.4,727L430.7,733L465.9,738.1L501.9,742.2L538.5,745.3L575.6,747.3L612.9,748.2L650.3,748.1L687.6,746.8L724.6,744.6L761.1,741.3L797,736.9L832.1,731.6L866.2,725.3L899.1,718.1L930.9,710.1L961.2,701.2L990.1,691.6L1017.4,681.4L1043,670.5L1067,659L1089.1,647.1L1109.5,634.7L1128,622L1144.7,609L1159.6,595.7L1172.6,582.3L1183.8,568.7L1193.3,555.1L1201,541.4L1207,527.8L1211.4,514.2L1214.2,500.7L1215.4,487.4L1214.8,490.9L1213.6,504.3L1210.8,517.8L1206.4,531.4L1200.4,545.1L1192.7,558.8L1183.2,572.4L1172,586L1159,599.5L1144.1,612.8L1127.4,625.8L1108.9,638.6L1088.6,651L1066.4,662.9L1042.5,674.4L1016.9,685.3L989.6,695.6L960.8,705.2L930.5,714.1L898.8,722.1L865.8,729.3L831.8,735.6L796.8,741L761,745.3L724.5,748.7L687.5,750.9L650.3,752.1L613,752.3L575.7,751.3L538.7,749.3L502.1,746.3L466.2,742.2L431,737.1L396.8,731L363.6,724L331.7,716.2L301.2,707.5L272.1,698.1L244.6,687.9L218.7,677.2L194.5,665.8L172.1,653.9L151.5,641.6L132.8,628.9L115.8,615.9L100.8,602.7L87.5,589.2L76.1,575.6L66.4,561.9L58.6,548.2L52.4,534.5L47.9,520.8L45,507.2L43.6,493.8Z" fill="#0000ce"/>
<path d="M43.5,493L44.8,506.4L47.7,519.9L52.2,533.6L58.4,547.3L66.3,561L75.9,574.7L87.4,588.3L100.6,601.8L115.7,615L132.6,628L151.4,640.7L172,653L194.4,664.9L218.6,676.2L244.5,687L272,697.1L301.1,706.6L331.6,715.2L363.5,723.1L396.7,730.1L430.9,736.1L466.1,741.2L502.1,745.3L538.7,748.4L575.7,750.4L613,751.3L650.3,751.2L687.6,750L724.5,747.7L761,744.4L796.8,740L831.9,734.7L865.9,728.4L898.9,721.2L930.6,713.1L960.9,704.3L989.7,694.7L1017,684.4L1042.6,673.5L1066.5,662L1088.7,650.1L1109,637.7L1127.6,624.9L1144.2,611.9L1159.1,598.6L1172.1,585.1L1183.4,571.6L1192.8,557.9L1200.5,544.2L1206.6,530.5L1210.9,516.9L1213.7,503.4L1215,490.1L1214.3,493.6L1213.1,506.9L1210.3,520.5L1205.9,534.1L1199.9,547.8L1192.2,561.5L1182.7,575.2L1171.5,588.9L1158.5,602.4L1143.6,615.7L1127,628.8L1108.5,641.5L1088.1,653.9L1066,665.9L1042.1,677.4L1016.5,688.3L989.3,698.6L960.5,708.3L930.2,717.1L898.5,725.2L865.6,732.4L831.6,738.7L796.6,744.1L760.8,748.4L724.4,751.8L687.5,754.1L650.3,755.3L613,755.4L575.8,754.5L538.8,752.5L502.3,749.4L466.3,745.3L431.2,740.2L397,734.1L363.9,727.1L332,719.3L301.5,710.6L272.5,701.1L245,691L219.1,680.2L195,668.8L172.6,656.9L152,644.6L133.2,631.9L116.3,618.8L101.2,605.5L88,592.1L76.6,578.4L66.9,564.7L59.1,551L52.9,537.2L48.4,523.5L45.5,509.9L44.1,496.5Z" fill="#0000c3"/>
<path d="M44,495.6L45.3,509.1L48.2,522.7L52.7,536.4L58.9,550.1L66.8,563.8L76.4,577.5L87.9,591.2L101.1,604.6L116.2,617.9L133.1,631L151.9,643.7L172.4,656L194.8,667.9L219,679.2L244.8,690L272.3,700.2L301.4,709.6L331.9,718.3L363.8,726.2L396.9,733.2L431.1,739.2L466.3,744.3L502.2,748.4L538.8,751.5L575.7,753.5L613,754.4L650.3,754.3L687.5,753.1L724.4,750.8L760.9,747.5L796.7,743.1L831.7,737.8L865.7,731.5L898.6,724.3L930.3,716.2L960.6,707.3L989.4,697.7L1016.6,687.4L1042.2,676.5L1066.1,665L1088.3,653L1108.6,640.6L1127.1,627.9L1143.8,614.8L1158.6,601.5L1171.7,588L1182.9,574.4L1192.3,560.7L1200.1,547L1206.1,533.3L1210.5,519.6L1213.2,506.1L1214.5,492.7L1213.9,496.2L1212.6,509.6L1209.8,523.2L1205.4,536.9L1199.4,550.6L1191.7,564.3L1182.3,578.1L1171,591.7L1158,605.2L1143.2,618.6L1126.5,631.7L1108,644.5L1087.7,656.9L1065.6,668.9L1041.7,680.4L1016.2,691.3L988.9,701.7L960.1,711.3L929.9,720.2L898.3,728.3L865.4,735.5L831.4,741.8L796.5,747.2L760.7,751.5L724.3,754.9L687.4,757.2L650.3,758.4L613,758.5L575.8,757.6L538.9,755.6L502.4,752.5L466.5,748.4L431.4,743.3L397.3,737.2L364.2,730.2L332.3,722.3L301.9,713.6L272.8,704.1L245.4,694L219.5,683.2L195.4,671.8L173,659.9L152.5,647.5L133.7,634.8L116.8,621.7L101.7,608.4L88.5,594.9L77.1,581.3L67.4,567.5L59.6,553.7L53.4,540L48.9,526.2L46,512.6L44.6,499.1Z" fill="#0000b8"/>
<path d="M44.5,498.3L45.8,511.8L48.7,525.4L53.2,539.1L59.4,552.9L67.3,566.6L76.9,580.4L88.4,594L101.6,607.5L116.7,620.8L133.6,633.9L152.3,646.6L172.9,658.9L195.3,670.8L219.4,682.2L245.2,693L272.7,703.2L301.8,712.7L332.3,721.4L364.1,729.2L397.2,736.2L431.4,742.3L466.5,747.4L502.4,751.5L538.9,754.6L575.8,756.6L613,757.6L650.3,757.4L687.5,756.2L724.3,753.9L760.7,750.6L796.5,746.2L831.5,740.9L865.5,734.6L898.3,727.3L930,719.3L960.2,710.4L989,700.7L1016.3,690.4L1041.8,679.5L1065.7,668L1087.8,656L1108.2,643.6L1126.7,630.8L1143.3,617.7L1158.2,604.3L1171.2,590.8L1182.4,577.2L1191.9,563.5L1199.6,549.7L1205.6,536L1210,522.4L1212.8,508.8L1214,495.4L1213.4,498.9L1212.2,512.3L1209.4,525.9L1205,539.6L1198.9,553.3L1191.2,567.1L1181.8,580.9L1170.6,594.5L1157.5,608.1L1142.7,621.4L1126.1,634.6L1107.6,647.4L1087.3,659.8L1065.2,671.9L1041.3,683.4L1015.8,694.3L988.6,704.7L959.8,714.3L929.6,723.2L898,731.3L865.2,738.6L831.2,744.9L796.3,750.3L760.6,754.6L724.2,758L687.4,760.3L650.3,761.5L613,761.6L575.9,760.7L539,758.7L502.5,755.6L466.7,751.5L431.6,746.4L397.5,740.3L364.5,733.3L332.7,725.4L302.2,716.7L273.2,707.2L245.7,697L219.9,686.2L195.8,674.7L173.5,662.8L152.9,650.4L134.2,637.7L117.3,624.6L102.2,611.3L89,597.7L77.6,584.1L67.9,570.3L60.1,556.5L53.9,542.7L49.4,529L46.5,515.3L45.1,501.8Z" fill="#0000ac"/>
<path d="M26.6,400L27.7,412.5L30.4,425.1L34.8,437.9L41,450.6L48.8,463.5L58.5,476.2L70.1,489L83.5,501.5L98.9,514L116.2,526.2L135.4,538.1L156.5,549.6L179.5,560.8L204.3,571.4L230.9,581.6L259.3,591.1L289.3,600L320.8,608.2L353.8,615.6L388.1,622.2L423.5,627.9L459.9,632.7L497.1,636.6L535,639.5L573.4,641.4L612,642.3L650.7,642.1L689.3,641L727.6,638.9L765.4,635.7L802.5,631.6L838.8,626.6L874,620.7L908,613.9L940.8,606.3L972.1,598L1001.8,588.9L1029.9,579.3L1056.3,569L1080.9,558.2L1103.6,547L1124.4,535.4L1143.4,523.5L1160.4,511.2L1175.5,498.8L1188.7,486.2L1200.1,473.5L1209.6,460.7L1217.3,448L1223.3,435.2L1227.6,422.5L1230.2,410L1231.2,397.5L1213.4,498.9L1212.2,512.3L1209.4,525.9L1205,539.6L1198.9,553.3L1191.2,567.1L1181.8,580.9L1170.6,594.5L1157.5,608.1L1142.7,621.4L1126.1,634.6L1107.6,647.4L1087.3,659.8L1065.2,671.9L1041.3,683.4L1015.8,694.3L988.6,704.7L959.8,714.3L929.6,723.2L898,731.3L865.2,738.6L831.2,744.9L796.3,750.3L760.6,754.6L724.2,758L687.4,760.3L650.3,761.5L613,761.6L575.9,760.7L539,758.7L502.5,755.6L466.7,751.5L431.6,746.4L397.5,740.3L364.5,733.3L332.7,725.4L302.2,716.7L273.2,707.2L245.7,697L219.9,686.2L195.8,674.7L173.5,662.8L152.9,650.4L134.2,637.7L117.3,624.6L102.2,611.3L89,597.7L77.6,584.1L67.9,570.3L60.1,556.5L53.9,542.7L49.4,529L46.5,515.3L45.1,501.8Z" fill="url(#dkf)"/>
<path d="M1230.5,407.9L1231.3,395.4L1230.5,383.2L1228.4,371.1L1224.8,359.3L1219.9,347.7L1213.8,336.4L1206.4,325.4L1198,314.7L1188.5,304.3L1178,294.2L1166.5,284.4L1154.2,275L1141,265.9L1127.1,257.1L1112.5,248.7L1097.1,240.7L1081.2,233L1064.6,225.6L1047.6,218.6L1030,212L1011.9,205.7L993.5,199.7L974.6,194.1L955.4,188.9L935.8,184L915.9,179.4L895.8,175.2L875.4,171.3L854.8,167.7L833.9,164.5L812.9,161.6L791.7,159L770.4,156.8L749,154.8L727.5,153.2L705.9,152L684.2,151L662.5,150.4L640.7,150.1L618.9,150.1L597.2,150.5L575.4,151.1L553.7,152.1L532.1,153.4L510.5,155.1L489,157L467.7,159.3L446.5,161.9L425.4,164.9L404.5,168.1L383.8,171.7L363.3,175.7L343.1,180L323.2,184.6L303.5,189.6L284.2,194.9L265.2,200.5L246.7,206.5L228.5,212.9L210.9,219.6L193.7,226.7L177.1,234.1L161,241.9L145.6,250L130.9,258.5L116.9,267.3L103.7,276.5L91.3,286L79.8,295.9L69.2,306L59.7,316.6L51.2,327.4L43.9,338.5L37.7,349.9L32.9,361.5L29.3,373.4L27.2,385.6L26.5,397.9L27.4,410.4" stroke="url(#edge)" stroke-width="5" fill="none" filter="url(#bl2)"/>
<path d="M1101.2,260.2L1088.4,252.7L1075,245.5L1061.1,238.6L1046.6,231.9L1031.7,225.6L1016.3,219.5L1000.5,213.7L984.3,208.2L967.8,203.1L950.9,198.1L933.7,193.5L916.2,189.2L898.5,185.1L880.5,181.4L862.3,177.9L843.8,174.7L825.2,171.8L806.5,169.1L787.6,166.8L768.5,164.7L749.4,162.9L730.1,161.4L710.8,160.1L691.4,159.1L672,158.4L652.5,158L633,157.8L613.5,157.9L594,158.3L574.6,159L555.1,159.9L535.8,161.1L516.5,162.6L497.2,164.3L478.1,166.4L459.1,168.7L440.3,171.3L421.6,174.1L403,177.3L384.7,180.7L366.6,184.4L348.7,188.4L331,192.7L313.7,197.3L296.6,202.2L279.9,207.3L263.5,212.8L247.5,218.5L231.9,224.5L216.7,230.9L202,237.5L187.9,244.4L174.2,251.6L161.2,259L148.7,266.8L137,274.8L125.9,283.2L115.5,291.8L105.9,300.6L97.2,309.8L89.3,319.1L82.4,328.7L76.4,338.6L71.4,348.7L67.5,358.9L64.7,369.4L63.1,380L62.7,390.8L63.5,401.7L65.7,412.7L69.2,423.8L74,435L80.4,446.1L88.1,457.3L97.4,468.4L108.2,479.4L120.5,490.3L134.3,501.1L149.7,511.6L166.7,521.9L185.2,531.9L205.2,541.6L226.7,550.9L249.6,559.8L273.9,568.2L299.6,576L326.5,583.4L354.6,590.1L383.8,596.2L414,601.6L445,606.3L476.8,610.3L509.2,613.5L542.2,615.9L575.5,617.6L609,618.4L642.6,618.5L676.2,617.7L709.5,616.1L742.5,613.7L775,610.6L806.9,606.6L838.1,602L868.4,596.6L897.8,590.6L926,583.9L953.1,576.6L979,568.8L1003.6,560.5L1026.7,551.6L1048.5,542.4L1068.7,532.8L1087.5,522.8L1104.7,512.6L1120.4,502L1134.6,491.3L1147.2,480.5L1158.3,469.5L1167.9,458.4L1176,447.3L1182.6,436.1L1187.9,425L1191.7,413.9L1194.2,402.9L1195.4,392.1L1195.3,381.3L1194,370.7L1191.5,360.2L1188,349.9L1183.3,339.9L1177.6,330L1171,320.4L1163.4,311L1155,301.9L1145.7,293L1135.7,284.4L1124.9,276.1L1113.4,268L1101.2,260.2" stroke="url(#edge)" stroke-width="7" fill="none" filter="url(#bl2)" opacity="0.8"/>
<path d="M1112.6,255.4L1097.2,246.6L1081.1,238.1L1064.2,230.1L1046.6,222.5L1028.5,215.3L1009.7,208.4L990.5,202L970.7,196L950.6,190.3L930,185.1L909,180.2L887.8,175.7L866.2,171.7L844.3,167.9L822.3,164.6L800,161.7L777.5,159.1L754.9,156.9L732.1,155.1L709.2,153.7L686.3,152.6L663.3,151.9L640.3,151.6L617.2,151.6L594.2,152L571.1,152.8L548.2,153.9L525.3,155.5L502.5,157.4L479.9,159.6L457.4,162.3L435,165.3L412.9,168.7L391,172.5L369.4,176.7L348.1,181.3L327.1,186.2L306.5,191.6L286.2,197.3L266.4,203.4L247.1,210L228.4,216.9L210.2,224.3L192.6,232L175.7,240.1L159.6,248.7L144.2,257.6L129.7,266.9L116.1,276.6L103.5,286.7L91.9,297.2L81.5,308L72.3,319.2L64.4,330.7L57.8,342.6L52.7,354.7L49,367.1L47,379.7L46.7,392.6L48.1,405.6L51.3,418.8L56.5,432L63.6,445.4L72.7,458.7L83.9,471.9L97.3,485.1L112.7,498L130.4,510.7L150.2,523.1L172.1,535.1L196.2,546.6L222.3,557.6L250.5,568L280.6,577.7L312.4,586.7L346,594.8L381.1,602.1L417.5,608.4L455.1,613.7L493.7,617.9L533.1,621.1L573,623.2L613.3,624.1L653.6,624L693.8,622.7L733.6,620.2L772.8,616.7L811.2,612.1L848.5,606.5L884.6,599.9L919.3,592.4L952.5,584L983.9,574.8L1013.5,564.9L1041.2,554.3L1066.9,543.1L1090.5,531.5L1111.9,519.4L1131.3,506.9L1148.4,494.1L1163.5,481.1L1176.4,468L1187.2,454.8L1195.9,441.5L1202.7,428.2L1207.5,415L1210.4,401.9L1211.5,389L1211,376.2L1208.7,363.7L1204.9,351.4L1199.6,339.4L1192.9,327.6L1184.8,316.2L1175.5,305.2L1165,294.5L1153.4,284.1L1140.7,274.2L1127.1,264.6L1112.6,255.4Z" stroke="url(#crg)" stroke-width="11" fill="none" filter="url(#bl)"/>
</g>
<linearGradient id="yl" x1="1048" y1="217" x2="1044" y2="238" gradientUnits="userSpaceOnUse"><stop offset="0" stop-color="#fff000"/><stop offset="0.6" stop-color="#e6d400"/><stop offset="1" stop-color="#c0aa00"/></linearGradient>
<path d="M1031.7,228.3L1042.5,216.7L1064.2,225.8L1052.5,237.5Z" fill="url(#yl)"/>
<path d="M840,164.3L958,190M846,164.6L962,189.4M1100.6,243L1051.8,324.4M890.4,591.6L796.7,751" stroke="#fff" stroke-width="1" fill="none" opacity="0.9"/>
</svg>
<svg class="abs" style="left:8px;top:84px" width="37" height="320" viewBox="8 84 37 320"><rect x="13" y="86" width="26" height="25" rx="4.5" fill="#59575d"/><path d="M30.2,95.5a4.6,4.6 0 1 0 0.6,4.6" fill="none" stroke="#6d6b71" stroke-width="0.9"/><path d="M31.4,93.2l0.2,3.2l-3,-0.8z" fill="#6d6b71"/><path d="M11.2,121.5h3l1,-1.8h4.6l1,1.8h3v8h-12.6z" fill="#636167"/><circle cx="17.4" cy="125.3" r="2.6" fill="none" stroke="#25222c" stroke-width="1.2"/><path d="M20,135.5H38M29,126.5V144.5" stroke="#636167" stroke-width="3" fill="none"/><path d="M41,135.5L36,140.5L36,130.5ZM17,135.5L22,130.5L22,140.5ZM29,147.5L24,142.5L34,142.5ZM29,123.5L34,128.5L24,128.5Z" fill="#636167"/><path d="M17,168.5H35M26,159.5V177.5" stroke="#636167" stroke-width="3" fill="none"/><path d="M38,168.5L33,173.5L33,163.5ZM14,168.5L19,163.5L19,173.5ZM26,180.5L21,175.5L31,175.5ZM26,156.5L31,161.5L21,161.5Z" fill="#636167"/><path d="M12.5,189.5h8v6.5h-8zM20.5,191.5h2.6l1.8,2.2v2.3h-4.4z" fill="#48464c"/><circle cx="14.8" cy="196.6" r="1.5" fill="#48464c"/><circle cx="21.8" cy="196.6" r="1.5" fill="#48464c"/><path d="M20,205.5H38M29,196.5V214.5" stroke="#48464c" stroke-width="3" fill="none"/><path d="M41,205.5L36,210.5L36,200.5ZM17,205.5L22,200.5L22,210.5ZM29,217.5L24,212.5L34,212.5ZM29,193.5L34,198.5L24,198.5Z" fill="#48464c"/><circle cx="23.7" cy="235.4" r="7.6" fill="none" stroke="#636167" stroke-width="3"/><path d="M29.8,241.4l7,6.4" stroke="#636167" stroke-width="3.8" stroke-linecap="round"/><path d="M19.8,235.4h7.8M23.7,231.5v7.8" stroke="#636167" stroke-width="2"/><path d="M11.7,265.5l7,-6h22v19.5l-7,6" fill="none" stroke="#0a0a0c" stroke-width="1.2"/><path d="M33.7,265.5l7,-6" stroke="#0a0a0c" stroke-width="1.2"/><path d="M18.7,259.5v6M33.7,278h7" stroke="#cfcfcf" stroke-width="0.8"/><rect x="11.7" y="265.5" width="22" height="19.5" fill="#62a0b4" stroke="#0a0a0c" stroke-width="1.2"/><path d="M11.7,301.5l7,-6h22l-7,6z" fill="#6fb1c6" stroke="#0a0a0c" stroke-width="1.2"/><path d="M18.7,296v19.5h22M18.7,315.5l-7,6" stroke="#cfcfcf" stroke-width="0.8" fill="none"/><path d="M11.7,301.5h22v20h-22zM33.7,321.5l7,-6v-20" fill="none" stroke="#0a0a0c" stroke-width="1.2"/><path d="M13.6,349.6L31.6,331M20.2,355.4L38,336.2" stroke="#57555a" stroke-width="2" stroke-linecap="round"/><path d="M16.5,368.5h19.5M22.5,368v-2.6h7.5v2.6" fill="none" stroke="#48464c" stroke-width="1.8"/><path d="M18.4,371h15.8l-1,16h-13.8z" fill="#48464c"/><path d="M22.6,373.5v11M26.3,373.5v11M30,373.5v11" stroke="#25222c" stroke-width="1.2"/></svg>
<svg class="abs" style="left:80px;top:840px" width="80" height="60" viewBox="80 840 80 60"><path d="M103.4,889.4L94.6,877.4" stroke="#0a8a0a" stroke-width="6.4" stroke-linecap="butt"/><path d="M92.8,873.6l8.6,2.2l-7.6,6.2z" fill="#12c012"/><path d="M102,888L96,880" stroke="#14c814" stroke-width="3"/><path d="M106,888.2l19.5,-4.8" stroke="#b00808" stroke-width="5"/><path d="M136.6,883.2l-12.2,-4.4l1.6,11.4z" fill="#a80606"/><path d="M108,886.6l17,-4.2" stroke="#d01010" stroke-width="1.6"/><path d="M105.1,890.4v-19.4" stroke="#04045a" stroke-width="5.4"/><path d="M104.9,860.2l-5.2,11.8h10.6z" fill="#04045a"/><text x="99.6" y="856" font-family="Liberation Sans, sans-serif" font-size="16" font-weight="700" font-style="italic" fill="#1010c0">Z</text><text x="142.4" y="888.4" font-family="Liberation Sans, sans-serif" font-size="16" font-weight="700" font-style="italic" fill="#a40c0c">X</text><text transform="translate(85.2 871.8) scale(0.55 1)" font-family="Liberation Sans, sans-serif" font-size="16" font-weight="700" fill="#0e8a0e">Y</text></svg>
<div id="vsplit"></div>
<div class="gb" style="left:1264px;top:64px;width:638px;height:888px"></div>
<div class="seg" style="left:1431px;top:56px;width:305px;height:18px"></div>
<div class="segsel" style="left:1596px;top:56.5px;width:61px;height:17px"></div>
<div class="abs" style="left:1545px;top:60px;width:1px;height:10px;background:#45434b"></div>
<div class="t " style="left:1442px;top:58px;color:#ebe9ee;">Object Placement</div>
<div class="t " style="left:1556px;top:58px;color:#ebe9ee;">Slicer</div>
<div class="t " style="left:1606px;top:58px;color:#ebe9ee;">G-Code</div>
<div class="t " style="left:1668px;top:58px;color:#ebe9ee;">Print Panel</div>
<svg class="abs" style="left:1268px;top:76px" width="240" height="40" viewBox="1268 76 240 40"><path d="M1335.5,77.5v38M1428.5,77.5v38M1498.5,77.5v38" stroke="#35333b" stroke-width="1"/><path d="M1278.8,88.8h7.4l5,5v11.6h-12.4z" fill="none" stroke="#605e63" stroke-width="1.6"/><path d="M1285.8,88.8v5.6h5.4" fill="none" stroke="#605e63" stroke-width="1.4"/><rect x="1306.5" y="88.5" width="17.5" height="17.5" rx="1.5" fill="#605e63"/><path d="M1307.4,96.6v-6.4a1,1 0 0 1 1,-1h13.6a1,1 0 0 1 1,1v6.4z" fill="#201e26"/><path d="M1307.2,90a1.2,1.2 0 0 1 1.2,-1.2h13.6a1.2,1.2 0 0 1 1.2,1.2v6.4" fill="none" stroke="#dcdcdc" stroke-width="0.9"/><rect x="1316.8" y="90.8" width="1.7" height="3.4" fill="#8f8d93"/><path d="M1348.6,97.2L1365,107.4M1348.6,102.8L1365,92.2" stroke="#605e63" stroke-width="1.8" stroke-linecap="round"/><ellipse cx="1346.2" cy="94.8" rx="3.3" ry="2.3" transform="rotate(40 1346.2 94.8)" fill="none" stroke="#605e63" stroke-width="1.7"/><ellipse cx="1346.2" cy="105.2" rx="3.3" ry="2.3" transform="rotate(-40 1346.2 105.2)" fill="none" stroke="#605e63" stroke-width="1.7"/><path d="M1373.8,95.4l3,-3h5.6v11.4h-8.6z" fill="none" stroke="#605e63" stroke-width="1.4"/><path d="M1381.6,99.4l3,-3h5.8v12.6h-8.8z" fill="#25222c" stroke="#605e63" stroke-width="1.4"/><path d="M1401.4,93.2h10.8v11h-10.8z" fill="#605e63"/><rect x="1404" y="91.6" width="5.6" height="2.4" fill="#605e63"/><path d="M1408.8,98.4h6.4l3.2,3.2v8.6h-9.6z" fill="#25222c" stroke="#605e63" stroke-width="1.4"/><path d="M1414.8,98.6v3.4h3.4" fill="none" stroke="#605e63" stroke-width="1.1"/><path d="M1440.6,98.2a7.2,7.2 0 1 1 -0.4,6.2" fill="none" stroke="#434148" stroke-width="2.5"/><path d="M1437.4,92.8l0.6,7.8l6.8,-3z" fill="#434148"/><path d="M1486,98.2a7.2,7.2 0 1 0 0.4,6.2" fill="none" stroke="#434148" stroke-width="2.5"/><path d="M1489.2,92.8l-0.6,7.8l-6.8,-3z" fill="#434148"/></svg>
<div class="abs" style="left:1507px;top:86px;width:140px;height:20px;border-radius:5px;background:#5f5d63"></div>
<div class="abs" style="left:1629px;top:88px;width:16px;height:16px;border-radius:4px;background:#1c68e3"></div>
<svg class="abs" style="left:1629px;top:88px" width="16" height="16" viewBox="0 0 16 16"><path d="M5,6.4l3,-3l3,3M5,9.6l3,3l3,-3" fill="none" stroke="#fff" stroke-width="1.5" stroke-linecap="round" stroke-linejoin="round"/></svg>
<div class="t " style="left:1515px;top:89px;font-size:13px;color:#f0eef2;line-height:16px;height:16px;margin-top:-1px;">G-Code</div>
<div class="code"><div class="row p" style="top:-4px"><div class="gut">1018</div><div class="ct"><b>G1</b> <i>F</i>800 <i>X</i>111.78509 <i>Y</i>97.65408 <i>Z</i>1.80000 <i>E</i>0.00589</div></div><div class="row" style="top:14px"><div class="gut">1019</div><div class="ct"><b>G1</b> <i>F</i>800 <i>X</i>112.23734 <i>Y</i>98.09921 <i>Z</i>1.80000 <i>E</i>0.00589</div></div><div class="row p" style="top:32px"><div class="gut">1020</div><div class="ct"><b>G1</b> <i>F</i>800 <i>X</i>112.66044 <i>Y</i>98.57212 <i>Z</i>1.80000 <i>E</i>0.00589</div></div><div class="row" style="top:50px"><div class="gut">1021</div><div class="ct"><b>G1</b> <i>F</i>800 <i>X</i>113.05270 <i>Y</i>99.07092 <i>Z</i>1.80000 <i>E</i>0.00589</div></div><div class="row p" style="top:68px"><div class="gut">1022</div><div class="ct"><b>G1</b> <i>F</i>800 <i>X</i>113.41254 <i>Y</i>99.59359 <i>Z</i>1.80000 <i>E</i>0.00589</div></div><div class="row" style="top:86px"><div class="gut">1023</div><div class="ct"><b>G1</b> <i>F</i>800 <i>X</i>113.73849 <i>Y</i>100.13803 <i>Z</i>1.80000 <i>E</i>0.00589</div></div><div class="row p" style="top:104px"><div class="gut">1024</div><div class="ct"><b>G1</b> <i>F</i>800 <i>X</i>114.02927 <i>Y</i>100.70205 <i>Z</i>1.80000 <i>E</i>0.00589</div></div><div class="row" style="top:122px"><div class="gut">1025</div><div class="ct"><b>G1</b> <i>F</i>800 <i>X</i>114.28368 <i>Y</i>101.28338 <i>Z</i>1.80000 <i>E</i>0.00589</div></div><div class="row p" style="top:140px"><div class="gut">1026</div><div class="ct"><b>G1</b> <i>F</i>800 <i>X</i>114.50071 <i>Y</i>101.87967 <i>Z</i>1.80000 <i>E</i>0.00589</div></div><div class="row" style="top:158px"><div class="gut">1027</div><div class="ct"><b>G1</b> <i>F</i>800 <i>X</i>114.67949 <i>Y</i>102.48852 <i>Z</i>1.80000 <i>E</i>0.00589</div></div><div class="row p" style="top:176px"><div class="gut">1028</div><div class="ct"><b>G1</b> <i>F</i>800 <i>X</i>114.81929 <i>Y</i>103.10749 <i>Z</i>1.80000 <i>E</i>0.00589</div></div><div class="row" style="top:194px"><div class="gut">1029</div><div class="ct"><b>G1</b> <i>F</i>800 <i>X</i>114.91955 <i>Y</i>103.73408 <i>Z</i>1.80000 <i>E</i>0.00589</div></div><div class="row p" style="top:212px"><div class="gut">1030</div><div class="ct"><b>G1</b> <i>F</i>800 <i>X</i>114.97987 <i>Y</i>104.36576 <i>Z</i>1.80000 <i>E</i>0.00589</div></div><div class="row" style="top:230px"><div class="gut">1031</div><div class="ct"><b>G1</b> <i>F</i>800 <i>X</i>115.00000 <i>Y</i>105.00000 <i>Z</i>1.80000 <i>E</i>0.00589</div></div><div class="row p" style="top:248px"><div class="gut">1032</div><div class="ct"><b>G1</b> <i>E</i>-3.5</div></div><div class="row" style="top:266px"><div class="gut">1033</div><div class="ct"><b>G91</b></div></div><div class="row p" style="top:284px"><div class="gut">1034</div><div class="ct"><b>G0</b> <i>Z</i>2.0</div></div><div class="row" style="top:302px"><div class="gut">1035</div><div class="ct"><b>G90</b></div></div><div class="row p" style="top:320px"><div class="gut">1036</div><div class="ct"><b>G0</b> <i>F</i>5000 <i>X</i>115.00000 <i>Y</i>105.00000 <i>Z</i>4.00000</div></div><div class="row" style="top:338px"><div class="gut">1037</div><div class="ct"><b>G91</b></div></div><div class="row p" style="top:356px"><div class="gut d">1038</div><div class="ct"><b>G0</b> <i>Z</i>-2.0</div></div><div class="row" style="top:374px"><div class="gut d">1039</div><div class="ct"><b>G90</b></div></div><div class="row p" style="top:392px"><div class="gut d">1040</div><div class="ct"><b>G1</b> <i>E</i>3.2</div></div><div class="row" style="top:410px"><div class="gut d">1041</div><div class="ct"><b>G1</b> <i>F</i>800 <i>X</i>114.97987 <i>Y</i>105.63424 <i>Z</i>2.00000 <i>E</i>0.00589</div></div><div class="row p" style="top:428px"><div class="gut d">1042</div><div class="ct"><b>G1</b> <i>F</i>800 <i>X</i>114.91955 <i>Y</i>106.26592 <i>Z</i>2.00000 <i>E</i>0.00589</div></div><div class="row" style="top:446px"><div class="gut d">1043</div><div class="ct"><b>G1</b> <i>F</i>800 <i>X</i>114.81929 <i>Y</i>106.89251 <i>Z</i>2.00000 <i>E</i>0.00589</div></div><div class="row p" style="top:464px"><div class="gut d">1044</div><div class="ct"><b>G1</b> <i>F</i>800 <i>X</i>114.67949 <i>Y</i>107.51148 <i>Z</i>2.00000 <i>E</i>0.00589</div></div><div class="row" style="top:482px"><div class="gut d">1045</div><div class="ct"><b>G1</b> <i>F</i>800 <i>X</i>114.50071 <i>Y</i>108.12033 <i>Z</i>2.00000 <i>E</i>0.00589</div></div><div class="row p" style="top:500px"><div class="gut d">1046</div><div class="ct"><b>G1</b> <i>F</i>800 <i>X</i>114.28368 <i>Y</i>108.71662 <i>Z</i>2.00000 <i>E</i>0.00589</div></div><div class="row" style="top:518px"><div class="gut d">1047</div><div class="ct"><b>G1</b> <i>F</i>800 <i>X</i>114.02927 <i>Y</i>109.29795 <i>Z</i>2.00000 <i>E</i>0.00589</div></div><div class="row p" style="top:536px"><div class="gut d">1048</div><div class="ct"><b>G1</b> <i>F</i>800 <i>X</i>113.73849 <i>Y</i>109.86197 <i>Z</i>2.00000 <i>E</i>0.00589</div></div><div class="row" style="top:554px"><div class="gut d">1049</div><div class="ct"><b>G1</b> <i>F</i>800 <i>X</i>113.41254 <i>Y</i>110.40641 <i>Z</i>2.00000 <i>E</i>0.00589</div></div><div class="row p" style="top:572px"><div class="gut d">1050</div><div class="ct"><b>G1</b> <i>F</i>800 <i>X</i>113.05270 <i>Y</i>110.92908 <i>Z</i>2.00000 <i>E</i>0.00589</div></div><div class="row" style="top:590px"><div class="gut d">1051</div><div class="ct"><b>G1</b> <i>F</i>800 <i>X</i>112.66044 <i>Y</i>111.42788 <i>Z</i>2.00000 <i>E</i>0.00589</div></div><div class="row p" style="top:608px"><div class="gut d">1052</div><div class="ct"><b>G1</b> <i>F</i>800 <i>X</i>112.23734 <i>Y</i>111.90079 <i>Z</i>2.00000 <i>E</i>0.00589</div></div><div class="row" style="top:626px"><div class="gut d">1053</div><div class="ct"><b>G1</b> <i>F</i>800 <i>X</i>111.78509 <i>Y</i>112.34592 <i>Z</i>2.00000 <i>E</i>0.00589</div></div><div class="row p" style="top:644px"><div class="gut d">1054</div><div class="ct"><b>G1</b> <i>F</i>800 <i>X</i>111.30553 <i>Y</i>112.76146 <i>Z</i>2.00000 <i>E</i>0.00589</div></div><div class="row" style="top:662px"><div class="gut d">1055</div><div class="ct"><b>G1</b> <i>F</i>800 <i>X</i>110.80057 <i>Y</i>113.14576 <i>Z</i>2.00000 <i>E</i>0.00589</div></div><div class="row p" style="top:680px"><div class="gut d">1056</div><div class="ct"><b>G1</b> <i>F</i>800 <i>X</i>110.27220 <i>Y</i>113.49730 <i>Z</i>2.00000 <i>E</i>0.00589</div></div><div class="abs" style="left:175px;top:447px;width:1px;height:17px;background:#000"></div></div>
<div class="abs" style="left:1883px;top:116px;width:16px;height:686px;background:#2a2a2b"></div>
<div class="abs" style="left:1268px;top:802px;width:631px;height:16px;background:#2a2a2b"></div>
<div class="abs" style="left:1887px;top:701px;width:8px;height:19px;border-radius:4px;background:#6e6e6e"></div>
<div class="abs" style="left:1271px;top:806px;width:392px;height:8px;border-radius:4px;background:#6e6e6e"></div>
<div class="gb" style="left:1274px;top:823px;width:623px;height:89px;background:#2a2731;border-color:#3f3d45"></div>
<div class="abs" style="left:1296px;top:837px;width:14px;height:14px;border-radius:7px;background:#2270e6"></div><div class="abs" style="left:1300px;top:841px;width:6px;height:6px;border-radius:3px;background:#e2edff"></div>
<div class="abs" style="left:1296px;top:857px;width:14px;height:14px;border-radius:7px;background:linear-gradient(#4a484e,#5a585e)"></div>
<div class="abs" style="left:1296px;top:877px;width:14px;height:14px;border-radius:7px;background:linear-gradient(#4a484e,#5a585e)"></div>
<div class="t " style="left:1316px;top:837px;">Show complete code</div>
<div class="t " style="left:1316px;top:857px;">Show single layer</div>
<div class="t " style="left:1316px;top:877px;">Show layer range</div>
<div class="abs" style="left:1434px;top:830px;width:66px;height:22px;background:#3c3a41;border:1px solid #55535a"></div>
<div class="t tc" style="left:1434px;top:834px;width:66px;">First Layer:</div>
<div class="abs" style="left:1509px;top:831px;width:49px;height:20px;border-top:1px solid #46444b;border-bottom:1px solid #46444b;background:#28252f"></div>
<div class="t " style="left:1513px;top:833px;">0</div>
<div class="abs" style="left:1557px;top:832px;width:12px;height:20px;border-radius:5px;background:#4b494f"></div>
<svg class="abs" style="left:1557px;top:832px" width="12" height="20" viewBox="0 0 12 20"><path d="M3.3,7.2l2.7,-2.7l2.7,2.7M3.3,12.8l2.7,2.7l2.7,-2.7" fill="none" stroke="#e8e6ea" stroke-width="1.3" stroke-linecap="round" stroke-linejoin="round"/></svg>
<div class="abs" style="left:1583px;top:837px;width:303px;height:3px;background:#46444c;border-radius:1.5px"></div>
<div class="abs" style="left:1610.4px;top:834px;width:2px;height:8px;background:#5b595f"></div>
<div class="abs" style="left:1640.8px;top:834px;width:2px;height:8px;background:#5b595f"></div>
<div class="abs" style="left:1671.2px;top:834px;width:2px;height:8px;background:#5b595f"></div>
<div class="abs" style="left:1701.6px;top:834px;width:2px;height:8px;background:#5b595f"></div>
<div class="abs" style="left:1732.0px;top:834px;width:2px;height:8px;background:#5b595f"></div>
<div class="abs" style="left:1762.4px;top:834px;width:2px;height:8px;background:#5b595f"></div>
<div class="abs" style="left:1792.8px;top:834px;width:2px;height:8px;background:#5b595f"></div>
<div class="abs" style="left:1823.2px;top:834px;width:2px;height:8px;background:#5b595f"></div>
<div class="abs" style="left:1853.6px;top:834px;width:2px;height:8px;background:#5b595f"></div>
<div class="abs" style="left:1884.0px;top:834px;width:2px;height:8px;background:#5b595f"></div>
<div class="abs" style="left:1577px;top:828px;width:8px;height:20px;border-radius:4px;background:#8b898f"></div>
<div class="abs" style="left:1434px;top:860px;width:66px;height:22px;background:#3c3a41;border:1px solid #55535a"></div>
<div class="t tc" style="left:1434px;top:864px;width:66px;">Last Layer:</div>
<div class="abs" style="left:1509px;top:861px;width:49px;height:20px;border-top:1px solid #46444b;border-bottom:1px solid #46444b;background:#28252f"></div>
<div class="t " style="left:1513px;top:863px;">0</div>
<div class="abs" style="left:1557px;top:863px;width:12px;height:20px;border-radius:5px;background:#4b494f"></div>
<svg class="abs" style="left:1557px;top:863px" width="12" height="20" viewBox="0 0 12 20"><path d="M3.3,7.2l2.7,-2.7l2.7,2.7M3.3,12.8l2.7,2.7l2.7,-2.7" fill="none" stroke="#e8e6ea" stroke-width="1.3" stroke-linecap="round" stroke-linejoin="round"/></svg>
<div class="abs" style="left:1583px;top:868px;width:303px;height:3px;background:#46444c;border-radius:1.5px"></div>
<div class="abs" style="left:1610.4px;top:865px;width:2px;height:8px;background:#5b595f"></div>
<div class="abs" style="left:1640.8px;top:865px;width:2px;height:8px;background:#5b595f"></div>
<div class="abs" style="left:1671.2px;top:865px;width:2px;height:8px;background:#5b595f"></div>
<div class="abs" style="left:1701.6px;top:865px;width:2px;height:8px;background:#5b595f"></div>
<div class="abs" style="left:1732.0px;top:865px;width:2px;height:8px;background:#5b595f"></div>
<div class="abs" style="left:1762.4px;top:865px;width:2px;height:8px;background:#5b595f"></div>
<div class="abs" style="left:1792.8px;top:865px;width:2px;height:8px;background:#5b595f"></div>
<div class="abs" style="left:1823.2px;top:865px;width:2px;height:8px;background:#5b595f"></div>
<div class="abs" style="left:1853.6px;top:865px;width:2px;height:8px;background:#5b595f"></div>
<div class="abs" style="left:1884.0px;top:865px;width:2px;height:8px;background:#5b595f"></div>
<div class="abs" style="left:1577px;top:859px;width:8px;height:20px;border-radius:4px;background:#8b898f"></div>
<div class="t " style="left:1860px;top:884px;text-align:right;width:25px;">10</div>
<div class="seg" style="left:1480px;top:902px;width:211px;height:22px;background:#25222c"></div>
<div class="segsel" style="left:1481px;top:903px;width:88px;height:20px"></div>
<div class="abs" style="left:1617px;top:907px;width:1px;height:12px;background:#45434b"></div>
<div class="t " style="left:1493px;top:904px;">Visualization</div>
<div class="t " style="left:1582px;top:904px;">Help</div>
<div class="t " style="left:1629px;top:904px;">Variables</div>
<div class="t " style="left:1286px;top:932px;transform:scaleX(0.9);transform-origin:0 50%;">C13</div>
<div class="t " style="left:1326px;top:931px;transform:scaleX(0.945);transform-origin:0 50%;">R1043/1181</div>
<div class="t " style="left:1449px;top:932px;">Layer: 10 Tool: 0 Fil:23.3 Printing time:0:01</div>
<div id="hsplit"></div>
<div class="t " style="left:49px;top:970px;color:#9a989e;">Send</div>
<div class="t " style="left:423px;top:970px;color:#9a989e;">ACK</div>
<div class="btn " style="left:113px;width:85px">Info</div>
<div class="btn " style="left:206px;width:85px">Warnings</div>
<div class="btn " style="left:299px;width:85px">Errors</div>
<div class="btn " style="left:485px;width:85px">Autoscroll</div>
<div class="btn o" style="left:578px;width:85px">Copy</div>
<div class="btn o" style="left:671px;width:83px">Clear Log</div>
<div class="abs" style="left:0;top:989px;width:1905px;height:51px;border:1px solid #38363c;background:#1e1c25"></div>
<div class="abs" style="left:1905px;top:989px;width:15px;height:51px;background:#29292a"></div>
<div class="abs" style="left:0;top:1040px;width:1920px;height:15px;background:#29292a"></div>
<div class="abs" style="left:4px;top:1043px;width:1882px;height:8px;border-radius:4px;background:#6e6e6e"></div>
<div class="abs" style="left:0;top:1055px;width:1920px;height:25px;background:#1e1c25"></div>
<div class="t " style="left:7px;top:1059px;">Offline</div>
<div class="abs" style="left:254px;top:1064px;width:200px;height:3px;background:#38363e;border-radius:1.5px"></div><div class="abs" style="left:254px;top:1064px;width:3px;height:3px;border-radius:1.5px;background:#2f7bf0"></div>
<div class="t " style="left:475px;top:1059px;">1259 FPS Unknown printer firmw...</div>
<div class="t " style="left:661px;top:1059px;">Disconnected</div>
</div>
</body></html>
